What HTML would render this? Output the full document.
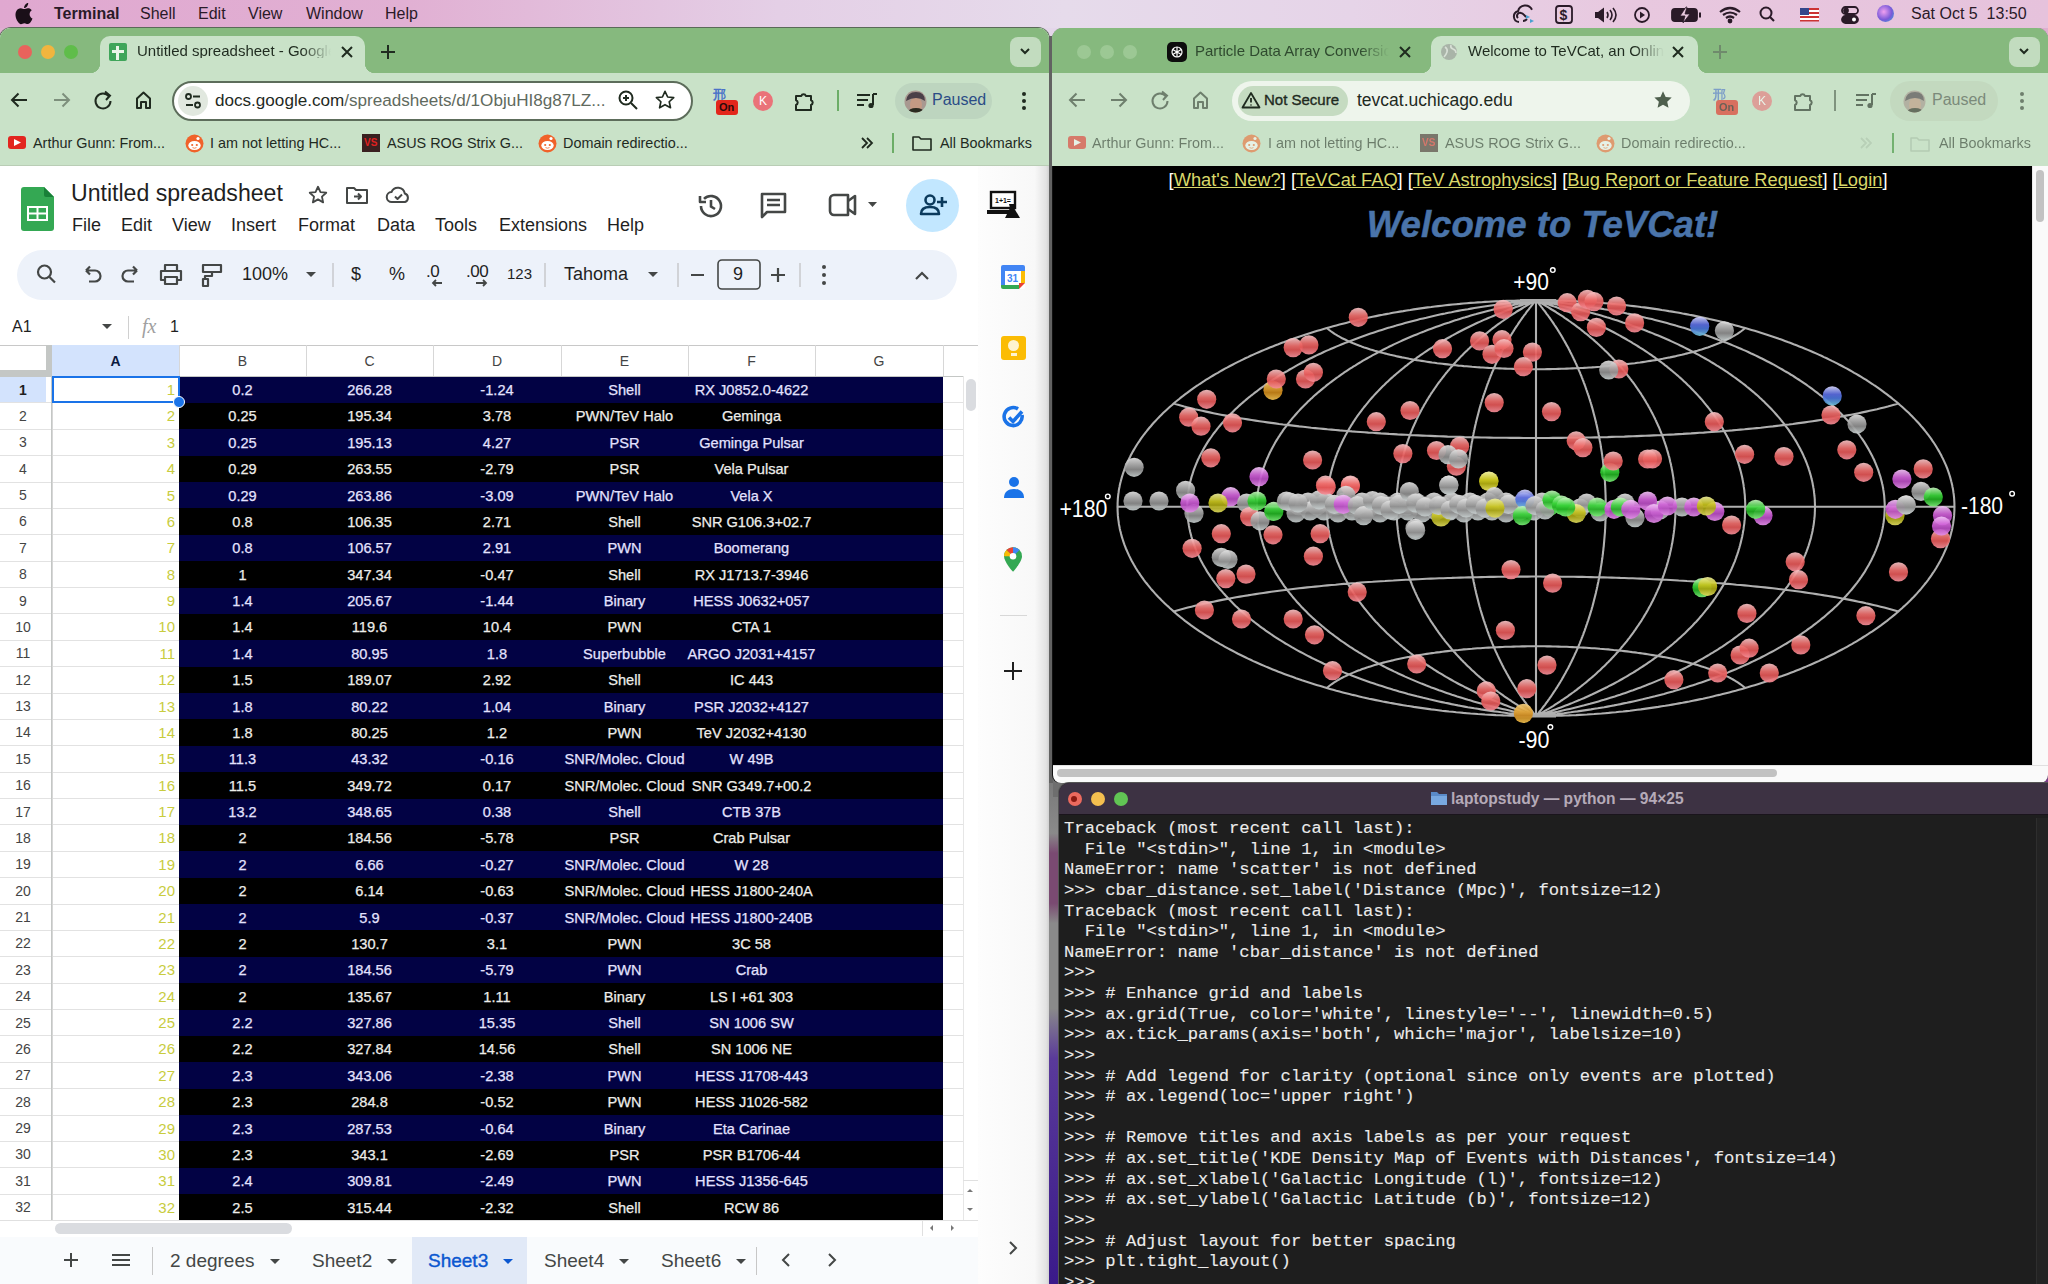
<!DOCTYPE html><html><head><meta charset="utf-8"><style>
*{margin:0;padding:0;box-sizing:border-box}
html,body{width:2048px;height:1284px;overflow:hidden;background:#dfaed0;font-family:"Liberation Sans",sans-serif;position:relative}
.abs{position:absolute}
.t{position:absolute;white-space:nowrap;line-height:1}
svg{position:absolute;overflow:visible}
</style></head><body>

<div class="abs" style="left:1030px;top:20px;width:40px;height:30px;background:#e4d6ea"></div>
<div class="abs" style="left:0;top:0;width:2048px;height:28px;background:linear-gradient(90deg,#e0a8d0 0%,#e1b0d3 20%,#e4cfe6 38%,#e6dbeb 52%,#e6d4e8 66%,#e8c8df 80%,#e6c2dc 100%)"></div>
<svg style="left:15px;top:3px" width="18" height="21" viewBox="0 0 18 21"><path d="M14.6 11.1c0-2.6 2.1-3.8 2.2-3.9-1.2-1.8-3.1-2-3.7-2-1.6-.2-3.1.9-3.9.9-.8 0-2-.9-3.4-.9C4 5.3 2.3 6.3 1.4 7.9c-1.9 3.2-.5 8 1.3 10.6.9 1.3 2 2.7 3.300 2.7 1.3-.1 1.8-.9 3.4-.9 1.6 0 2 .9 3.4.8 1.4 0 2.3-1.3 3.2-2.6 1-1.5 1.4-2.9 1.4-3-.1 0-2.8-1.100-2.8-4.4zM12.1 3.4c.7-.9 1.2-2.1 1.1-3.3-1 0-2.3.7-3 1.6-.7.8-1.2 2-1.1 3.2 1.1.1 2.3-.6 3-1.5z" fill="#1a0f18"/></svg>
<div class="t" style="left:54px;top:6px;font-size:16px;color:#2a1a28;font-weight:bold;">Terminal</div>
<div class="t" style="left:140px;top:6px;font-size:16px;color:#2a1a28;">Shell</div>
<div class="t" style="left:198px;top:6px;font-size:16px;color:#2a1a28;">Edit</div>
<div class="t" style="left:248px;top:6px;font-size:16px;color:#2a1a28;">View</div>
<div class="t" style="left:306px;top:6px;font-size:16px;color:#2a1a28;">Window</div>
<div class="t" style="left:385px;top:6px;font-size:16px;color:#2a1a28;">Help</div>
<div class="t" style="left:1911px;top:6px;font-size:16px;color:#2a1a28">Sat Oct 5&nbsp;&nbsp;13:50</div>
<svg style="left:1500px;top:2px" width="400" height="24" viewBox="0 0 400 24" fill="none" stroke="#2a1a28" stroke-width="1.8">
<g transform="translate(11,0)"><path d="M8 20a5.5 5.5 0 0 1-1-10.8 7.5 7.5 0 0 1 14-1.5" stroke-width="2"/><path d="M7 16a3 3 0 0 1 3-5c2 0 3 2 5 4" stroke-width="2"/><path d="M12 19c2 0 3-1 4-2" stroke-width="2"/><path d="M15 13l4 2-4 2zM19 17l4 2-4 2z" fill="#4aa0d0" stroke="none"/></g>
<rect x="56" y="4" width="16" height="17" rx="3"/><text x="59.5" y="18" font-size="14" style="font-family:Liberation Sans,sans-serif" fill="#2a1a28" stroke="none" font-weight="bold">$</text>
<path d="M95 10h3l6-4.5v15L98 16h-3z" fill="#2a1a28" stroke="none"/><path d="M107 10q2 3 0 6M110 8q4 5 0 10M113 6q6 7 0 14" stroke-width="1.6"/>
<circle cx="142" cy="13" r="7"/><path d="M140 9.5v7l5-3.5z" fill="#2a1a28" stroke="none"/>
<rect x="172" y="7" width="25" height="12" rx="3" fill="#2a1a28"/><rect x="199" y="10.5" width="2" height="5" fill="#2a1a28" stroke="none"/><path d="M186 5l-6 9h5l-2 7 7-9h-5l2-7z" fill="#e8c8de" stroke="#2a1a28" stroke-width="0.8"/>
<path d="M220 10q10-8 20 0M223 13q7-5 14 0M226 16q4-3 8 0" stroke-width="2.2"/><circle cx="230" cy="19" r="1.5" fill="#2a1a28"/>
<circle cx="266" cy="11" r="5.5" stroke-width="2"/><path d="M270 15l4 4" stroke-width="2.2"/>
<g stroke="none"><rect x="300" y="6" width="19" height="13" fill="#ffffff"/><rect x="300" y="6" width="19" height="2" fill="#c33"/><rect x="300" y="10" width="19" height="2" fill="#c33"/><rect x="300" y="14" width="19" height="2" fill="#c33"/><rect x="300" y="18" width="19" height="1.5" fill="#c33"/><rect x="300" y="6" width="9" height="7" fill="#34468a"/></g>
<rect x="342" y="5" width="16" height="7" rx="3.5"/><rect x="342" y="14" width="16" height="7" rx="3.5" fill="#2a1a28"/><circle cx="346" cy="8.5" r="2" fill="#2a1a28"/><circle cx="354" cy="17.5" r="2" fill="#fff" stroke="none"/>
</svg>
<div class="abs" style="left:1877px;top:5px;width:17px;height:17px;border-radius:50%;background:radial-gradient(circle at 40% 40%,#f0a0f0,#7a5ad8 55%,#2ab0d8)"></div>
<div class="abs" style="left:0;top:28px;width:1049px;height:1256px;background:#fff;border-radius:11px 11px 0 0;overflow:hidden;box-shadow:0 0 0 1px #5a6a58">
<div class="abs" style="left:0;top:0;width:1049px;height:138px;background:#c9e2c8"></div>
<div class="abs" style="left:0;top:0;width:1049px;height:45px;background:#86b97e"></div>
</div>
<div class="abs" style="left:18px;top:45px;width:14px;height:14px;border-radius:50%;background:#e8635c"></div>
<div class="abs" style="left:41px;top:45px;width:14px;height:14px;border-radius:50%;background:#f1b53f"></div>
<div class="abs" style="left:64px;top:45px;width:14px;height:14px;border-radius:50%;background:#5fbd4a"></div>
<div class="abs" style="left:100px;top:36px;width:265px;height:40px;background:#c9e2c8;border-radius:10px 10px 0 0"></div>
<div class="abs" style="left:90px;top:63px;width:10px;height:10px;background:radial-gradient(circle at 0 0,#86b97e 10px,#c9e2c8 10.5px)"></div>
<div class="abs" style="left:365px;top:63px;width:10px;height:10px;background:radial-gradient(circle at 100% 0,#86b97e 10px,#c9e2c8 10.5px)"></div>
<div class="abs" style="left:109px;top:43px;width:18px;height:18px;background:#3fa55a;border-radius:2px"></div>
<div class="abs" style="left:112px;top:50px;width:12px;height:3px;background:#eaf5e8"></div>
<div class="abs" style="left:116px;top:46px;width:3px;height:14px;background:#eaf5e8"></div>
<div class="t" style="left:137px;top:43px;font-size:15px;color:#1f2b1f;width:194px;overflow:hidden;-webkit-mask-image:linear-gradient(90deg,#000 85%,transparent)">Untitled spreadsheet - Google Sheets</div>
<svg style="left:340px;top:45px" width="14" height="14" viewBox="0 0 14 14" stroke="#1f2b1f" stroke-width="2"><path d="M2 2l10 10M12 2L2 12"/></svg>
<svg style="left:380px;top:44px" width="16" height="16" viewBox="0 0 16 16" stroke="#1f2b1f" stroke-width="2"><path d="M8 1v14M1 8h14"/></svg>
<div class="abs" style="left:1010px;top:37px;width:31px;height:30px;background:#c2dcbf;border-radius:8px"></div>
<svg style="left:1019px;top:47px" width="12" height="10" viewBox="0 0 12 10" fill="none" stroke="#1f2b1f" stroke-width="2"><path d="M2 2l4 4 4-4"/></svg>
<svg style="left:0px;top:73px" width="170" height="50" viewBox="0 0 170 50" fill="none" stroke="#1f2a1f" stroke-width="2">
<path d="M12 27h15M18.5 20.5L12 27l6.5 6.5"/>
<path d="M54 27h15M62.5 20.5L69 27l-6.5 6.5" stroke="#7d8f7c"/>
<path d="M109 23.5a7.5 7.5 0 1 0 1.5 4.5"/><path d="M105 18.5l5 4-4 4.5"/>
<path d="M137 35v-9.5l6.5-6 6.5 6V35h-4v-6h-5v6z" stroke-linejoin="round"/>
</svg>
<div class="abs" style="left:172px;top:81px;width:521px;height:40px;background:#fff;border:2px solid #5d6d5b;border-radius:20px"></div>
<div class="abs" style="left:178px;top:86px;width:30px;height:30px;background:#e1e8df;border-radius:50%"></div>
<svg style="left:184px;top:92px" width="18" height="18" viewBox="0 0 18 18" fill="none" stroke="#1f2a1f" stroke-width="1.8"><circle cx="4.5" cy="4.5" r="2.5"/><path d="M9 4.5h7M2 13h7"/><circle cx="13.5" cy="13" r="2.5"/></svg>
<div class="t" style="left:215px;top:92px;font-size:17.1px;color:#1f2a1f">docs.google.com<span style="color:#5f6a5e">/spreadsheets/d/1ObjuHI8g87LZ...</span></div>
<svg style="left:617px;top:89px" width="22" height="22" viewBox="0 0 22 22" fill="none" stroke="#1f2a1f" stroke-width="2"><circle cx="9" cy="9" r="6.5"/><path d="M14 14l6 6M9 6v6M6 9h6"/></svg>
<svg style="left:654px;top:89px" width="22" height="22" viewBox="0 0 24 24" fill="none" stroke="#1f2a1f" stroke-width="1.8" stroke-linejoin="round"><path d="M12 2.5l2.9 6.2 6.6.7-4.9 4.5 1.4 6.6L12 17.1l-5.9 3.4 1.4-6.6-4.9-4.5 6.6-.7z"/></svg>
<div class="t" style="left:713px;top:88px;font-size:13px;color:#4a72c8;font-weight:bold">邢</div>
<div class="abs" style="left:716px;top:100px;width:22px;height:15px;background:#e3261b;border-radius:3px"></div>
<div class="t" style="left:719px;top:102px;font-size:11px;color:#2a0a0a;font-weight:bold">On</div>
<div class="abs" style="left:753px;top:91px;width:20px;height:20px;border-radius:50%;background:#ea7379"></div>
<div class="t" style="left:759px;top:95px;font-size:12px;color:#fff">K</div>
<svg style="left:793px;top:89px" width="24" height="24" viewBox="0 0 24 24" fill="none" stroke="#1f2a1f" stroke-width="2" stroke-linejoin="round"><path d="M3 7h5.3a2.4 2.4 0 0 1 4.6 0H18v4.3a2.4 2.4 0 0 1 0 4.6V21H3v-5.1a2.4 2.4 0 0 0 0-4.6z"/></svg>
<div class="abs" style="left:837px;top:90px;width:2px;height:21px;background:#6cad67"></div>
<svg style="left:855px;top:90px" width="24" height="22" viewBox="0 0 24 22" fill="none" stroke="#1f2a1f" stroke-width="2"><path d="M2 5h13M2 10h11M2 15h7"/><path d="M18 4v11" /><circle cx="16" cy="15.5" r="2.6" fill="#1f2a1f" stroke="none"/><path d="M18 4h4"/></svg>
<div class="abs" style="left:895px;top:83px;width:97px;height:36px;background:#bdd5bf;border-radius:18px"></div>
<svg style="left:904px;top:89.5px" width="23" height="23" viewBox="0 0 23 23"><defs><clipPath id="avc"><circle cx="11.5" cy="11.5" r="11"/></clipPath></defs><g clip-path="url(#avc)"><rect width="23" height="23" fill="#a89890"/><ellipse cx="12" cy="15" rx="6" ry="8" fill="#c49a84"/><path d="M2 11q1-9 10-9t9 9q-4-3-9-3t-10 3z" fill="#4a4048"/><path d="M3 23q2-5 9-5t9 5z" fill="#2a2a20"/></g></svg>
<div class="t" style="left:932px;top:92px;font-size:16px;color:#2b4c86">Paused</div>
<svg style="left:1020px;top:91px" width="8" height="20" viewBox="0 0 8 20" fill="#1f2a1f"><circle cx="4" cy="3" r="2"/><circle cx="4" cy="10" r="2"/><circle cx="4" cy="17" r="2"/></svg>
<div class="abs" style="left:8px;top:136px;width:18px;height:13px;background:#e2261f;border-radius:3px;opacity:1"></div><svg style="left:14px;top:139px" width="7" height="7" viewBox="0 0 7 7"><path d="M0 0l7 3.5L0 7z" fill="#fff"/></svg>
<div class="t" style="left:33px;top:136px;font-size:14.4px;color:#1f2a1f">Arthur Gunn: From...</div>
<svg style="left:185px;top:134px;opacity:1" width="19" height="19" viewBox="0 0 19 19"><circle cx="9.5" cy="9.5" r="9" fill="#f0622a"/><ellipse cx="9.5" cy="11.5" rx="6.2" ry="4.6" fill="#fff"/><circle cx="7.2" cy="11" r="1.1" fill="#f0622a"/><circle cx="11.8" cy="11" r="1.1" fill="#f0622a"/><circle cx="13" cy="4.5" r="1.6" fill="#fff"/><path d="M7.5 13.6q2 1.2 4 0" stroke="#f0622a" stroke-width="0.8" fill="none"/></svg>
<div class="t" style="left:210px;top:136px;font-size:14.4px;color:#1f2a1f">I am not letting HC...</div>
<div class="abs" style="left:362px;top:134px;width:18px;height:18px;background:#3a2020;opacity:1"></div><div class="t" style="left:364px;top:138px;font-size:10px;font-weight:bold;color:#e02020;opacity:1">VS</div>
<div class="t" style="left:387px;top:136px;font-size:14.4px;color:#1f2a1f">ASUS ROG Strix G...</div>
<svg style="left:538px;top:134px;opacity:1" width="19" height="19" viewBox="0 0 19 19"><circle cx="9.5" cy="9.5" r="9" fill="#f0622a"/><ellipse cx="9.5" cy="11.5" rx="6.2" ry="4.6" fill="#fff"/><circle cx="7.2" cy="11" r="1.1" fill="#f0622a"/><circle cx="11.8" cy="11" r="1.1" fill="#f0622a"/><circle cx="13" cy="4.5" r="1.6" fill="#fff"/><path d="M7.5 13.6q2 1.2 4 0" stroke="#f0622a" stroke-width="0.8" fill="none"/></svg>
<div class="t" style="left:563px;top:136px;font-size:14.4px;color:#1f2a1f">Domain redirectio...</div>
<svg style="left:860px;top:137px" width="14" height="12" viewBox="0 0 14 12" fill="none" stroke="#1f2a1f" stroke-width="1.8"><path d="M2 1l5 5-5 5M7 1l5 5-5 5"/></svg>
<div class="abs" style="left:892px;top:133px;width:2px;height:20px;background:#6cad67"></div>
<svg style="left:912px;top:135px" width="20" height="16" viewBox="0 0 20 16" fill="none" stroke="#1f2a1f" stroke-width="1.6"><path d="M1 2h6l2 2h10v11H1z" stroke-linejoin="round"/></svg>
<div class="t" style="left:940px;top:136px;font-size:14.4px;color:#1f2a1f">All Bookmarks</div>
<div class="abs" style="left:0;top:165px;width:1049px;height:1px;background:#b9cdb5"></div>
<svg style="left:21px;top:187px" width="33" height="44" viewBox="0 0 33 44"><path d="M3 0h20l10 10v31a3 3 0 0 1-3 3H3a3 3 0 0 1-3-3V3a3 3 0 0 1 3-3z" fill="#34a853"/><path d="M23 0l10 10H25a2 2 0 0 1-2-2z" fill="#188038"/><rect x="6" y="19" width="21" height="15" fill="#fff"/><rect x="8" y="21" width="7.5" height="4.5" fill="#34a853"/><rect x="17.5" y="21" width="7.5" height="4.5" fill="#34a853"/><rect x="8" y="27.5" width="7.5" height="4.5" fill="#34a853"/><rect x="17.5" y="27.5" width="7.5" height="4.5" fill="#34a853"/></svg>
<div class="t" style="left:71px;top:182px;font-size:23.1px;color:#1f1f1f">Untitled spreadsheet</div>
<svg style="left:307px;top:184px" width="22" height="22" viewBox="0 0 24 24" fill="none" stroke="#444746" stroke-width="2" stroke-linejoin="round"><path d="M12 3l2.7 5.8 6.3.7-4.7 4.3 1.3 6.2L12 16.8 6.4 20l1.3-6.2L3 9.5l6.3-.7z"/></svg>
<svg style="left:346px;top:185px" width="22" height="20" viewBox="0 0 22 20" fill="none" stroke="#444746" stroke-width="2" stroke-linejoin="round"><path d="M1 3h7l2 2h11v13H1z"/><path d="M8 11.5h7M12 8.5l3 3-3 3"/></svg>
<svg style="left:386px;top:185px" width="25" height="19" viewBox="0 0 25 19" fill="none" stroke="#444746" stroke-width="2" stroke-linejoin="round"><path d="M6 17a5 5 0 0 1-.5-10 7 7 0 0 1 13.3 1.5A4.5 4.5 0 0 1 19 17z"/><path d="M9 11.5l2.5 2.5 4.5-4.5"/></svg>
<div class="t" style="left:72px;top:216px;font-size:18px;color:#1f1f1f">File</div>
<div class="t" style="left:121px;top:216px;font-size:18px;color:#1f1f1f">Edit</div>
<div class="t" style="left:172px;top:216px;font-size:18px;color:#1f1f1f">View</div>
<div class="t" style="left:231px;top:216px;font-size:18px;color:#1f1f1f">Insert</div>
<div class="t" style="left:298px;top:216px;font-size:18px;color:#1f1f1f">Format</div>
<div class="t" style="left:377px;top:216px;font-size:18px;color:#1f1f1f">Data</div>
<div class="t" style="left:435px;top:216px;font-size:18px;color:#1f1f1f">Tools</div>
<div class="t" style="left:499px;top:216px;font-size:18px;color:#1f1f1f">Extensions</div>
<div class="t" style="left:607px;top:216px;font-size:18px;color:#1f1f1f">Help</div>
<svg style="left:696px;top:191px" width="30" height="30" viewBox="0 0 30 30" fill="none" stroke="#444746" stroke-width="2.6"><path d="M5 15a10 10 0 1 0 3-7.1"/><path d="M4 5v6h6" stroke-linejoin="round"/><path d="M15 9v6.5l4 2.5"/></svg>
<svg style="left:759px;top:191px" width="29" height="29" viewBox="0 0 29 29" fill="none" stroke="#444746" stroke-width="2.6" stroke-linejoin="round"><path d="M3 3h23v18H8l-5 5z"/><path d="M8 9h13M8 14h13"/></svg>
<svg style="left:828px;top:192px" width="52" height="26" viewBox="0 0 52 26" fill="none" stroke="#444746" stroke-width="2.6" stroke-linejoin="round"><path d="M2 7a4 4 0 0 1 4-4h14v20H6a4 4 0 0 1-4-4z"/><path d="M20 9l7-5v18l-7-5"/><path d="M40 10l4.5 5 4.5-5z" fill="#444746" stroke="none"/></svg>
<div class="abs" style="left:906px;top:179px;width:53px;height:53px;border-radius:50%;background:#c2e7ff"></div>
<svg style="left:919px;top:192px" width="28" height="26" viewBox="0 0 28 26" fill="none" stroke="#0b3a5c" stroke-width="2.6"><circle cx="11" cy="8" r="4.5"/><path d="M2 22c0-5 4-7 9-7s9 2 9 7z" stroke-linejoin="round"/><path d="M23 5v10M18 10h10"/></svg>
<div class="abs" style="left:17px;top:250px;width:940px;height:50px;background:#edf2fa;border-radius:25px"></div>
<svg style="left:17px;top:250px" width="940" height="50" viewBox="0 0 940 50" fill="none" stroke="#444746" stroke-width="2.2">
<circle cx="27.5" cy="22" r="6.5"/><path d="M32.5 27l5.5 5.5"/>
<path d="M69 20.5h9a5.5 5.5 0 0 1 0 11h-6M69 20.5l4-4M69 20.5l4 4"/>
<path d="M120 20.5h-9a5.5 5.5 0 0 0 0 11h6M120 20.5l-4-4M120 20.5l-4 4"/>
<path d="M147 30h-3v-9h20v9h-3M148 21v-6h12v6M148 27h12v7h-12z" stroke-linejoin="round"/>
<path d="M186 15h18v7h-18zM195 22v4h-7v3M186 29h5v7h-5z" stroke-linejoin="round"/>
<path d="M289 22l5 5 5-5z" fill="#444746" stroke="none"/>
<path d="M316 13v24" stroke="#c7c9cc" stroke-width="1.5"/>
<path d="M528 13v24M661 13v24M783 13v24" stroke="#c7c9cc" stroke-width="1.5"/>
<path d="M631 22l5 5 5-5z" fill="#444746" stroke="none"/>
<path d="M674 25h13M754 25h14M761 18v14"/>
<rect x="701" y="10" width="42" height="29" rx="4" stroke-width="1.6"/>
<circle cx="807" cy="17" r="2" fill="#444746" stroke="none"/><circle cx="807" cy="25" r="2" fill="#444746" stroke="none"/><circle cx="807" cy="33" r="2" fill="#444746" stroke="none"/>
<path d="M899 29l6-6 6 6"/>
<path d="M416 33h9M419 30l-3 3 3 3" stroke-width="1.8"/>
<path d="M459 33h10M466 30l3 3-3 3" stroke-width="1.8"/>
</svg>
<div class="t" style="left:242px;top:265px;font-size:18px;color:#1f1f1f">100%</div>
<div class="t" style="left:351px;top:265px;font-size:18px;color:#1f1f1f">$</div>
<div class="t" style="left:389px;top:265px;font-size:18px;color:#1f1f1f">%</div>
<div class="t" style="left:426px;top:263px;font-size:17px;color:#1f1f1f;letter-spacing:-0.5px">.0</div>
<div class="t" style="left:466px;top:263px;font-size:17px;color:#1f1f1f;letter-spacing:-0.5px">.00</div>
<div class="t" style="left:507px;top:266px;font-size:15px;color:#1f1f1f">123</div>
<div class="t" style="left:564px;top:265px;font-size:18px;color:#1f1f1f">Tahoma</div>
<div class="t" style="left:733px;top:265px;font-size:18px;color:#1f1f1f">9</div>
<div class="t" style="left:12px;top:319px;font-size:16px;color:#1f1f1f">A1</div>
<svg style="left:101px;top:323px" width="12" height="8" viewBox="0 0 12 8"><path d="M1 1l5 5 5-5z" fill="#444746"/></svg>
<div class="abs" style="left:128px;top:316px;width:1px;height:23px;background:#d0d0d0"></div>
<div class="t" style="left:142px;top:316px;font-size:20px;color:#a0a0a0;font-family:'Liberation Serif',serif;font-style:italic">fx</div>
<div class="t" style="left:170px;top:319px;font-size:16px;color:#1f1f1f">1</div>
<div class="abs" style="left:0;top:345px;width:978px;height:1px;background:#c8c8c8"></div>
<div class="abs" style="left:0;top:345px;width:963px;height:31px;background:#fff"></div>
<div class="abs" style="left:0;top:345px;width:978px;height:1px;background:#c8c8c8"></div>
<div class="abs" style="left:52px;top:345px;width:127px;height:31px;background:#d3e3fd"></div>
<div class="abs" style="left:0;top:376px;width:46px;height:27px;background:#d3e3fd"></div>
<div class="t" style="left:95.5px;width:40px;text-align:center;top:354px;font-size:14px;font-weight:bold;color:#0b1a40;">A</div>
<div class="abs" style="left:179px;top:345px;width:1px;height:31px;background:#d7d7d7"></div>
<div class="t" style="left:222.5px;width:40px;text-align:center;top:354px;font-size:14px;color:#444;">B</div>
<div class="abs" style="left:306px;top:345px;width:1px;height:31px;background:#d7d7d7"></div>
<div class="t" style="left:349.5px;width:40px;text-align:center;top:354px;font-size:14px;color:#444;">C</div>
<div class="abs" style="left:433px;top:345px;width:1px;height:31px;background:#d7d7d7"></div>
<div class="t" style="left:477.0px;width:40px;text-align:center;top:354px;font-size:14px;color:#444;">D</div>
<div class="abs" style="left:561px;top:345px;width:1px;height:31px;background:#d7d7d7"></div>
<div class="t" style="left:604.5px;width:40px;text-align:center;top:354px;font-size:14px;color:#444;">E</div>
<div class="abs" style="left:688px;top:345px;width:1px;height:31px;background:#d7d7d7"></div>
<div class="t" style="left:731.5px;width:40px;text-align:center;top:354px;font-size:14px;color:#444;">F</div>
<div class="abs" style="left:815px;top:345px;width:1px;height:31px;background:#d7d7d7"></div>
<div class="t" style="left:859.0px;width:40px;text-align:center;top:354px;font-size:14px;color:#444;">G</div>
<div class="abs" style="left:943px;top:345px;width:1px;height:31px;background:#d7d7d7"></div>
<div class="abs" style="left:46px;top:345px;width:6px;height:31px;background:#c4c7c5"></div>
<div class="abs" style="left:0;top:370px;width:52px;height:6px;background:#c4c7c5"></div>
<div class="abs" style="left:0;top:376px;width:963px;height:1px;background:#c4c7c5"></div>
<div class="abs" style="left:179px;top:376.50px;width:764px;height:26.88px;background:#020244"></div>
<div class="abs" style="left:0;top:402.38px;width:179px;height:1px;background:#e2e2e2"></div>
<div class="abs" style="left:943px;top:402.38px;width:20px;height:1px;background:#e2e2e2"></div>
<div class="t" style="left:0;width:46px;text-align:center;top:382.5px;font-size:14px;color:#1f1f1f;font-weight:bold;">1</div>
<div class="t" style="left:52px;width:123px;text-align:right;top:382.0px;font-size:15px;color:#c8cc3e">1</div>
<div class="t" style="left:172.5px;width:140px;text-align:center;top:383.0px;font-size:14.6px;color:#e4e2ff;-webkit-text-stroke:0.25px #e4e2ff">0.2</div>
<div class="t" style="left:299.5px;width:140px;text-align:center;top:383.0px;font-size:14.6px;color:#e4e2ff;-webkit-text-stroke:0.25px #e4e2ff">266.28</div>
<div class="t" style="left:427.0px;width:140px;text-align:center;top:383.0px;font-size:14.6px;color:#e4e2ff;-webkit-text-stroke:0.25px #e4e2ff">-1.24</div>
<div class="t" style="left:554.5px;width:140px;text-align:center;top:383.0px;font-size:14.6px;color:#e4e2ff;-webkit-text-stroke:0.25px #e4e2ff">Shell</div>
<div class="t" style="left:681.5px;width:140px;text-align:center;top:383.0px;font-size:14.6px;color:#e4e2ff;-webkit-text-stroke:0.25px #e4e2ff">RX J0852.0-4622</div>
<div class="abs" style="left:179px;top:402.88px;width:764px;height:26.88px;background:#000"></div>
<div class="abs" style="left:0;top:428.75px;width:179px;height:1px;background:#e2e2e2"></div>
<div class="abs" style="left:943px;top:428.75px;width:20px;height:1px;background:#e2e2e2"></div>
<div class="t" style="left:0;width:46px;text-align:center;top:408.9px;font-size:14px;color:#444;">2</div>
<div class="t" style="left:52px;width:123px;text-align:right;top:408.4px;font-size:15px;color:#c8cc3e">2</div>
<div class="t" style="left:172.5px;width:140px;text-align:center;top:409.4px;font-size:14.6px;color:#ededea;-webkit-text-stroke:0.25px #ededea">0.25</div>
<div class="t" style="left:299.5px;width:140px;text-align:center;top:409.4px;font-size:14.6px;color:#ededea;-webkit-text-stroke:0.25px #ededea">195.34</div>
<div class="t" style="left:427.0px;width:140px;text-align:center;top:409.4px;font-size:14.6px;color:#ededea;-webkit-text-stroke:0.25px #ededea">3.78</div>
<div class="t" style="left:554.5px;width:140px;text-align:center;top:409.4px;font-size:14.6px;color:#ededea;-webkit-text-stroke:0.25px #ededea">PWN/TeV Halo</div>
<div class="t" style="left:681.5px;width:140px;text-align:center;top:409.4px;font-size:14.6px;color:#ededea;-webkit-text-stroke:0.25px #ededea">Geminga</div>
<div class="abs" style="left:179px;top:429.25px;width:764px;height:26.88px;background:#020244"></div>
<div class="abs" style="left:0;top:455.12px;width:179px;height:1px;background:#e2e2e2"></div>
<div class="abs" style="left:943px;top:455.12px;width:20px;height:1px;background:#e2e2e2"></div>
<div class="t" style="left:0;width:46px;text-align:center;top:435.2px;font-size:14px;color:#444;">3</div>
<div class="t" style="left:52px;width:123px;text-align:right;top:434.8px;font-size:15px;color:#c8cc3e">3</div>
<div class="t" style="left:172.5px;width:140px;text-align:center;top:435.8px;font-size:14.6px;color:#e4e2ff;-webkit-text-stroke:0.25px #e4e2ff">0.25</div>
<div class="t" style="left:299.5px;width:140px;text-align:center;top:435.8px;font-size:14.6px;color:#e4e2ff;-webkit-text-stroke:0.25px #e4e2ff">195.13</div>
<div class="t" style="left:427.0px;width:140px;text-align:center;top:435.8px;font-size:14.6px;color:#e4e2ff;-webkit-text-stroke:0.25px #e4e2ff">4.27</div>
<div class="t" style="left:554.5px;width:140px;text-align:center;top:435.8px;font-size:14.6px;color:#e4e2ff;-webkit-text-stroke:0.25px #e4e2ff">PSR</div>
<div class="t" style="left:681.5px;width:140px;text-align:center;top:435.8px;font-size:14.6px;color:#e4e2ff;-webkit-text-stroke:0.25px #e4e2ff">Geminga Pulsar</div>
<div class="abs" style="left:179px;top:455.62px;width:764px;height:26.88px;background:#000"></div>
<div class="abs" style="left:0;top:481.50px;width:179px;height:1px;background:#e2e2e2"></div>
<div class="abs" style="left:943px;top:481.50px;width:20px;height:1px;background:#e2e2e2"></div>
<div class="t" style="left:0;width:46px;text-align:center;top:461.6px;font-size:14px;color:#444;">4</div>
<div class="t" style="left:52px;width:123px;text-align:right;top:461.1px;font-size:15px;color:#c8cc3e">4</div>
<div class="t" style="left:172.5px;width:140px;text-align:center;top:462.1px;font-size:14.6px;color:#ededea;-webkit-text-stroke:0.25px #ededea">0.29</div>
<div class="t" style="left:299.5px;width:140px;text-align:center;top:462.1px;font-size:14.6px;color:#ededea;-webkit-text-stroke:0.25px #ededea">263.55</div>
<div class="t" style="left:427.0px;width:140px;text-align:center;top:462.1px;font-size:14.6px;color:#ededea;-webkit-text-stroke:0.25px #ededea">-2.79</div>
<div class="t" style="left:554.5px;width:140px;text-align:center;top:462.1px;font-size:14.6px;color:#ededea;-webkit-text-stroke:0.25px #ededea">PSR</div>
<div class="t" style="left:681.5px;width:140px;text-align:center;top:462.1px;font-size:14.6px;color:#ededea;-webkit-text-stroke:0.25px #ededea">Vela Pulsar</div>
<div class="abs" style="left:179px;top:482.00px;width:764px;height:26.88px;background:#020244"></div>
<div class="abs" style="left:0;top:507.88px;width:179px;height:1px;background:#e2e2e2"></div>
<div class="abs" style="left:943px;top:507.88px;width:20px;height:1px;background:#e2e2e2"></div>
<div class="t" style="left:0;width:46px;text-align:center;top:488.0px;font-size:14px;color:#444;">5</div>
<div class="t" style="left:52px;width:123px;text-align:right;top:487.5px;font-size:15px;color:#c8cc3e">5</div>
<div class="t" style="left:172.5px;width:140px;text-align:center;top:488.5px;font-size:14.6px;color:#e4e2ff;-webkit-text-stroke:0.25px #e4e2ff">0.29</div>
<div class="t" style="left:299.5px;width:140px;text-align:center;top:488.5px;font-size:14.6px;color:#e4e2ff;-webkit-text-stroke:0.25px #e4e2ff">263.86</div>
<div class="t" style="left:427.0px;width:140px;text-align:center;top:488.5px;font-size:14.6px;color:#e4e2ff;-webkit-text-stroke:0.25px #e4e2ff">-3.09</div>
<div class="t" style="left:554.5px;width:140px;text-align:center;top:488.5px;font-size:14.6px;color:#e4e2ff;-webkit-text-stroke:0.25px #e4e2ff">PWN/TeV Halo</div>
<div class="t" style="left:681.5px;width:140px;text-align:center;top:488.5px;font-size:14.6px;color:#e4e2ff;-webkit-text-stroke:0.25px #e4e2ff">Vela X</div>
<div class="abs" style="left:179px;top:508.38px;width:764px;height:26.88px;background:#000"></div>
<div class="abs" style="left:0;top:534.25px;width:179px;height:1px;background:#e2e2e2"></div>
<div class="abs" style="left:943px;top:534.25px;width:20px;height:1px;background:#e2e2e2"></div>
<div class="t" style="left:0;width:46px;text-align:center;top:514.4px;font-size:14px;color:#444;">6</div>
<div class="t" style="left:52px;width:123px;text-align:right;top:513.9px;font-size:15px;color:#c8cc3e">6</div>
<div class="t" style="left:172.5px;width:140px;text-align:center;top:514.9px;font-size:14.6px;color:#ededea;-webkit-text-stroke:0.25px #ededea">0.8</div>
<div class="t" style="left:299.5px;width:140px;text-align:center;top:514.9px;font-size:14.6px;color:#ededea;-webkit-text-stroke:0.25px #ededea">106.35</div>
<div class="t" style="left:427.0px;width:140px;text-align:center;top:514.9px;font-size:14.6px;color:#ededea;-webkit-text-stroke:0.25px #ededea">2.71</div>
<div class="t" style="left:554.5px;width:140px;text-align:center;top:514.9px;font-size:14.6px;color:#ededea;-webkit-text-stroke:0.25px #ededea">Shell</div>
<div class="t" style="left:681.5px;width:140px;text-align:center;top:514.9px;font-size:14.6px;color:#ededea;-webkit-text-stroke:0.25px #ededea">SNR G106.3+02.7</div>
<div class="abs" style="left:179px;top:534.75px;width:764px;height:26.88px;background:#020244"></div>
<div class="abs" style="left:0;top:560.62px;width:179px;height:1px;background:#e2e2e2"></div>
<div class="abs" style="left:943px;top:560.62px;width:20px;height:1px;background:#e2e2e2"></div>
<div class="t" style="left:0;width:46px;text-align:center;top:540.8px;font-size:14px;color:#444;">7</div>
<div class="t" style="left:52px;width:123px;text-align:right;top:540.2px;font-size:15px;color:#c8cc3e">7</div>
<div class="t" style="left:172.5px;width:140px;text-align:center;top:541.2px;font-size:14.6px;color:#e4e2ff;-webkit-text-stroke:0.25px #e4e2ff">0.8</div>
<div class="t" style="left:299.5px;width:140px;text-align:center;top:541.2px;font-size:14.6px;color:#e4e2ff;-webkit-text-stroke:0.25px #e4e2ff">106.57</div>
<div class="t" style="left:427.0px;width:140px;text-align:center;top:541.2px;font-size:14.6px;color:#e4e2ff;-webkit-text-stroke:0.25px #e4e2ff">2.91</div>
<div class="t" style="left:554.5px;width:140px;text-align:center;top:541.2px;font-size:14.6px;color:#e4e2ff;-webkit-text-stroke:0.25px #e4e2ff">PWN</div>
<div class="t" style="left:681.5px;width:140px;text-align:center;top:541.2px;font-size:14.6px;color:#e4e2ff;-webkit-text-stroke:0.25px #e4e2ff">Boomerang</div>
<div class="abs" style="left:179px;top:561.12px;width:764px;height:26.88px;background:#000"></div>
<div class="abs" style="left:0;top:587.00px;width:179px;height:1px;background:#e2e2e2"></div>
<div class="abs" style="left:943px;top:587.00px;width:20px;height:1px;background:#e2e2e2"></div>
<div class="t" style="left:0;width:46px;text-align:center;top:567.1px;font-size:14px;color:#444;">8</div>
<div class="t" style="left:52px;width:123px;text-align:right;top:566.6px;font-size:15px;color:#c8cc3e">8</div>
<div class="t" style="left:172.5px;width:140px;text-align:center;top:567.6px;font-size:14.6px;color:#ededea;-webkit-text-stroke:0.25px #ededea">1</div>
<div class="t" style="left:299.5px;width:140px;text-align:center;top:567.6px;font-size:14.6px;color:#ededea;-webkit-text-stroke:0.25px #ededea">347.34</div>
<div class="t" style="left:427.0px;width:140px;text-align:center;top:567.6px;font-size:14.6px;color:#ededea;-webkit-text-stroke:0.25px #ededea">-0.47</div>
<div class="t" style="left:554.5px;width:140px;text-align:center;top:567.6px;font-size:14.6px;color:#ededea;-webkit-text-stroke:0.25px #ededea">Shell</div>
<div class="t" style="left:681.5px;width:140px;text-align:center;top:567.6px;font-size:14.6px;color:#ededea;-webkit-text-stroke:0.25px #ededea">RX J1713.7-3946</div>
<div class="abs" style="left:179px;top:587.50px;width:764px;height:26.88px;background:#020244"></div>
<div class="abs" style="left:0;top:613.38px;width:179px;height:1px;background:#e2e2e2"></div>
<div class="abs" style="left:943px;top:613.38px;width:20px;height:1px;background:#e2e2e2"></div>
<div class="t" style="left:0;width:46px;text-align:center;top:593.5px;font-size:14px;color:#444;">9</div>
<div class="t" style="left:52px;width:123px;text-align:right;top:593.0px;font-size:15px;color:#c8cc3e">9</div>
<div class="t" style="left:172.5px;width:140px;text-align:center;top:594.0px;font-size:14.6px;color:#e4e2ff;-webkit-text-stroke:0.25px #e4e2ff">1.4</div>
<div class="t" style="left:299.5px;width:140px;text-align:center;top:594.0px;font-size:14.6px;color:#e4e2ff;-webkit-text-stroke:0.25px #e4e2ff">205.67</div>
<div class="t" style="left:427.0px;width:140px;text-align:center;top:594.0px;font-size:14.6px;color:#e4e2ff;-webkit-text-stroke:0.25px #e4e2ff">-1.44</div>
<div class="t" style="left:554.5px;width:140px;text-align:center;top:594.0px;font-size:14.6px;color:#e4e2ff;-webkit-text-stroke:0.25px #e4e2ff">Binary</div>
<div class="t" style="left:681.5px;width:140px;text-align:center;top:594.0px;font-size:14.6px;color:#e4e2ff;-webkit-text-stroke:0.25px #e4e2ff">HESS J0632+057</div>
<div class="abs" style="left:179px;top:613.88px;width:764px;height:26.88px;background:#000"></div>
<div class="abs" style="left:0;top:639.75px;width:179px;height:1px;background:#e2e2e2"></div>
<div class="abs" style="left:943px;top:639.75px;width:20px;height:1px;background:#e2e2e2"></div>
<div class="t" style="left:0;width:46px;text-align:center;top:619.9px;font-size:14px;color:#444;">10</div>
<div class="t" style="left:52px;width:123px;text-align:right;top:619.4px;font-size:15px;color:#c8cc3e">10</div>
<div class="t" style="left:172.5px;width:140px;text-align:center;top:620.4px;font-size:14.6px;color:#ededea;-webkit-text-stroke:0.25px #ededea">1.4</div>
<div class="t" style="left:299.5px;width:140px;text-align:center;top:620.4px;font-size:14.6px;color:#ededea;-webkit-text-stroke:0.25px #ededea">119.6</div>
<div class="t" style="left:427.0px;width:140px;text-align:center;top:620.4px;font-size:14.6px;color:#ededea;-webkit-text-stroke:0.25px #ededea">10.4</div>
<div class="t" style="left:554.5px;width:140px;text-align:center;top:620.4px;font-size:14.6px;color:#ededea;-webkit-text-stroke:0.25px #ededea">PWN</div>
<div class="t" style="left:681.5px;width:140px;text-align:center;top:620.4px;font-size:14.6px;color:#ededea;-webkit-text-stroke:0.25px #ededea">CTA 1</div>
<div class="abs" style="left:179px;top:640.25px;width:764px;height:26.88px;background:#020244"></div>
<div class="abs" style="left:0;top:666.12px;width:179px;height:1px;background:#e2e2e2"></div>
<div class="abs" style="left:943px;top:666.12px;width:20px;height:1px;background:#e2e2e2"></div>
<div class="t" style="left:0;width:46px;text-align:center;top:646.2px;font-size:14px;color:#444;">11</div>
<div class="t" style="left:52px;width:123px;text-align:right;top:645.8px;font-size:15px;color:#c8cc3e">11</div>
<div class="t" style="left:172.5px;width:140px;text-align:center;top:646.8px;font-size:14.6px;color:#e4e2ff;-webkit-text-stroke:0.25px #e4e2ff">1.4</div>
<div class="t" style="left:299.5px;width:140px;text-align:center;top:646.8px;font-size:14.6px;color:#e4e2ff;-webkit-text-stroke:0.25px #e4e2ff">80.95</div>
<div class="t" style="left:427.0px;width:140px;text-align:center;top:646.8px;font-size:14.6px;color:#e4e2ff;-webkit-text-stroke:0.25px #e4e2ff">1.8</div>
<div class="t" style="left:554.5px;width:140px;text-align:center;top:646.8px;font-size:14.6px;color:#e4e2ff;-webkit-text-stroke:0.25px #e4e2ff">Superbubble</div>
<div class="t" style="left:681.5px;width:140px;text-align:center;top:646.8px;font-size:14.6px;color:#e4e2ff;-webkit-text-stroke:0.25px #e4e2ff">ARGO J2031+4157</div>
<div class="abs" style="left:179px;top:666.62px;width:764px;height:26.88px;background:#000"></div>
<div class="abs" style="left:0;top:692.50px;width:179px;height:1px;background:#e2e2e2"></div>
<div class="abs" style="left:943px;top:692.50px;width:20px;height:1px;background:#e2e2e2"></div>
<div class="t" style="left:0;width:46px;text-align:center;top:672.6px;font-size:14px;color:#444;">12</div>
<div class="t" style="left:52px;width:123px;text-align:right;top:672.1px;font-size:15px;color:#c8cc3e">12</div>
<div class="t" style="left:172.5px;width:140px;text-align:center;top:673.1px;font-size:14.6px;color:#ededea;-webkit-text-stroke:0.25px #ededea">1.5</div>
<div class="t" style="left:299.5px;width:140px;text-align:center;top:673.1px;font-size:14.6px;color:#ededea;-webkit-text-stroke:0.25px #ededea">189.07</div>
<div class="t" style="left:427.0px;width:140px;text-align:center;top:673.1px;font-size:14.6px;color:#ededea;-webkit-text-stroke:0.25px #ededea">2.92</div>
<div class="t" style="left:554.5px;width:140px;text-align:center;top:673.1px;font-size:14.6px;color:#ededea;-webkit-text-stroke:0.25px #ededea">Shell</div>
<div class="t" style="left:681.5px;width:140px;text-align:center;top:673.1px;font-size:14.6px;color:#ededea;-webkit-text-stroke:0.25px #ededea">IC 443</div>
<div class="abs" style="left:179px;top:693.00px;width:764px;height:26.88px;background:#020244"></div>
<div class="abs" style="left:0;top:718.88px;width:179px;height:1px;background:#e2e2e2"></div>
<div class="abs" style="left:943px;top:718.88px;width:20px;height:1px;background:#e2e2e2"></div>
<div class="t" style="left:0;width:46px;text-align:center;top:699.0px;font-size:14px;color:#444;">13</div>
<div class="t" style="left:52px;width:123px;text-align:right;top:698.5px;font-size:15px;color:#c8cc3e">13</div>
<div class="t" style="left:172.5px;width:140px;text-align:center;top:699.5px;font-size:14.6px;color:#e4e2ff;-webkit-text-stroke:0.25px #e4e2ff">1.8</div>
<div class="t" style="left:299.5px;width:140px;text-align:center;top:699.5px;font-size:14.6px;color:#e4e2ff;-webkit-text-stroke:0.25px #e4e2ff">80.22</div>
<div class="t" style="left:427.0px;width:140px;text-align:center;top:699.5px;font-size:14.6px;color:#e4e2ff;-webkit-text-stroke:0.25px #e4e2ff">1.04</div>
<div class="t" style="left:554.5px;width:140px;text-align:center;top:699.5px;font-size:14.6px;color:#e4e2ff;-webkit-text-stroke:0.25px #e4e2ff">Binary</div>
<div class="t" style="left:681.5px;width:140px;text-align:center;top:699.5px;font-size:14.6px;color:#e4e2ff;-webkit-text-stroke:0.25px #e4e2ff">PSR J2032+4127</div>
<div class="abs" style="left:179px;top:719.38px;width:764px;height:26.88px;background:#000"></div>
<div class="abs" style="left:0;top:745.25px;width:179px;height:1px;background:#e2e2e2"></div>
<div class="abs" style="left:943px;top:745.25px;width:20px;height:1px;background:#e2e2e2"></div>
<div class="t" style="left:0;width:46px;text-align:center;top:725.4px;font-size:14px;color:#444;">14</div>
<div class="t" style="left:52px;width:123px;text-align:right;top:724.9px;font-size:15px;color:#c8cc3e">14</div>
<div class="t" style="left:172.5px;width:140px;text-align:center;top:725.9px;font-size:14.6px;color:#ededea;-webkit-text-stroke:0.25px #ededea">1.8</div>
<div class="t" style="left:299.5px;width:140px;text-align:center;top:725.9px;font-size:14.6px;color:#ededea;-webkit-text-stroke:0.25px #ededea">80.25</div>
<div class="t" style="left:427.0px;width:140px;text-align:center;top:725.9px;font-size:14.6px;color:#ededea;-webkit-text-stroke:0.25px #ededea">1.2</div>
<div class="t" style="left:554.5px;width:140px;text-align:center;top:725.9px;font-size:14.6px;color:#ededea;-webkit-text-stroke:0.25px #ededea">PWN</div>
<div class="t" style="left:681.5px;width:140px;text-align:center;top:725.9px;font-size:14.6px;color:#ededea;-webkit-text-stroke:0.25px #ededea">TeV J2032+4130</div>
<div class="abs" style="left:179px;top:745.75px;width:764px;height:26.88px;background:#020244"></div>
<div class="abs" style="left:0;top:771.62px;width:179px;height:1px;background:#e2e2e2"></div>
<div class="abs" style="left:943px;top:771.62px;width:20px;height:1px;background:#e2e2e2"></div>
<div class="t" style="left:0;width:46px;text-align:center;top:751.8px;font-size:14px;color:#444;">15</div>
<div class="t" style="left:52px;width:123px;text-align:right;top:751.2px;font-size:15px;color:#c8cc3e">15</div>
<div class="t" style="left:172.5px;width:140px;text-align:center;top:752.2px;font-size:14.6px;color:#e4e2ff;-webkit-text-stroke:0.25px #e4e2ff">11.3</div>
<div class="t" style="left:299.5px;width:140px;text-align:center;top:752.2px;font-size:14.6px;color:#e4e2ff;-webkit-text-stroke:0.25px #e4e2ff">43.32</div>
<div class="t" style="left:427.0px;width:140px;text-align:center;top:752.2px;font-size:14.6px;color:#e4e2ff;-webkit-text-stroke:0.25px #e4e2ff">-0.16</div>
<div class="t" style="left:554.5px;width:140px;text-align:center;top:752.2px;font-size:14.6px;color:#e4e2ff;-webkit-text-stroke:0.25px #e4e2ff">SNR/Molec. Cloud</div>
<div class="t" style="left:681.5px;width:140px;text-align:center;top:752.2px;font-size:14.6px;color:#e4e2ff;-webkit-text-stroke:0.25px #e4e2ff">W 49B</div>
<div class="abs" style="left:179px;top:772.12px;width:764px;height:26.88px;background:#000"></div>
<div class="abs" style="left:0;top:798.00px;width:179px;height:1px;background:#e2e2e2"></div>
<div class="abs" style="left:943px;top:798.00px;width:20px;height:1px;background:#e2e2e2"></div>
<div class="t" style="left:0;width:46px;text-align:center;top:778.1px;font-size:14px;color:#444;">16</div>
<div class="t" style="left:52px;width:123px;text-align:right;top:777.6px;font-size:15px;color:#c8cc3e">16</div>
<div class="t" style="left:172.5px;width:140px;text-align:center;top:778.6px;font-size:14.6px;color:#ededea;-webkit-text-stroke:0.25px #ededea">11.5</div>
<div class="t" style="left:299.5px;width:140px;text-align:center;top:778.6px;font-size:14.6px;color:#ededea;-webkit-text-stroke:0.25px #ededea">349.72</div>
<div class="t" style="left:427.0px;width:140px;text-align:center;top:778.6px;font-size:14.6px;color:#ededea;-webkit-text-stroke:0.25px #ededea">0.17</div>
<div class="t" style="left:554.5px;width:140px;text-align:center;top:778.6px;font-size:14.6px;color:#ededea;-webkit-text-stroke:0.25px #ededea">SNR/Molec. Cloud</div>
<div class="t" style="left:681.5px;width:140px;text-align:center;top:778.6px;font-size:14.6px;color:#ededea;-webkit-text-stroke:0.25px #ededea">SNR G349.7+00.2</div>
<div class="abs" style="left:179px;top:798.50px;width:764px;height:26.88px;background:#020244"></div>
<div class="abs" style="left:0;top:824.38px;width:179px;height:1px;background:#e2e2e2"></div>
<div class="abs" style="left:943px;top:824.38px;width:20px;height:1px;background:#e2e2e2"></div>
<div class="t" style="left:0;width:46px;text-align:center;top:804.5px;font-size:14px;color:#444;">17</div>
<div class="t" style="left:52px;width:123px;text-align:right;top:804.0px;font-size:15px;color:#c8cc3e">17</div>
<div class="t" style="left:172.5px;width:140px;text-align:center;top:805.0px;font-size:14.6px;color:#e4e2ff;-webkit-text-stroke:0.25px #e4e2ff">13.2</div>
<div class="t" style="left:299.5px;width:140px;text-align:center;top:805.0px;font-size:14.6px;color:#e4e2ff;-webkit-text-stroke:0.25px #e4e2ff">348.65</div>
<div class="t" style="left:427.0px;width:140px;text-align:center;top:805.0px;font-size:14.6px;color:#e4e2ff;-webkit-text-stroke:0.25px #e4e2ff">0.38</div>
<div class="t" style="left:554.5px;width:140px;text-align:center;top:805.0px;font-size:14.6px;color:#e4e2ff;-webkit-text-stroke:0.25px #e4e2ff">Shell</div>
<div class="t" style="left:681.5px;width:140px;text-align:center;top:805.0px;font-size:14.6px;color:#e4e2ff;-webkit-text-stroke:0.25px #e4e2ff">CTB 37B</div>
<div class="abs" style="left:179px;top:824.88px;width:764px;height:26.88px;background:#000"></div>
<div class="abs" style="left:0;top:850.75px;width:179px;height:1px;background:#e2e2e2"></div>
<div class="abs" style="left:943px;top:850.75px;width:20px;height:1px;background:#e2e2e2"></div>
<div class="t" style="left:0;width:46px;text-align:center;top:830.9px;font-size:14px;color:#444;">18</div>
<div class="t" style="left:52px;width:123px;text-align:right;top:830.4px;font-size:15px;color:#c8cc3e">18</div>
<div class="t" style="left:172.5px;width:140px;text-align:center;top:831.4px;font-size:14.6px;color:#ededea;-webkit-text-stroke:0.25px #ededea">2</div>
<div class="t" style="left:299.5px;width:140px;text-align:center;top:831.4px;font-size:14.6px;color:#ededea;-webkit-text-stroke:0.25px #ededea">184.56</div>
<div class="t" style="left:427.0px;width:140px;text-align:center;top:831.4px;font-size:14.6px;color:#ededea;-webkit-text-stroke:0.25px #ededea">-5.78</div>
<div class="t" style="left:554.5px;width:140px;text-align:center;top:831.4px;font-size:14.6px;color:#ededea;-webkit-text-stroke:0.25px #ededea">PSR</div>
<div class="t" style="left:681.5px;width:140px;text-align:center;top:831.4px;font-size:14.6px;color:#ededea;-webkit-text-stroke:0.25px #ededea">Crab Pulsar</div>
<div class="abs" style="left:179px;top:851.25px;width:764px;height:26.88px;background:#020244"></div>
<div class="abs" style="left:0;top:877.12px;width:179px;height:1px;background:#e2e2e2"></div>
<div class="abs" style="left:943px;top:877.12px;width:20px;height:1px;background:#e2e2e2"></div>
<div class="t" style="left:0;width:46px;text-align:center;top:857.2px;font-size:14px;color:#444;">19</div>
<div class="t" style="left:52px;width:123px;text-align:right;top:856.8px;font-size:15px;color:#c8cc3e">19</div>
<div class="t" style="left:172.5px;width:140px;text-align:center;top:857.8px;font-size:14.6px;color:#e4e2ff;-webkit-text-stroke:0.25px #e4e2ff">2</div>
<div class="t" style="left:299.5px;width:140px;text-align:center;top:857.8px;font-size:14.6px;color:#e4e2ff;-webkit-text-stroke:0.25px #e4e2ff">6.66</div>
<div class="t" style="left:427.0px;width:140px;text-align:center;top:857.8px;font-size:14.6px;color:#e4e2ff;-webkit-text-stroke:0.25px #e4e2ff">-0.27</div>
<div class="t" style="left:554.5px;width:140px;text-align:center;top:857.8px;font-size:14.6px;color:#e4e2ff;-webkit-text-stroke:0.25px #e4e2ff">SNR/Molec. Cloud</div>
<div class="t" style="left:681.5px;width:140px;text-align:center;top:857.8px;font-size:14.6px;color:#e4e2ff;-webkit-text-stroke:0.25px #e4e2ff">W 28</div>
<div class="abs" style="left:179px;top:877.62px;width:764px;height:26.88px;background:#000"></div>
<div class="abs" style="left:0;top:903.50px;width:179px;height:1px;background:#e2e2e2"></div>
<div class="abs" style="left:943px;top:903.50px;width:20px;height:1px;background:#e2e2e2"></div>
<div class="t" style="left:0;width:46px;text-align:center;top:883.6px;font-size:14px;color:#444;">20</div>
<div class="t" style="left:52px;width:123px;text-align:right;top:883.1px;font-size:15px;color:#c8cc3e">20</div>
<div class="t" style="left:172.5px;width:140px;text-align:center;top:884.1px;font-size:14.6px;color:#ededea;-webkit-text-stroke:0.25px #ededea">2</div>
<div class="t" style="left:299.5px;width:140px;text-align:center;top:884.1px;font-size:14.6px;color:#ededea;-webkit-text-stroke:0.25px #ededea">6.14</div>
<div class="t" style="left:427.0px;width:140px;text-align:center;top:884.1px;font-size:14.6px;color:#ededea;-webkit-text-stroke:0.25px #ededea">-0.63</div>
<div class="t" style="left:554.5px;width:140px;text-align:center;top:884.1px;font-size:14.6px;color:#ededea;-webkit-text-stroke:0.25px #ededea">SNR/Molec. Cloud</div>
<div class="t" style="left:681.5px;width:140px;text-align:center;top:884.1px;font-size:14.6px;color:#ededea;-webkit-text-stroke:0.25px #ededea">HESS J1800-240A</div>
<div class="abs" style="left:179px;top:904.00px;width:764px;height:26.88px;background:#020244"></div>
<div class="abs" style="left:0;top:929.88px;width:179px;height:1px;background:#e2e2e2"></div>
<div class="abs" style="left:943px;top:929.88px;width:20px;height:1px;background:#e2e2e2"></div>
<div class="t" style="left:0;width:46px;text-align:center;top:910.0px;font-size:14px;color:#444;">21</div>
<div class="t" style="left:52px;width:123px;text-align:right;top:909.5px;font-size:15px;color:#c8cc3e">21</div>
<div class="t" style="left:172.5px;width:140px;text-align:center;top:910.5px;font-size:14.6px;color:#e4e2ff;-webkit-text-stroke:0.25px #e4e2ff">2</div>
<div class="t" style="left:299.5px;width:140px;text-align:center;top:910.5px;font-size:14.6px;color:#e4e2ff;-webkit-text-stroke:0.25px #e4e2ff">5.9</div>
<div class="t" style="left:427.0px;width:140px;text-align:center;top:910.5px;font-size:14.6px;color:#e4e2ff;-webkit-text-stroke:0.25px #e4e2ff">-0.37</div>
<div class="t" style="left:554.5px;width:140px;text-align:center;top:910.5px;font-size:14.6px;color:#e4e2ff;-webkit-text-stroke:0.25px #e4e2ff">SNR/Molec. Cloud</div>
<div class="t" style="left:681.5px;width:140px;text-align:center;top:910.5px;font-size:14.6px;color:#e4e2ff;-webkit-text-stroke:0.25px #e4e2ff">HESS J1800-240B</div>
<div class="abs" style="left:179px;top:930.38px;width:764px;height:26.88px;background:#000"></div>
<div class="abs" style="left:0;top:956.25px;width:179px;height:1px;background:#e2e2e2"></div>
<div class="abs" style="left:943px;top:956.25px;width:20px;height:1px;background:#e2e2e2"></div>
<div class="t" style="left:0;width:46px;text-align:center;top:936.4px;font-size:14px;color:#444;">22</div>
<div class="t" style="left:52px;width:123px;text-align:right;top:935.9px;font-size:15px;color:#c8cc3e">22</div>
<div class="t" style="left:172.5px;width:140px;text-align:center;top:936.9px;font-size:14.6px;color:#ededea;-webkit-text-stroke:0.25px #ededea">2</div>
<div class="t" style="left:299.5px;width:140px;text-align:center;top:936.9px;font-size:14.6px;color:#ededea;-webkit-text-stroke:0.25px #ededea">130.7</div>
<div class="t" style="left:427.0px;width:140px;text-align:center;top:936.9px;font-size:14.6px;color:#ededea;-webkit-text-stroke:0.25px #ededea">3.1</div>
<div class="t" style="left:554.5px;width:140px;text-align:center;top:936.9px;font-size:14.6px;color:#ededea;-webkit-text-stroke:0.25px #ededea">PWN</div>
<div class="t" style="left:681.5px;width:140px;text-align:center;top:936.9px;font-size:14.6px;color:#ededea;-webkit-text-stroke:0.25px #ededea">3C 58</div>
<div class="abs" style="left:179px;top:956.75px;width:764px;height:26.88px;background:#020244"></div>
<div class="abs" style="left:0;top:982.62px;width:179px;height:1px;background:#e2e2e2"></div>
<div class="abs" style="left:943px;top:982.62px;width:20px;height:1px;background:#e2e2e2"></div>
<div class="t" style="left:0;width:46px;text-align:center;top:962.8px;font-size:14px;color:#444;">23</div>
<div class="t" style="left:52px;width:123px;text-align:right;top:962.2px;font-size:15px;color:#c8cc3e">23</div>
<div class="t" style="left:172.5px;width:140px;text-align:center;top:963.2px;font-size:14.6px;color:#e4e2ff;-webkit-text-stroke:0.25px #e4e2ff">2</div>
<div class="t" style="left:299.5px;width:140px;text-align:center;top:963.2px;font-size:14.6px;color:#e4e2ff;-webkit-text-stroke:0.25px #e4e2ff">184.56</div>
<div class="t" style="left:427.0px;width:140px;text-align:center;top:963.2px;font-size:14.6px;color:#e4e2ff;-webkit-text-stroke:0.25px #e4e2ff">-5.79</div>
<div class="t" style="left:554.5px;width:140px;text-align:center;top:963.2px;font-size:14.6px;color:#e4e2ff;-webkit-text-stroke:0.25px #e4e2ff">PWN</div>
<div class="t" style="left:681.5px;width:140px;text-align:center;top:963.2px;font-size:14.6px;color:#e4e2ff;-webkit-text-stroke:0.25px #e4e2ff">Crab</div>
<div class="abs" style="left:179px;top:983.12px;width:764px;height:26.88px;background:#000"></div>
<div class="abs" style="left:0;top:1009.00px;width:179px;height:1px;background:#e2e2e2"></div>
<div class="abs" style="left:943px;top:1009.00px;width:20px;height:1px;background:#e2e2e2"></div>
<div class="t" style="left:0;width:46px;text-align:center;top:989.1px;font-size:14px;color:#444;">24</div>
<div class="t" style="left:52px;width:123px;text-align:right;top:988.6px;font-size:15px;color:#c8cc3e">24</div>
<div class="t" style="left:172.5px;width:140px;text-align:center;top:989.6px;font-size:14.6px;color:#ededea;-webkit-text-stroke:0.25px #ededea">2</div>
<div class="t" style="left:299.5px;width:140px;text-align:center;top:989.6px;font-size:14.6px;color:#ededea;-webkit-text-stroke:0.25px #ededea">135.67</div>
<div class="t" style="left:427.0px;width:140px;text-align:center;top:989.6px;font-size:14.6px;color:#ededea;-webkit-text-stroke:0.25px #ededea">1.11</div>
<div class="t" style="left:554.5px;width:140px;text-align:center;top:989.6px;font-size:14.6px;color:#ededea;-webkit-text-stroke:0.25px #ededea">Binary</div>
<div class="t" style="left:681.5px;width:140px;text-align:center;top:989.6px;font-size:14.6px;color:#ededea;-webkit-text-stroke:0.25px #ededea">LS I +61 303</div>
<div class="abs" style="left:179px;top:1009.50px;width:764px;height:26.88px;background:#020244"></div>
<div class="abs" style="left:0;top:1035.38px;width:179px;height:1px;background:#e2e2e2"></div>
<div class="abs" style="left:943px;top:1035.38px;width:20px;height:1px;background:#e2e2e2"></div>
<div class="t" style="left:0;width:46px;text-align:center;top:1015.5px;font-size:14px;color:#444;">25</div>
<div class="t" style="left:52px;width:123px;text-align:right;top:1015.0px;font-size:15px;color:#c8cc3e">25</div>
<div class="t" style="left:172.5px;width:140px;text-align:center;top:1016.0px;font-size:14.6px;color:#e4e2ff;-webkit-text-stroke:0.25px #e4e2ff">2.2</div>
<div class="t" style="left:299.5px;width:140px;text-align:center;top:1016.0px;font-size:14.6px;color:#e4e2ff;-webkit-text-stroke:0.25px #e4e2ff">327.86</div>
<div class="t" style="left:427.0px;width:140px;text-align:center;top:1016.0px;font-size:14.6px;color:#e4e2ff;-webkit-text-stroke:0.25px #e4e2ff">15.35</div>
<div class="t" style="left:554.5px;width:140px;text-align:center;top:1016.0px;font-size:14.6px;color:#e4e2ff;-webkit-text-stroke:0.25px #e4e2ff">Shell</div>
<div class="t" style="left:681.5px;width:140px;text-align:center;top:1016.0px;font-size:14.6px;color:#e4e2ff;-webkit-text-stroke:0.25px #e4e2ff">SN 1006 SW</div>
<div class="abs" style="left:179px;top:1035.88px;width:764px;height:26.88px;background:#000"></div>
<div class="abs" style="left:0;top:1061.75px;width:179px;height:1px;background:#e2e2e2"></div>
<div class="abs" style="left:943px;top:1061.75px;width:20px;height:1px;background:#e2e2e2"></div>
<div class="t" style="left:0;width:46px;text-align:center;top:1041.9px;font-size:14px;color:#444;">26</div>
<div class="t" style="left:52px;width:123px;text-align:right;top:1041.4px;font-size:15px;color:#c8cc3e">26</div>
<div class="t" style="left:172.5px;width:140px;text-align:center;top:1042.4px;font-size:14.6px;color:#ededea;-webkit-text-stroke:0.25px #ededea">2.2</div>
<div class="t" style="left:299.5px;width:140px;text-align:center;top:1042.4px;font-size:14.6px;color:#ededea;-webkit-text-stroke:0.25px #ededea">327.84</div>
<div class="t" style="left:427.0px;width:140px;text-align:center;top:1042.4px;font-size:14.6px;color:#ededea;-webkit-text-stroke:0.25px #ededea">14.56</div>
<div class="t" style="left:554.5px;width:140px;text-align:center;top:1042.4px;font-size:14.6px;color:#ededea;-webkit-text-stroke:0.25px #ededea">Shell</div>
<div class="t" style="left:681.5px;width:140px;text-align:center;top:1042.4px;font-size:14.6px;color:#ededea;-webkit-text-stroke:0.25px #ededea">SN 1006 NE</div>
<div class="abs" style="left:179px;top:1062.25px;width:764px;height:26.88px;background:#020244"></div>
<div class="abs" style="left:0;top:1088.12px;width:179px;height:1px;background:#e2e2e2"></div>
<div class="abs" style="left:943px;top:1088.12px;width:20px;height:1px;background:#e2e2e2"></div>
<div class="t" style="left:0;width:46px;text-align:center;top:1068.2px;font-size:14px;color:#444;">27</div>
<div class="t" style="left:52px;width:123px;text-align:right;top:1067.8px;font-size:15px;color:#c8cc3e">27</div>
<div class="t" style="left:172.5px;width:140px;text-align:center;top:1068.8px;font-size:14.6px;color:#e4e2ff;-webkit-text-stroke:0.25px #e4e2ff">2.3</div>
<div class="t" style="left:299.5px;width:140px;text-align:center;top:1068.8px;font-size:14.6px;color:#e4e2ff;-webkit-text-stroke:0.25px #e4e2ff">343.06</div>
<div class="t" style="left:427.0px;width:140px;text-align:center;top:1068.8px;font-size:14.6px;color:#e4e2ff;-webkit-text-stroke:0.25px #e4e2ff">-2.38</div>
<div class="t" style="left:554.5px;width:140px;text-align:center;top:1068.8px;font-size:14.6px;color:#e4e2ff;-webkit-text-stroke:0.25px #e4e2ff">PWN</div>
<div class="t" style="left:681.5px;width:140px;text-align:center;top:1068.8px;font-size:14.6px;color:#e4e2ff;-webkit-text-stroke:0.25px #e4e2ff">HESS J1708-443</div>
<div class="abs" style="left:179px;top:1088.62px;width:764px;height:26.88px;background:#000"></div>
<div class="abs" style="left:0;top:1114.50px;width:179px;height:1px;background:#e2e2e2"></div>
<div class="abs" style="left:943px;top:1114.50px;width:20px;height:1px;background:#e2e2e2"></div>
<div class="t" style="left:0;width:46px;text-align:center;top:1094.6px;font-size:14px;color:#444;">28</div>
<div class="t" style="left:52px;width:123px;text-align:right;top:1094.1px;font-size:15px;color:#c8cc3e">28</div>
<div class="t" style="left:172.5px;width:140px;text-align:center;top:1095.1px;font-size:14.6px;color:#ededea;-webkit-text-stroke:0.25px #ededea">2.3</div>
<div class="t" style="left:299.5px;width:140px;text-align:center;top:1095.1px;font-size:14.6px;color:#ededea;-webkit-text-stroke:0.25px #ededea">284.8</div>
<div class="t" style="left:427.0px;width:140px;text-align:center;top:1095.1px;font-size:14.6px;color:#ededea;-webkit-text-stroke:0.25px #ededea">-0.52</div>
<div class="t" style="left:554.5px;width:140px;text-align:center;top:1095.1px;font-size:14.6px;color:#ededea;-webkit-text-stroke:0.25px #ededea">PWN</div>
<div class="t" style="left:681.5px;width:140px;text-align:center;top:1095.1px;font-size:14.6px;color:#ededea;-webkit-text-stroke:0.25px #ededea">HESS J1026-582</div>
<div class="abs" style="left:179px;top:1115.00px;width:764px;height:26.88px;background:#020244"></div>
<div class="abs" style="left:0;top:1140.88px;width:179px;height:1px;background:#e2e2e2"></div>
<div class="abs" style="left:943px;top:1140.88px;width:20px;height:1px;background:#e2e2e2"></div>
<div class="t" style="left:0;width:46px;text-align:center;top:1121.0px;font-size:14px;color:#444;">29</div>
<div class="t" style="left:52px;width:123px;text-align:right;top:1120.5px;font-size:15px;color:#c8cc3e">29</div>
<div class="t" style="left:172.5px;width:140px;text-align:center;top:1121.5px;font-size:14.6px;color:#e4e2ff;-webkit-text-stroke:0.25px #e4e2ff">2.3</div>
<div class="t" style="left:299.5px;width:140px;text-align:center;top:1121.5px;font-size:14.6px;color:#e4e2ff;-webkit-text-stroke:0.25px #e4e2ff">287.53</div>
<div class="t" style="left:427.0px;width:140px;text-align:center;top:1121.5px;font-size:14.6px;color:#e4e2ff;-webkit-text-stroke:0.25px #e4e2ff">-0.64</div>
<div class="t" style="left:554.5px;width:140px;text-align:center;top:1121.5px;font-size:14.6px;color:#e4e2ff;-webkit-text-stroke:0.25px #e4e2ff">Binary</div>
<div class="t" style="left:681.5px;width:140px;text-align:center;top:1121.5px;font-size:14.6px;color:#e4e2ff;-webkit-text-stroke:0.25px #e4e2ff">Eta Carinae</div>
<div class="abs" style="left:179px;top:1141.38px;width:764px;height:26.88px;background:#000"></div>
<div class="abs" style="left:0;top:1167.25px;width:179px;height:1px;background:#e2e2e2"></div>
<div class="abs" style="left:943px;top:1167.25px;width:20px;height:1px;background:#e2e2e2"></div>
<div class="t" style="left:0;width:46px;text-align:center;top:1147.4px;font-size:14px;color:#444;">30</div>
<div class="t" style="left:52px;width:123px;text-align:right;top:1146.9px;font-size:15px;color:#c8cc3e">30</div>
<div class="t" style="left:172.5px;width:140px;text-align:center;top:1147.9px;font-size:14.6px;color:#ededea;-webkit-text-stroke:0.25px #ededea">2.3</div>
<div class="t" style="left:299.5px;width:140px;text-align:center;top:1147.9px;font-size:14.6px;color:#ededea;-webkit-text-stroke:0.25px #ededea">343.1</div>
<div class="t" style="left:427.0px;width:140px;text-align:center;top:1147.9px;font-size:14.6px;color:#ededea;-webkit-text-stroke:0.25px #ededea">-2.69</div>
<div class="t" style="left:554.5px;width:140px;text-align:center;top:1147.9px;font-size:14.6px;color:#ededea;-webkit-text-stroke:0.25px #ededea">PSR</div>
<div class="t" style="left:681.5px;width:140px;text-align:center;top:1147.9px;font-size:14.6px;color:#ededea;-webkit-text-stroke:0.25px #ededea">PSR B1706-44</div>
<div class="abs" style="left:179px;top:1167.75px;width:764px;height:26.88px;background:#020244"></div>
<div class="abs" style="left:0;top:1193.62px;width:179px;height:1px;background:#e2e2e2"></div>
<div class="abs" style="left:943px;top:1193.62px;width:20px;height:1px;background:#e2e2e2"></div>
<div class="t" style="left:0;width:46px;text-align:center;top:1173.8px;font-size:14px;color:#444;">31</div>
<div class="t" style="left:52px;width:123px;text-align:right;top:1173.2px;font-size:15px;color:#c8cc3e">31</div>
<div class="t" style="left:172.5px;width:140px;text-align:center;top:1174.2px;font-size:14.6px;color:#e4e2ff;-webkit-text-stroke:0.25px #e4e2ff">2.4</div>
<div class="t" style="left:299.5px;width:140px;text-align:center;top:1174.2px;font-size:14.6px;color:#e4e2ff;-webkit-text-stroke:0.25px #e4e2ff">309.81</div>
<div class="t" style="left:427.0px;width:140px;text-align:center;top:1174.2px;font-size:14.6px;color:#e4e2ff;-webkit-text-stroke:0.25px #e4e2ff">-2.49</div>
<div class="t" style="left:554.5px;width:140px;text-align:center;top:1174.2px;font-size:14.6px;color:#e4e2ff;-webkit-text-stroke:0.25px #e4e2ff">PWN</div>
<div class="t" style="left:681.5px;width:140px;text-align:center;top:1174.2px;font-size:14.6px;color:#e4e2ff;-webkit-text-stroke:0.25px #e4e2ff">HESS J1356-645</div>
<div class="abs" style="left:179px;top:1194.12px;width:764px;height:26.88px;background:#000"></div>
<div class="abs" style="left:0;top:1220.00px;width:179px;height:1px;background:#e2e2e2"></div>
<div class="abs" style="left:943px;top:1220.00px;width:20px;height:1px;background:#e2e2e2"></div>
<div class="t" style="left:0;width:46px;text-align:center;top:1200.1px;font-size:14px;color:#444;">32</div>
<div class="t" style="left:52px;width:123px;text-align:right;top:1199.6px;font-size:15px;color:#c8cc3e">32</div>
<div class="t" style="left:172.5px;width:140px;text-align:center;top:1200.6px;font-size:14.6px;color:#ededea;-webkit-text-stroke:0.25px #ededea">2.5</div>
<div class="t" style="left:299.5px;width:140px;text-align:center;top:1200.6px;font-size:14.6px;color:#ededea;-webkit-text-stroke:0.25px #ededea">315.44</div>
<div class="t" style="left:427.0px;width:140px;text-align:center;top:1200.6px;font-size:14.6px;color:#ededea;-webkit-text-stroke:0.25px #ededea">-2.32</div>
<div class="t" style="left:554.5px;width:140px;text-align:center;top:1200.6px;font-size:14.6px;color:#ededea;-webkit-text-stroke:0.25px #ededea">Shell</div>
<div class="t" style="left:681.5px;width:140px;text-align:center;top:1200.6px;font-size:14.6px;color:#ededea;-webkit-text-stroke:0.25px #ededea">RCW 86</div>
<div class="abs" style="left:46px;top:376px;width:6px;height:844px;background:transparent;border-right:1px solid #c4c7c5"></div>
<div class="abs" style="left:52px;top:376px;width:1px;height:844px;background:#d7d7d7"></div>
<div class="abs" style="left:52px;top:376px;width:128px;height:27px;border:2px solid #1a73e8"></div>
<div class="abs" style="left:173px;top:396px;width:12px;height:12px;border-radius:50%;background:#1a73e8;border:1.5px solid #fff"></div>
<div class="abs" style="left:963px;top:376px;width:15px;height:844px;background:#fff;border-left:1px solid #e6e6e6"></div>
<div class="abs" style="left:966px;top:379px;width:10px;height:32px;background:#dadce0;border-radius:5px"></div>
<div class="abs" style="left:963px;top:1180px;width:15px;height:40px;border-top:1px solid #e0e0e0"></div>
<svg style="left:965px;top:1184px" width="10" height="32" viewBox="0 0 10 32" fill="#777"><path d="M2 8l3-3 3 3z"/><path d="M2 24l3 3 3-3z"/></svg>
<div class="abs" style="left:0;top:1220px;width:978px;height:17px;background:#fff;border-top:1px solid #e0e0e0"></div>
<div class="abs" style="left:55px;top:1223px;width:237px;height:11px;background:#dadce0;border-radius:6px"></div>
<div class="abs" style="left:922px;top:1221px;width:1px;height:15px;background:#e0e0e0"></div>
<svg style="left:925px;top:1222px" width="34" height="12" viewBox="0 0 34 12" fill="#777"><path d="M8 3l-3 3 3 3z"/><path d="M26 3l3 3-3 3z"/></svg>
<div class="abs" style="left:0;top:1237px;width:978px;height:47px;background:#f9fbfd"></div>
<svg style="left:62px;top:1251px" width="18" height="18" viewBox="0 0 18 18" stroke="#444746" stroke-width="2"><path d="M9 2v14M2 9h14"/></svg>
<svg style="left:111px;top:1252px" width="20" height="16" viewBox="0 0 20 16" stroke="#444746" stroke-width="2"><path d="M1 3h18M1 8h18M1 13h18"/></svg>
<div class="abs" style="left:152px;top:1247px;width:1px;height:28px;background:#c7c7c7"></div>
<div class="abs" style="left:756px;top:1247px;width:1px;height:28px;background:#c7c7c7"></div>
<div class="abs" style="left:412px;top:1237px;width:115px;height:47px;background:#e1e9f7"></div>
<div class="t" style="left:170px;top:1251px;font-size:19px;color:#444746;">2 degrees</div>
<svg style="left:269px;top:1258px" width="12" height="7" viewBox="0 0 12 7"><path d="M1 1l5 5 5-5z" fill="#444746"/></svg>
<div class="t" style="left:312px;top:1251px;font-size:19px;color:#444746;">Sheet2</div>
<svg style="left:386px;top:1258px" width="12" height="7" viewBox="0 0 12 7"><path d="M1 1l5 5 5-5z" fill="#444746"/></svg>
<div class="t" style="left:428px;top:1251px;font-size:19px;color:#0b57d0;-webkit-text-stroke:0.4px #0b57d0;">Sheet3</div>
<svg style="left:502px;top:1258px" width="12" height="7" viewBox="0 0 12 7"><path d="M1 1l5 5 5-5z" fill="#0b57d0"/></svg>
<div class="t" style="left:544px;top:1251px;font-size:19px;color:#444746;">Sheet4</div>
<svg style="left:618px;top:1258px" width="12" height="7" viewBox="0 0 12 7"><path d="M1 1l5 5 5-5z" fill="#444746"/></svg>
<div class="t" style="left:661px;top:1251px;font-size:19px;color:#444746;">Sheet6</div>
<svg style="left:735px;top:1258px" width="12" height="7" viewBox="0 0 12 7"><path d="M1 1l5 5 5-5z" fill="#444746"/></svg>
<svg style="left:777px;top:1251px" width="66" height="18" viewBox="0 0 66 18" fill="none" stroke="#444746" stroke-width="2"><path d="M12 3l-6 6 6 6M52 3l6 6-6 6"/></svg>
<div class="abs" style="left:978px;top:166px;width:71px;height:1118px;background:linear-gradient(90deg,#fdfdfd 0%,#f8f8f8 80%,#e2e2e2 96%,#d0d0d0 100%)"></div>
<svg style="left:1001px;top:265px" width="24" height="24" viewBox="0 0 24 24"><rect x="0" y="0" width="24" height="24" rx="2" fill="#fff"/><path d="M0 2a2 2 0 0 1 2-2h20a2 2 0 0 1 2 2v4H0z" fill="#4285f4"/><path d="M0 6h4v14H0z" fill="#4285f4"/><path d="M20 6h4v12h-4z" fill="#fbbc04"/><path d="M0 20h18v4H2a2 2 0 0 1-2-2z" fill="#34a853"/><path d="M18 18h6l-6 6z" fill="#ea4335"/><text x="6" y="17" font-size="10" style="font-family:Liberation Sans,sans-serif" fill="#4285f4" font-weight="bold">31</text></svg>
<div class="abs" style="left:1001px;top:336px;width:25px;height:24px;background:#fbbc04;border-radius:3px"></div>
<div class="abs" style="left:1008px;top:340px;width:11px;height:11px;border-radius:50%;background:#fef3d0"></div>
<div class="abs" style="left:1010.5px;top:352.5px;width:6px;height:3px;background:#fef3d0"></div>
<svg style="left:1001px;top:405px" width="26" height="26" viewBox="0 0 26 26" fill="none" stroke="#1a73e8" stroke-width="3.6"><path d="M21 10a9 9 0 1 1-4-6"/><path d="M8 12.5l4 4 9-10"/></svg>
<svg style="left:1003px;top:476px" width="22" height="24" viewBox="0 0 22 24" fill="#1a73e8"><circle cx="11" cy="6" r="5"/><path d="M1 22c0-6 4-9 10-9s10 3 10 9z"/></svg>
<svg style="left:1004px;top:547px" width="18" height="25" viewBox="0 0 22 30"><path d="M11 0a11 11 0 0 1 11 11c0 7-11 19-11 19S0 18 0 11A11 11 0 0 1 11 0z" fill="#34a853"/><path d="M11 0a11 11 0 0 1 8 3.5L11 11z" fill="#4285f4"/><path d="M3 3.5A11 11 0 0 1 11 0v11z" fill="#ea4335"/><path d="M0 11a11 11 0 0 1 3-7.5L11 11z" fill="#fbbc04"/><circle cx="11" cy="11" r="4" fill="#fff"/></svg>
<div class="abs" style="left:1000px;top:615px;width:27px;height:1px;background:#d8d8d8"></div>
<svg style="left:1003px;top:661px" width="20" height="20" viewBox="0 0 20 20" stroke="#1f1f1f" stroke-width="2"><path d="M10 1v18M1 10h18"/></svg>
<svg style="left:1008px;top:1240px" width="10" height="16" viewBox="0 0 10 16" fill="none" stroke="#444746" stroke-width="2"><path d="M2 2l6 6-6 6"/></svg>
<svg style="left:987px;top:190px" width="34" height="30" viewBox="0 0 34 30"><rect x="4" y="2" width="24" height="16" fill="#fff" stroke="#111" stroke-width="2.4"/><text x="8" y="13" font-size="7" style="font-family:Liberation Sans,sans-serif" fill="#111" font-weight="bold">1+1=</text><path d="M0 20h28v4H0z" fill="#111"/><path d="M22 14h6l-1 4 6 10H18l5-10z" fill="#111"/></svg>
<div class="abs" style="left:1049px;top:760px;width:24px;height:25px;background:#6e6e6e"></div>
<div class="abs" style="left:2028px;top:760px;width:20px;height:25px;background:#7a3a8a"></div>
<div class="abs" style="left:1049px;top:783px;width:10px;height:501px;background:linear-gradient(180deg,#7a7a7a 0%,#8a8a8a 10%,#7a4a72 14%,#7a4a72 24%,#8a8a8a 28%,#8a8a8a 45%,#5a3a9a 55%,#3a1a8a 100%)"></div>
<div class="abs" style="left:1049px;top:36px;width:4px;height:747px;background:#626262"></div>
<div class="abs" style="left:1052px;top:28px;width:996px;height:755px;background:#111;border-radius:11px 11px 8px 8px;overflow:hidden">
<div class="abs" style="left:0;top:0;width:997px;height:138px;background:#c9e2c8"></div>
<div class="abs" style="left:0;top:0;width:997px;height:45px;background:#86b97e"></div>
</div>
<div class="abs" style="left:1077px;top:45px;width:14px;height:14px;border-radius:50%;background:#9cc894"></div>
<div class="abs" style="left:1100px;top:45px;width:14px;height:14px;border-radius:50%;background:#9cc894"></div>
<div class="abs" style="left:1123px;top:45px;width:14px;height:14px;border-radius:50%;background:#9cc894"></div>
<div class="abs" style="left:1167px;top:42px;width:20px;height:20px;background:#0d0d0d;border-radius:5px"></div>
<svg style="left:1170px;top:45px" width="14" height="14" viewBox="0 0 14 14" fill="none" stroke="#fff" stroke-width="1.2"><circle cx="7" cy="7" r="5"/><path d="M7 2v10M2.7 4.5l8.6 5M2.7 9.5l8.6-5"/></svg>
<div class="t" style="left:1195px;top:43px;font-size:15px;color:#2f4a2f;width:194px;overflow:hidden;-webkit-mask-image:linear-gradient(90deg,#000 85%,transparent)">Particle Data Array Conversion</div>
<svg style="left:1398px;top:45px" width="14" height="14" viewBox="0 0 14 14" stroke="#1f2b1f" stroke-width="2"><path d="M2 2l10 10M12 2L2 12"/></svg>
<div class="abs" style="left:1431px;top:36px;width:267px;height:40px;background:#c9e2c8;border-radius:10px 10px 0 0"></div>
<div class="abs" style="left:1421px;top:63px;width:10px;height:10px;background:radial-gradient(circle at 0 0,#86b97e 10px,#c9e2c8 10.5px)"></div>
<div class="abs" style="left:1698px;top:63px;width:10px;height:10px;background:radial-gradient(circle at 100% 0,#86b97e 10px,#c9e2c8 10.5px)"></div>
<svg style="left:1440px;top:43px" width="18" height="18" viewBox="0 0 18 18"><circle cx="9" cy="9" r="8" fill="#a9b4a8"/><path d="M5 4q3 2 2 5t-3 5M11 2q-1 3 2 4t3 4" stroke="#d8e0d6" stroke-width="1.6" fill="none"/></svg>
<div class="t" style="left:1468px;top:43px;font-size:15px;color:#1f2b1f;width:196px;overflow:hidden;-webkit-mask-image:linear-gradient(90deg,#000 85%,transparent)">Welcome to TeVCat, an Online Catalog</div>
<svg style="left:1671px;top:45px" width="14" height="14" viewBox="0 0 14 14" stroke="#1f2b1f" stroke-width="2"><path d="M2 2l10 10M12 2L2 12"/></svg>
<svg style="left:1712px;top:44px" width="16" height="16" viewBox="0 0 16 16" stroke="#6f8a6c" stroke-width="2"><path d="M8 1v14M1 8h14"/></svg>
<div class="abs" style="left:2009px;top:37px;width:31px;height:30px;background:#c2dcbf;border-radius:8px"></div>
<svg style="left:2018px;top:47px" width="12" height="10" viewBox="0 0 12 10" fill="none" stroke="#1f2b1f" stroke-width="2"><path d="M2 2l4 4 4-4"/></svg>
<svg style="left:1058px;top:73px" width="170" height="50" viewBox="0 0 170 50" fill="none" stroke="#6e7f6d" stroke-width="2">
<path d="M12 27h15M18.5 20.5L12 27l6.5 6.5"/>
<path d="M53 27h15M61.5 20.5L68 27l-6.5 6.5"/>
<path d="M108 23.5a7.5 7.5 0 1 0 1.5 4.5"/><path d="M104 18.5l5 4-4 4.5"/>
<path d="M136 35v-9.5l6.5-6 6.5 6V35h-4v-6h-5v6z" stroke-linejoin="round"/>
</svg>
<div class="abs" style="left:1232px;top:81px;width:458px;height:40px;background:#eef5ec;border-radius:20px"></div>
<div class="abs" style="left:1238px;top:86px;width:110px;height:30px;background:#c5dbc1;border-radius:15px"></div>
<svg style="left:1241px;top:91px" width="20" height="18" viewBox="0 0 20 18" fill="none" stroke="#1f2a1f" stroke-width="1.8" stroke-linejoin="round"><path d="M10 2L18.5 16.5h-17z"/><path d="M10 7v4.5M10 13.5v1"/></svg>
<div class="t" style="left:1264px;top:92px;font-size:15px;color:#1f2a1f;-webkit-text-stroke:0.35px #1f2a1f">Not Secure</div>
<div class="t" style="left:1357px;top:92px;font-size:17.5px;color:#1f2a1f">tevcat.uchicago.edu</div>
<svg style="left:1652px;top:89px" width="22" height="22" viewBox="0 0 24 24" fill="#4e5f4d"><path d="M12 2.5l2.9 6.2 6.6.7-4.9 4.5 1.4 6.6L12 17.1l-5.9 3.4 1.4-6.6-4.9-4.5 6.6-.7z"/></svg>
<div class="abs" style="left:1711px;top:81px;width:340px;height:40px;opacity:0.6">
<div class="t" style="left:2px;top:7px;font-size:13px;color:#4a72c8;font-weight:bold">邢</div>
<div class="abs" style="left:5px;top:19px;width:22px;height:15px;background:#e3261b;border-radius:3px"></div>
<div class="t" style="left:8px;top:21px;font-size:11px;color:#2a0a0a;font-weight:bold">On</div>
<div class="abs" style="left:41px;top:10px;width:20px;height:20px;border-radius:50%;background:#ea7379"></div>
<div class="t" style="left:47px;top:14px;font-size:12px;color:#fff">K</div>
<svg style="left:81px;top:8px" width="24" height="24" viewBox="0 0 24 24" fill="none" stroke="#1f2a1f" stroke-width="2" stroke-linejoin="round"><path d="M3 7h5.3a2.4 2.4 0 0 1 4.6 0H18v4.3a2.4 2.4 0 0 1 0 4.6V21H3v-5.1a2.4 2.4 0 0 0 0-4.6z"/></svg>
<div class="abs" style="left:123px;top:9px;width:2px;height:21px;background:#4e5f4d"></div>
<svg style="left:143px;top:9px" width="24" height="22" viewBox="0 0 24 22" fill="none" stroke="#1f2a1f" stroke-width="2"><path d="M2 5h13M2 10h11M2 15h7"/><path d="M18 4v11" /><circle cx="16" cy="15.5" r="2.6" fill="#1f2a1f" stroke="none"/><path d="M18 4h4"/></svg>
</div>
<div class="abs" style="left:1890px;top:81px;width:108px;height:40px;background:#c3d9bf;border-radius:20px"></div>
<svg style="left:1903px;top:89.5px;opacity:0.6" width="23" height="23" viewBox="0 0 23 23"><defs><clipPath id="avc2"><circle cx="11.5" cy="11.5" r="11"/></clipPath></defs><g clip-path="url(#avc2)"><rect width="23" height="23" fill="#a89890"/><ellipse cx="12" cy="15" rx="6" ry="8" fill="#c49a84"/><path d="M2 11q1-9 10-9t9 9q-4-3-9-3t-10 3z" fill="#4a4048"/><path d="M3 23q2-5 9-5t9 5z" fill="#2a2a20"/></g></svg>
<div class="t" style="left:1932px;top:92px;font-size:16px;color:#7b8a7a">Paused</div>
<svg style="left:2018px;top:91px" width="8" height="20" viewBox="0 0 8 20" fill="#6e7f6d"><circle cx="4" cy="3" r="2"/><circle cx="4" cy="10" r="2"/><circle cx="4" cy="17" r="2"/></svg>
<div class="abs" style="left:1053px;top:123px;width:995px;height:43px;opacity:0.55">
<div class="abs" style="left:15px;top:13px;width:18px;height:13px;background:#e2261f;border-radius:3px;opacity:1"></div><svg style="left:21px;top:16px" width="7" height="7" viewBox="0 0 7 7"><path d="M0 0l7 3.5L0 7z" fill="#fff"/></svg>
<div class="t" style="left:39px;top:13px;font-size:14.4px;color:#1f2a1f">Arthur Gunn: From...</div>
<svg style="left:189px;top:11px;opacity:1" width="19" height="19" viewBox="0 0 19 19"><circle cx="9.5" cy="9.5" r="9" fill="#f0622a"/><ellipse cx="9.5" cy="11.5" rx="6.2" ry="4.6" fill="#fff"/><circle cx="7.2" cy="11" r="1.1" fill="#f0622a"/><circle cx="11.8" cy="11" r="1.1" fill="#f0622a"/><circle cx="13" cy="4.5" r="1.6" fill="#fff"/><path d="M7.5 13.6q2 1.2 4 0" stroke="#f0622a" stroke-width="0.8" fill="none"/></svg>
<div class="t" style="left:215px;top:13px;font-size:14.4px;color:#1f2a1f">I am not letting HC...</div>
<div class="abs" style="left:367px;top:11px;width:18px;height:18px;background:#3a2020;opacity:1"></div><div class="t" style="left:369px;top:15px;font-size:10px;font-weight:bold;color:#e02020;opacity:1">VS</div>
<div class="t" style="left:392px;top:13px;font-size:14.4px;color:#1f2a1f">ASUS ROG Strix G...</div>
<svg style="left:543px;top:11px;opacity:1" width="19" height="19" viewBox="0 0 19 19"><circle cx="9.5" cy="9.5" r="9" fill="#f0622a"/><ellipse cx="9.5" cy="11.5" rx="6.2" ry="4.6" fill="#fff"/><circle cx="7.2" cy="11" r="1.1" fill="#f0622a"/><circle cx="11.8" cy="11" r="1.1" fill="#f0622a"/><circle cx="13" cy="4.5" r="1.6" fill="#fff"/><path d="M7.5 13.6q2 1.2 4 0" stroke="#f0622a" stroke-width="0.8" fill="none"/></svg>
<div class="t" style="left:568px;top:13px;font-size:14.4px;color:#1f2a1f">Domain redirectio...</div>
<div class="abs" style="left:839px;top:10px;width:2px;height:20px;background:#2e8a2a"></div>
<svg style="left:806px;top:14px;opacity:0.18" width="14" height="12" viewBox="0 0 14 12" fill="none" stroke="#1f2a1f" stroke-width="1.8"><path d="M2 1l5 5-5 5M7 1l5 5-5 5"/></svg>
<svg style="left:857px;top:13px;opacity:0.22" width="20" height="16" viewBox="0 0 20 16" fill="none" stroke="#1f2a1f" stroke-width="1.6"><path d="M1 2h6l2 2h10v11H1z" stroke-linejoin="round"/></svg>
<div class="t" style="left:886px;top:13px;font-size:14.4px;color:#1f2a1f">All Bookmarks</div>
</div>
<div class="abs" style="left:1053px;top:166px;width:979px;height:599px;background:#000"></div>
<div class="abs" style="left:2032px;top:166px;width:16px;height:600px;background:#fafafa;border-left:1px solid #e8e8e8"></div>
<div class="abs" style="left:2036px;top:170px;width:8px;height:52px;background:#c2c2c2;border-radius:4px"></div>
<div class="abs" style="left:1053px;top:765px;width:995px;height:18px;background:#fafafa;border-top:1px solid #e0e0e0;border-radius:0 0 8px 8px"></div>
<div class="abs" style="left:1057px;top:769px;width:720px;height:8px;background:#c2c2c2;border-radius:4px"></div>
<div class="t" style="left:1038.5px;width:979px;text-align:center;top:171px;font-size:18.3px;color:#d9d86a"><span style="color:#fff">[</span><u>What's New?</u><span style="color:#fff">] [</span><u>TeVCat FAQ</u><span style="color:#fff">] [</span><u>TeV Astrophysics</u><span style="color:#fff">] [</span><u>Bug Report or Feature Request</u><span style="color:#fff">] [</span><u>Login</u><span style="color:#fff">]</span></div>
<div class="t" style="left:1053px;width:979px;text-align:center;top:207px;font-size:36.6px;color:#4a74aa;font-weight:bold;font-style:italic;-webkit-text-stroke:0.5px #4a74aa">Welcome to TeVCat!</div>
<svg style="left:0;top:0" width="2048" height="1284" viewBox="0 0 2048 1284"><defs><linearGradient id="Lr" x1="0" y1="0" x2="0" y2="1"><stop offset="0" stop-color="#f6c6c8"/><stop offset="0.42" stop-color="#ee6e6c"/><stop offset="0.62" stop-color="#e25656"/><stop offset="1" stop-color="#f4909a"/></linearGradient><linearGradient id="Lg" x1="0" y1="0" x2="0" y2="1"><stop offset="0" stop-color="#e4e4e4"/><stop offset="0.42" stop-color="#a8a8a8"/><stop offset="0.62" stop-color="#8e8e8e"/><stop offset="1" stop-color="#c8d0d0"/></linearGradient><linearGradient id="Lm" x1="0" y1="0" x2="0" y2="1"><stop offset="0" stop-color="#f4c8f8"/><stop offset="0.42" stop-color="#d062d8"/><stop offset="0.62" stop-color="#b84cc2"/><stop offset="1" stop-color="#e490ea"/></linearGradient><linearGradient id="LG" x1="0" y1="0" x2="0" y2="1"><stop offset="0" stop-color="#c8f5c0"/><stop offset="0.42" stop-color="#3ad43a"/><stop offset="0.62" stop-color="#22b022"/><stop offset="1" stop-color="#7ef07a"/></linearGradient><linearGradient id="Ly" x1="0" y1="0" x2="0" y2="1"><stop offset="0" stop-color="#f0f0a0"/><stop offset="0.42" stop-color="#c8c41e"/><stop offset="0.62" stop-color="#a8a410"/><stop offset="1" stop-color="#e0dc60"/></linearGradient><linearGradient id="Lb" x1="0" y1="0" x2="0" y2="1"><stop offset="0" stop-color="#d8d8ff"/><stop offset="0.42" stop-color="#5a6ce0"/><stop offset="0.62" stop-color="#4a74d8"/><stop offset="1" stop-color="#6ec0d8"/></linearGradient><linearGradient id="Lo" x1="0" y1="0" x2="0" y2="1"><stop offset="0" stop-color="#f4d080"/><stop offset="0.42" stop-color="#e0a030"/><stop offset="0.62" stop-color="#c88418"/><stop offset="1" stop-color="#f0c050"/></linearGradient><radialGradient id="RS"><stop offset="0.6" stop-color="#000" stop-opacity="0"/><stop offset="1" stop-color="#000" stop-opacity="0.35"/></radialGradient></defs><path d="M1536.0 716.0 L1539.7 716.0 L1543.3 716.0 L1547.0 716.0 L1550.6 715.9 L1554.3 715.8 L1557.9 715.7 L1561.5 715.6 L1565.2 715.5 L1568.8 715.4 L1572.5 715.2 L1576.1 715.1 L1579.7 714.9 L1583.4 714.7 L1587.0 714.5 L1590.6 714.2 L1594.2 714.0 L1597.9 713.7 L1601.5 713.5 L1605.1 713.2 L1608.7 712.9 L1612.3 712.5 L1615.8 712.2 L1619.4 711.8 L1623.0 711.5 L1626.6 711.1 L1630.1 710.7 L1633.7 710.2 L1637.2 709.8 L1640.8 709.4 L1644.3 708.9 L1647.8 708.4 L1651.3 707.9 L1654.8 707.4 L1658.3 706.9 L1661.8 706.3 L1665.3 705.8 L1668.8 705.2 L1672.2 704.6 L1675.7 704.0 L1679.1 703.4 L1682.5 702.8 L1686.0 702.1 L1689.4 701.5 L1692.8 700.8 L1696.1 700.1 L1699.5 699.4 L1702.9 698.7 L1706.2 697.9 L1709.5 697.2 L1712.8 696.4 L1716.2 695.6 L1719.4 694.9 L1722.7 694.0 L1726.0 693.2 L1729.2 692.4 L1732.5 691.5 L1735.7 690.7 L1738.9 689.8 L1742.1 688.9 L1745.2 688.0 L1748.4 687.1 L1751.5 686.1 L1754.6 685.2 L1757.8 684.2 L1760.8 683.3 L1763.9 682.3 L1767.0 681.3 L1770.0 680.3 L1773.0 679.2 L1776.0 678.2 L1779.0 677.1 L1782.0 676.1 L1784.9 675.0 L1787.8 673.9 L1790.7 672.8 L1793.6 671.7 L1796.5 670.5 L1799.3 669.4 L1802.2 668.2 L1805.0 667.1 L1807.8 665.9 L1810.5 664.7 L1813.3 663.5 L1816.0 662.3 L1818.7 661.1 L1821.4 659.8 L1824.0 658.6 L1826.7 657.3 L1829.3 656.0 L1831.9 654.7 L1834.5 653.5 L1837.0 652.1 L1839.5 650.8 L1842.0 649.5 L1844.5 648.2 L1847.0 646.8 L1849.4 645.4 L1851.8 644.1 L1854.2 642.7 L1856.6 641.3 L1858.9 639.9 L1861.2 638.5 L1863.5 637.0 L1865.8 635.6 L1868.0 634.2 L1870.2 632.7 L1872.4 631.3 L1874.5 629.8 L1876.7 628.3 L1878.8 626.8 L1880.9 625.3 L1882.9 623.8 L1884.9 622.3 L1887.0 620.8 L1888.9 619.2 L1890.9 617.7 L1892.8 616.1 L1894.7 614.6 L1896.6 613.0 L1898.4 611.4 L1900.2 609.8 L1902.0 608.2 L1903.7 606.6 L1905.5 605.0 L1907.2 603.4 L1908.9 601.8 L1910.5 600.2 L1912.1 598.5 L1913.7 596.9 L1915.3 595.2 L1916.8 593.6 L1918.3 591.9 L1919.8 590.2 L1921.2 588.6 L1922.6 586.9 L1924.0 585.2 L1925.3 583.5 L1926.7 581.8 L1928.0 580.1 L1929.2 578.4 L1930.5 576.6 L1931.7 574.9 L1932.8 573.2 L1934.0 571.5 L1935.1 569.7 L1936.2 568.0 L1937.2 566.2 L1938.2 564.5 L1939.2 562.7 L1940.2 561.0 L1941.1 559.2 L1942.0 557.4 L1942.9 555.6 L1943.7 553.9 L1944.5 552.1 L1945.3 550.3 L1946.1 548.5 L1946.8 546.7 L1947.5 544.9 L1948.1 543.1 L1948.7 541.3 L1949.3 539.5 L1949.9 537.7 L1950.4 535.9 L1950.9 534.1 L1951.3 532.3 L1951.8 530.5 L1952.2 528.7 L1952.5 526.9 L1952.9 525.0 L1953.2 523.2 L1953.4 521.4 L1953.7 519.6 L1953.9 517.8 L1954.1 515.9 L1954.2 514.1 L1954.3 512.3 L1954.4 510.5 L1954.4 508.6 L1954.5 506.8 L1954.4 505.0 L1954.4 503.2 L1954.3 501.4 L1954.2 499.6 L1954.1 497.8 L1953.9 496.0 L1953.7 494.2 L1953.4 492.4 L1953.2 490.6 L1952.9 488.8 L1952.5 487.0 L1952.2 485.2 L1951.8 483.4 L1951.3 481.6 L1950.9 479.9 L1950.4 478.1 L1949.9 476.3 L1949.3 474.5 L1948.7 472.7 L1948.1 471.0 L1947.5 469.2 L1946.8 467.4 L1946.1 465.6 L1945.3 463.9 L1944.5 462.1 L1943.7 460.4 L1942.9 458.6 L1942.0 456.9 L1941.1 455.1 L1940.2 453.4 L1939.2 451.6 L1938.2 449.9 L1937.2 448.2 L1936.2 446.5 L1935.1 444.7 L1934.0 443.0 L1932.8 441.3 L1931.7 439.6 L1930.5 437.9 L1929.2 436.2 L1928.0 434.5 L1926.7 432.8 L1925.3 431.2 L1924.0 429.5 L1922.6 427.8 L1921.2 426.2 L1919.8 424.5 L1918.3 422.8 L1916.8 421.2 L1915.3 419.6 L1913.7 417.9 L1912.1 416.3 L1910.5 414.7 L1908.9 413.1 L1907.2 411.5 L1905.5 409.9 L1903.7 408.3 L1902.0 406.7 L1900.2 405.2 L1898.4 403.6 L1896.6 402.0 L1894.7 400.5 L1892.8 399.0 L1890.9 397.4 L1888.9 395.9 L1887.0 394.4 L1884.9 392.9 L1882.9 391.4 L1880.9 389.9 L1878.8 388.4 L1876.7 386.9 L1874.5 385.5 L1872.4 384.0 L1870.2 382.6 L1868.0 381.2 L1865.8 379.7 L1863.5 378.3 L1861.2 376.9 L1858.9 375.5 L1856.6 374.1 L1854.2 372.8 L1851.8 371.4 L1849.4 370.0 L1847.0 368.7 L1844.5 367.4 L1842.0 366.0 L1839.5 364.7 L1837.0 363.4 L1834.5 362.1 L1831.9 360.9 L1829.3 359.6 L1826.7 358.3 L1824.0 357.1 L1821.4 355.8 L1818.7 354.6 L1816.0 353.4 L1813.3 352.2 L1810.5 351.0 L1807.8 349.9 L1805.0 348.7 L1802.2 347.5 L1799.3 346.4 L1796.5 345.3 L1793.6 344.2 L1790.7 343.0 L1787.8 342.0 L1784.9 340.9 L1782.0 339.8 L1779.0 338.8 L1776.0 337.7 L1773.0 336.7 L1770.0 335.7 L1767.0 334.7 L1763.9 333.7 L1760.8 332.7 L1757.8 331.8 L1754.6 330.8 L1751.5 329.9 L1748.4 329.0 L1745.2 328.1 L1742.1 327.2 L1738.9 326.3 L1735.7 325.4 L1732.5 324.6 L1729.2 323.7 L1726.0 322.9 L1722.7 322.1 L1719.4 321.3 L1716.2 320.5 L1712.8 319.7 L1709.5 319.0 L1706.2 318.2 L1702.9 317.5 L1699.5 316.8 L1696.1 316.1 L1692.8 315.4 L1689.4 314.8 L1686.0 314.1 L1682.5 313.5 L1679.1 312.8 L1675.7 312.2 L1672.2 311.6 L1668.8 311.1 L1665.3 310.5 L1661.8 310.0 L1658.3 309.4 L1654.8 308.9 L1651.3 308.4 L1647.8 307.9 L1644.3 307.4 L1640.8 307.0 L1637.2 306.5 L1633.7 306.1 L1630.1 305.7 L1626.6 305.3 L1623.0 304.9 L1619.4 304.5 L1615.8 304.2 L1612.3 303.9 L1608.7 303.5 L1605.1 303.2 L1601.5 302.9 L1597.9 302.7 L1594.2 302.4 L1590.6 302.2 L1587.0 301.9 L1583.4 301.7 L1579.7 301.5 L1576.1 301.3 L1572.5 301.2 L1568.8 301.0 L1565.2 300.9 L1561.5 300.8 L1557.9 300.7 L1554.3 300.6 L1550.6 300.5 L1547.0 300.5 L1543.3 300.4 L1539.7 300.4 L1536.0 300.4 M1536.0 716.0 L1539.5 715.7 L1543.0 715.4 L1546.5 715.1 L1550.0 714.7 L1553.5 714.3 L1557.0 714.0 L1560.4 713.6 L1563.9 713.2 L1567.3 712.7 L1570.7 712.3 L1574.1 711.8 L1577.5 711.4 L1580.9 710.9 L1584.3 710.4 L1587.7 709.9 L1591.0 709.4 L1594.3 708.8 L1597.7 708.3 L1601.0 707.7 L1604.2 707.2 L1607.5 706.6 L1610.8 706.0 L1614.0 705.4 L1617.3 704.7 L1620.5 704.1 L1623.7 703.4 L1626.9 702.8 L1630.1 702.1 L1633.2 701.4 L1636.4 700.7 L1639.5 700.0 L1642.6 699.3 L1645.7 698.5 L1648.8 697.8 L1651.9 697.0 L1654.9 696.3 L1658.0 695.5 L1661.0 694.7 L1664.0 693.9 L1667.0 693.0 L1669.9 692.2 L1672.9 691.4 L1675.8 690.5 L1678.7 689.7 L1681.6 688.8 L1684.5 687.9 L1687.4 687.0 L1690.2 686.1 L1693.1 685.2 L1695.9 684.3 L1698.7 683.3 L1701.4 682.4 L1704.2 681.4 L1706.9 680.5 L1709.7 679.5 L1712.4 678.5 L1715.0 677.5 L1717.7 676.5 L1720.3 675.5 L1723.0 674.4 L1725.6 673.4 L1728.2 672.4 L1730.7 671.3 L1733.3 670.2 L1735.8 669.2 L1738.3 668.1 L1740.8 667.0 L1743.3 665.9 L1745.8 664.8 L1748.2 663.7 L1750.6 662.5 L1753.0 661.4 L1755.4 660.3 L1757.7 659.1 L1760.1 658.0 L1762.4 656.8 L1764.7 655.6 L1767.0 654.4 L1769.2 653.2 L1771.5 652.0 L1773.7 650.8 L1775.9 649.6 L1778.0 648.4 L1780.2 647.2 L1782.3 645.9 L1784.4 644.7 L1786.5 643.5 L1788.6 642.2 L1790.6 640.9 L1792.7 639.7 L1794.7 638.4 L1796.7 637.1 L1798.6 635.8 L1800.6 634.5 L1802.5 633.2 L1804.4 631.9 L1806.3 630.6 L1808.1 629.2 L1810.0 627.9 L1811.8 626.6 L1813.6 625.2 L1815.3 623.9 L1817.1 622.5 L1818.8 621.2 L1820.5 619.8 L1822.2 618.4 L1823.9 617.1 L1825.5 615.7 L1827.1 614.3 L1828.7 612.9 L1830.3 611.5 L1831.9 610.1 L1833.4 608.7 L1834.9 607.3 L1836.4 605.9 L1837.9 604.4 L1839.3 603.0 L1840.7 601.6 L1842.1 600.1 L1843.5 598.7 L1844.8 597.3 L1846.2 595.8 L1847.5 594.3 L1848.8 592.9 L1850.0 591.4 L1851.3 590.0 L1852.5 588.5 L1853.7 587.0 L1854.9 585.5 L1856.0 584.1 L1857.2 582.6 L1858.3 581.1 L1859.4 579.6 L1860.4 578.1 L1861.5 576.6 L1862.5 575.1 L1863.5 573.6 L1864.5 572.1 L1865.4 570.6 L1866.3 569.0 L1867.2 567.5 L1868.1 566.0 L1869.0 564.5 L1869.8 562.9 L1870.6 561.4 L1871.4 559.9 L1872.2 558.3 L1872.9 556.8 L1873.7 555.3 L1874.4 553.7 L1875.0 552.2 L1875.7 550.6 L1876.3 549.1 L1876.9 547.5 L1877.5 546.0 L1878.1 544.4 L1878.6 542.9 L1879.1 541.3 L1879.6 539.8 L1880.1 538.2 L1880.6 536.6 L1881.0 535.1 L1881.4 533.5 L1881.8 532.0 L1882.1 530.4 L1882.5 528.8 L1882.8 527.3 L1883.1 525.7 L1883.3 524.1 L1883.6 522.5 L1883.8 521.0 L1884.0 519.4 L1884.2 517.8 L1884.3 516.2 L1884.4 514.7 L1884.5 513.1 L1884.6 511.5 L1884.7 510.0 L1884.7 508.4 L1884.7 506.8 L1884.7 505.2 L1884.7 503.7 L1884.6 502.1 L1884.5 500.6 L1884.4 499.0 L1884.3 497.5 L1884.2 495.9 L1884.0 494.4 L1883.8 492.8 L1883.6 491.3 L1883.3 489.7 L1883.1 488.2 L1882.8 486.6 L1882.5 485.1 L1882.1 483.5 L1881.8 482.0 L1881.4 480.4 L1881.0 478.9 L1880.6 477.4 L1880.1 475.8 L1879.6 474.3 L1879.1 472.7 L1878.6 471.2 L1878.1 469.7 L1877.5 468.1 L1876.9 466.6 L1876.3 465.1 L1875.7 463.6 L1875.0 462.0 L1874.4 460.5 L1873.7 459.0 L1872.9 457.5 L1872.2 455.9 L1871.4 454.4 L1870.6 452.9 L1869.8 451.4 L1869.0 449.9 L1868.1 448.4 L1867.2 446.9 L1866.3 445.4 L1865.4 443.9 L1864.5 442.4 L1863.5 440.9 L1862.5 439.4 L1861.5 438.0 L1860.4 436.5 L1859.4 435.0 L1858.3 433.5 L1857.2 432.1 L1856.0 430.6 L1854.9 429.1 L1853.7 427.7 L1852.5 426.2 L1851.3 424.8 L1850.0 423.3 L1848.8 421.9 L1847.5 420.4 L1846.2 419.0 L1844.8 417.6 L1843.5 416.1 L1842.1 414.7 L1840.7 413.3 L1839.3 411.9 L1837.9 410.5 L1836.4 409.1 L1834.9 407.7 L1833.4 406.3 L1831.9 404.9 L1830.3 403.5 L1828.7 402.1 L1827.1 400.8 L1825.5 399.4 L1823.9 398.0 L1822.2 396.7 L1820.5 395.3 L1818.8 394.0 L1817.1 392.6 L1815.3 391.3 L1813.6 390.0 L1811.8 388.6 L1810.0 387.3 L1808.1 386.0 L1806.3 384.7 L1804.4 383.4 L1802.5 382.1 L1800.6 380.8 L1798.6 379.5 L1796.7 378.3 L1794.7 377.0 L1792.7 375.7 L1790.6 374.5 L1788.6 373.2 L1786.5 372.0 L1784.4 370.8 L1782.3 369.5 L1780.2 368.3 L1778.0 367.1 L1775.9 365.9 L1773.7 364.7 L1771.5 363.5 L1769.2 362.3 L1767.0 361.2 L1764.7 360.0 L1762.4 358.8 L1760.1 357.7 L1757.7 356.5 L1755.4 355.4 L1753.0 354.3 L1750.6 353.2 L1748.2 352.0 L1745.8 350.9 L1743.3 349.9 L1740.8 348.8 L1738.3 347.7 L1735.8 346.6 L1733.3 345.6 L1730.7 344.5 L1728.2 343.5 L1725.6 342.4 L1723.0 341.4 L1720.3 340.4 L1717.7 339.4 L1715.0 338.4 L1712.4 337.4 L1709.7 336.5 L1706.9 335.5 L1704.2 334.5 L1701.4 333.6 L1698.7 332.7 L1695.9 331.7 L1693.1 330.8 L1690.2 329.9 L1687.4 329.0 L1684.5 328.1 L1681.6 327.3 L1678.7 326.4 L1675.8 325.6 L1672.9 324.7 L1669.9 323.9 L1667.0 323.1 L1664.0 322.3 L1661.0 321.5 L1658.0 320.7 L1654.9 319.9 L1651.9 319.1 L1648.8 318.4 L1645.7 317.7 L1642.6 316.9 L1639.5 316.2 L1636.4 315.5 L1633.2 314.8 L1630.1 314.1 L1626.9 313.5 L1623.7 312.8 L1620.5 312.2 L1617.3 311.5 L1614.0 310.9 L1610.8 310.3 L1607.5 309.7 L1604.2 309.2 L1601.0 308.6 L1597.7 308.0 L1594.3 307.5 L1591.0 307.0 L1587.7 306.5 L1584.3 306.0 L1580.9 305.5 L1577.5 305.0 L1574.1 304.5 L1570.7 304.1 L1567.3 303.7 L1563.9 303.2 L1560.4 302.8 L1557.0 302.4 L1553.5 302.1 L1550.0 301.7 L1546.5 301.4 L1543.0 301.0 L1539.5 300.7 L1536.0 300.4 M1536.0 716.0 L1539.2 715.4 L1542.3 714.8 L1545.4 714.2 L1548.5 713.6 L1551.6 713.0 L1554.7 712.3 L1557.7 711.7 L1560.7 711.0 L1563.7 710.3 L1566.7 709.6 L1569.7 708.9 L1572.7 708.2 L1575.6 707.5 L1578.5 706.8 L1581.4 706.0 L1584.3 705.3 L1587.2 704.5 L1590.0 703.8 L1592.9 703.0 L1595.7 702.2 L1598.5 701.4 L1601.2 700.6 L1604.0 699.8 L1606.7 698.9 L1609.5 698.1 L1612.2 697.2 L1614.8 696.4 L1617.5 695.5 L1620.1 694.7 L1622.8 693.8 L1625.4 692.9 L1628.0 692.0 L1630.5 691.1 L1633.1 690.2 L1635.6 689.2 L1638.2 688.3 L1640.7 687.4 L1643.1 686.4 L1645.6 685.5 L1648.0 684.5 L1650.5 683.6 L1652.9 682.6 L1655.3 681.6 L1657.6 680.6 L1660.0 679.6 L1662.3 678.6 L1664.6 677.6 L1666.9 676.6 L1669.2 675.5 L1671.5 674.5 L1673.7 673.5 L1675.9 672.4 L1678.1 671.4 L1680.3 670.3 L1682.5 669.3 L1684.6 668.2 L1686.8 667.1 L1688.9 666.0 L1691.0 664.9 L1693.0 663.8 L1695.1 662.7 L1697.1 661.6 L1699.2 660.5 L1701.2 659.4 L1703.1 658.3 L1705.1 657.1 L1707.1 656.0 L1709.0 654.9 L1710.9 653.7 L1712.8 652.6 L1714.7 651.4 L1716.5 650.3 L1718.4 649.1 L1720.2 647.9 L1722.0 646.8 L1723.8 645.6 L1725.6 644.4 L1727.3 643.2 L1729.0 642.0 L1730.8 640.8 L1732.5 639.6 L1734.1 638.4 L1735.8 637.2 L1737.4 636.0 L1739.1 634.7 L1740.7 633.5 L1742.3 632.3 L1743.8 631.1 L1745.4 629.8 L1746.9 628.6 L1748.4 627.3 L1749.9 626.1 L1751.4 624.8 L1752.9 623.6 L1754.3 622.3 L1755.8 621.1 L1757.2 619.8 L1758.6 618.5 L1760.0 617.2 L1761.3 616.0 L1762.7 614.7 L1764.0 613.4 L1765.3 612.1 L1766.6 610.8 L1767.9 609.5 L1769.1 608.2 L1770.4 606.9 L1771.6 605.6 L1772.8 604.3 L1774.0 603.0 L1775.2 601.7 L1776.3 600.4 L1777.4 599.1 L1778.6 597.7 L1779.7 596.4 L1780.7 595.1 L1781.8 593.8 L1782.9 592.4 L1783.9 591.1 L1784.9 589.8 L1785.9 588.4 L1786.9 587.1 L1787.9 585.8 L1788.8 584.4 L1789.7 583.1 L1790.6 581.7 L1791.5 580.4 L1792.4 579.0 L1793.3 577.7 L1794.1 576.3 L1795.0 574.9 L1795.8 573.6 L1796.6 572.2 L1797.3 570.8 L1798.1 569.5 L1798.8 568.1 L1799.6 566.7 L1800.3 565.4 L1801.0 564.0 L1801.7 562.6 L1802.3 561.2 L1803.0 559.9 L1803.6 558.5 L1804.2 557.1 L1804.8 555.7 L1805.4 554.3 L1805.9 553.0 L1806.5 551.6 L1807.0 550.2 L1807.5 548.8 L1808.0 547.4 L1808.5 546.0 L1808.9 544.6 L1809.4 543.2 L1809.8 541.8 L1810.2 540.4 L1810.6 539.1 L1811.0 537.7 L1811.3 536.3 L1811.6 534.9 L1812.0 533.5 L1812.3 532.1 L1812.6 530.7 L1812.8 529.3 L1813.1 527.9 L1813.3 526.5 L1813.6 525.1 L1813.8 523.7 L1814.0 522.3 L1814.1 520.8 L1814.3 519.4 L1814.4 518.0 L1814.6 516.6 L1814.7 515.2 L1814.8 513.8 L1814.8 512.4 L1814.9 511.0 L1814.9 509.6 L1815.0 508.2 L1815.0 506.8 L1815.0 505.4 L1814.9 504.0 L1814.9 502.6 L1814.8 501.3 L1814.8 499.9 L1814.7 498.5 L1814.6 497.1 L1814.4 495.7 L1814.3 494.3 L1814.1 492.9 L1814.0 491.6 L1813.8 490.2 L1813.6 488.8 L1813.3 487.4 L1813.1 486.0 L1812.8 484.6 L1812.6 483.3 L1812.3 481.9 L1812.0 480.5 L1811.6 479.1 L1811.3 477.7 L1811.0 476.4 L1810.6 475.0 L1810.2 473.6 L1809.8 472.2 L1809.4 470.9 L1808.9 469.5 L1808.5 468.1 L1808.0 466.7 L1807.5 465.4 L1807.0 464.0 L1806.5 462.6 L1805.9 461.3 L1805.4 459.9 L1804.8 458.5 L1804.2 457.2 L1803.6 455.8 L1803.0 454.4 L1802.3 453.1 L1801.7 451.7 L1801.0 450.4 L1800.3 449.0 L1799.6 447.7 L1798.8 446.3 L1798.1 445.0 L1797.3 443.6 L1796.6 442.3 L1795.8 440.9 L1795.0 439.6 L1794.1 438.2 L1793.3 436.9 L1792.4 435.6 L1791.5 434.2 L1790.6 432.9 L1789.7 431.6 L1788.8 430.2 L1787.9 428.9 L1786.9 427.6 L1785.9 426.3 L1784.9 424.9 L1783.9 423.6 L1782.9 422.3 L1781.8 421.0 L1780.7 419.7 L1779.7 418.4 L1778.6 417.1 L1777.4 415.8 L1776.3 414.5 L1775.2 413.2 L1774.0 411.9 L1772.8 410.6 L1771.6 409.3 L1770.4 408.0 L1769.1 406.7 L1767.9 405.5 L1766.6 404.2 L1765.3 402.9 L1764.0 401.6 L1762.7 400.4 L1761.3 399.1 L1760.0 397.9 L1758.6 396.6 L1757.2 395.3 L1755.8 394.1 L1754.3 392.8 L1752.9 391.6 L1751.4 390.4 L1749.9 389.1 L1748.4 387.9 L1746.9 386.7 L1745.4 385.4 L1743.8 384.2 L1742.3 383.0 L1740.7 381.8 L1739.1 380.6 L1737.4 379.4 L1735.8 378.2 L1734.1 377.0 L1732.5 375.8 L1730.8 374.6 L1729.0 373.4 L1727.3 372.2 L1725.6 371.1 L1723.8 369.9 L1722.0 368.7 L1720.2 367.6 L1718.4 366.4 L1716.5 365.3 L1714.7 364.1 L1712.8 363.0 L1710.9 361.9 L1709.0 360.7 L1707.1 359.6 L1705.1 358.5 L1703.1 357.4 L1701.2 356.3 L1699.2 355.2 L1697.1 354.1 L1695.1 353.0 L1693.0 351.9 L1691.0 350.8 L1688.9 349.7 L1686.8 348.7 L1684.6 347.6 L1682.5 346.5 L1680.3 345.5 L1678.1 344.4 L1675.9 343.4 L1673.7 342.4 L1671.5 341.4 L1669.2 340.3 L1666.9 339.3 L1664.6 338.3 L1662.3 337.3 L1660.0 336.3 L1657.6 335.3 L1655.3 334.4 L1652.9 333.4 L1650.5 332.4 L1648.0 331.5 L1645.6 330.5 L1643.1 329.6 L1640.7 328.7 L1638.2 327.7 L1635.6 326.8 L1633.1 325.9 L1630.5 325.0 L1628.0 324.1 L1625.4 323.2 L1622.8 322.4 L1620.1 321.5 L1617.5 320.6 L1614.8 319.8 L1612.2 318.9 L1609.5 318.1 L1606.7 317.3 L1604.0 316.4 L1601.2 315.6 L1598.5 314.8 L1595.7 314.1 L1592.9 313.3 L1590.0 312.5 L1587.2 311.7 L1584.3 311.0 L1581.4 310.3 L1578.5 309.5 L1575.6 308.8 L1572.7 308.1 L1569.7 307.4 L1566.7 306.7 L1563.7 306.0 L1560.7 305.4 L1557.7 304.7 L1554.7 304.0 L1551.6 303.4 L1548.5 302.8 L1545.4 302.2 L1542.3 301.6 L1539.2 301.0 L1536.0 300.4 M1536.0 716.0 L1538.6 715.2 L1541.1 714.4 L1543.7 713.5 L1546.2 712.7 L1548.7 711.8 L1551.1 711.0 L1553.6 710.1 L1556.0 709.2 L1558.4 708.3 L1560.8 707.4 L1563.2 706.5 L1565.6 705.6 L1567.9 704.7 L1570.2 703.8 L1572.5 702.9 L1574.8 701.9 L1577.0 701.0 L1579.3 700.1 L1581.5 699.1 L1583.7 698.2 L1585.9 697.2 L1588.1 696.2 L1590.2 695.2 L1592.4 694.3 L1594.5 693.3 L1596.6 692.3 L1598.6 691.3 L1600.7 690.3 L1602.7 689.3 L1604.8 688.3 L1606.8 687.3 L1608.8 686.2 L1610.7 685.2 L1612.7 684.2 L1614.6 683.2 L1616.6 682.1 L1618.5 681.1 L1620.4 680.0 L1622.2 679.0 L1624.1 677.9 L1625.9 676.9 L1627.7 675.8 L1629.5 674.7 L1631.3 673.6 L1633.1 672.6 L1634.9 671.5 L1636.6 670.4 L1638.3 669.3 L1640.0 668.2 L1641.7 667.1 L1643.4 666.0 L1645.1 664.9 L1646.7 663.8 L1648.3 662.7 L1649.9 661.6 L1651.5 660.5 L1653.1 659.3 L1654.7 658.2 L1656.2 657.1 L1657.8 655.9 L1659.3 654.8 L1660.8 653.7 L1662.3 652.5 L1663.8 651.4 L1665.2 650.2 L1666.7 649.1 L1668.1 647.9 L1669.5 646.8 L1670.9 645.6 L1672.3 644.5 L1673.7 643.3 L1675.0 642.1 L1676.4 641.0 L1677.7 639.8 L1679.0 638.6 L1680.3 637.4 L1681.6 636.2 L1682.9 635.1 L1684.1 633.9 L1685.4 632.7 L1686.6 631.5 L1687.8 630.3 L1689.0 629.1 L1690.2 627.9 L1691.4 626.7 L1692.6 625.5 L1693.7 624.3 L1694.8 623.1 L1696.0 621.9 L1697.1 620.7 L1698.2 619.5 L1699.2 618.3 L1700.3 617.0 L1701.4 615.8 L1702.4 614.6 L1703.4 613.4 L1704.4 612.2 L1705.4 610.9 L1706.4 609.7 L1707.4 608.5 L1708.3 607.3 L1709.3 606.0 L1710.2 604.8 L1711.1 603.6 L1712.1 602.3 L1713.0 601.1 L1713.8 599.8 L1714.7 598.6 L1715.6 597.4 L1716.4 596.1 L1717.2 594.9 L1718.0 593.6 L1718.9 592.4 L1719.6 591.1 L1720.4 589.9 L1721.2 588.6 L1721.9 587.4 L1722.7 586.1 L1723.4 584.9 L1724.1 583.6 L1724.8 582.3 L1725.5 581.1 L1726.2 579.8 L1726.9 578.6 L1727.5 577.3 L1728.2 576.0 L1728.8 574.8 L1729.4 573.5 L1730.0 572.2 L1730.6 571.0 L1731.2 569.7 L1731.8 568.4 L1732.3 567.2 L1732.9 565.9 L1733.4 564.6 L1733.9 563.4 L1734.5 562.1 L1735.0 560.8 L1735.4 559.5 L1735.9 558.3 L1736.4 557.0 L1736.8 555.7 L1737.3 554.4 L1737.7 553.1 L1738.1 551.9 L1738.5 550.6 L1738.9 549.3 L1739.3 548.0 L1739.6 546.7 L1740.0 545.5 L1740.3 544.2 L1740.7 542.9 L1741.0 541.6 L1741.3 540.3 L1741.6 539.0 L1741.9 537.7 L1742.2 536.5 L1742.4 535.2 L1742.7 533.9 L1742.9 532.6 L1743.1 531.3 L1743.4 530.0 L1743.6 528.7 L1743.7 527.4 L1743.9 526.2 L1744.1 524.9 L1744.3 523.6 L1744.4 522.3 L1744.5 521.0 L1744.7 519.7 L1744.8 518.4 L1744.9 517.1 L1744.9 515.8 L1745.0 514.5 L1745.1 513.3 L1745.1 512.0 L1745.2 510.7 L1745.2 509.4 L1745.2 508.1 L1745.2 506.8 L1745.2 505.5 L1745.2 504.3 L1745.2 503.0 L1745.1 501.7 L1745.1 500.4 L1745.0 499.2 L1744.9 497.9 L1744.9 496.6 L1744.8 495.3 L1744.7 494.1 L1744.5 492.8 L1744.4 491.5 L1744.3 490.2 L1744.1 489.0 L1743.9 487.7 L1743.7 486.4 L1743.6 485.2 L1743.4 483.9 L1743.1 482.6 L1742.9 481.4 L1742.7 480.1 L1742.4 478.8 L1742.2 477.5 L1741.9 476.3 L1741.6 475.0 L1741.3 473.7 L1741.0 472.5 L1740.7 471.2 L1740.3 469.9 L1740.0 468.7 L1739.6 467.4 L1739.3 466.1 L1738.9 464.9 L1738.5 463.6 L1738.1 462.3 L1737.7 461.1 L1737.3 459.8 L1736.8 458.6 L1736.4 457.3 L1735.9 456.0 L1735.4 454.8 L1735.0 453.5 L1734.5 452.3 L1733.9 451.0 L1733.4 449.8 L1732.9 448.5 L1732.3 447.2 L1731.8 446.0 L1731.2 444.7 L1730.6 443.5 L1730.0 442.2 L1729.4 441.0 L1728.8 439.7 L1728.2 438.5 L1727.5 437.2 L1726.9 436.0 L1726.2 434.8 L1725.5 433.5 L1724.8 432.3 L1724.1 431.0 L1723.4 429.8 L1722.7 428.6 L1721.9 427.3 L1721.2 426.1 L1720.4 424.8 L1719.6 423.6 L1718.9 422.4 L1718.0 421.1 L1717.2 419.9 L1716.4 418.7 L1715.6 417.5 L1714.7 416.2 L1713.8 415.0 L1713.0 413.8 L1712.1 412.6 L1711.1 411.3 L1710.2 410.1 L1709.3 408.9 L1708.3 407.7 L1707.4 406.5 L1706.4 405.3 L1705.4 404.1 L1704.4 402.9 L1703.4 401.6 L1702.4 400.4 L1701.4 399.2 L1700.3 398.0 L1699.2 396.8 L1698.2 395.6 L1697.1 394.4 L1696.0 393.3 L1694.8 392.1 L1693.7 390.9 L1692.6 389.7 L1691.4 388.5 L1690.2 387.3 L1689.0 386.1 L1687.8 385.0 L1686.6 383.8 L1685.4 382.6 L1684.1 381.4 L1682.9 380.3 L1681.6 379.1 L1680.3 377.9 L1679.0 376.8 L1677.7 375.6 L1676.4 374.5 L1675.0 373.3 L1673.7 372.2 L1672.3 371.0 L1670.9 369.9 L1669.5 368.7 L1668.1 367.6 L1666.7 366.4 L1665.2 365.3 L1663.8 364.2 L1662.3 363.0 L1660.8 361.9 L1659.3 360.8 L1657.8 359.7 L1656.2 358.6 L1654.7 357.4 L1653.1 356.3 L1651.5 355.2 L1649.9 354.1 L1648.3 353.0 L1646.7 351.9 L1645.1 350.8 L1643.4 349.7 L1641.7 348.6 L1640.0 347.6 L1638.3 346.5 L1636.6 345.4 L1634.9 344.3 L1633.1 343.3 L1631.3 342.2 L1629.5 341.1 L1627.7 340.1 L1625.9 339.0 L1624.1 338.0 L1622.2 337.0 L1620.4 335.9 L1618.5 334.9 L1616.6 333.8 L1614.6 332.8 L1612.7 331.8 L1610.7 330.8 L1608.8 329.8 L1606.8 328.8 L1604.8 327.8 L1602.7 326.8 L1600.7 325.8 L1598.6 324.8 L1596.6 323.8 L1594.5 322.8 L1592.4 321.9 L1590.2 320.9 L1588.1 319.9 L1585.9 319.0 L1583.7 318.0 L1581.5 317.1 L1579.3 316.2 L1577.0 315.2 L1574.8 314.3 L1572.5 313.4 L1570.2 312.5 L1567.9 311.6 L1565.6 310.7 L1563.2 309.8 L1560.8 308.9 L1558.4 308.0 L1556.0 307.1 L1553.6 306.3 L1551.1 305.4 L1548.7 304.5 L1546.2 303.7 L1543.7 302.9 L1541.1 302.0 L1538.6 301.2 L1536.0 300.4 M1536.0 716.0 L1537.8 715.0 L1539.6 714.0 L1541.4 713.0 L1543.2 712.0 L1544.9 710.9 L1546.6 709.9 L1548.4 708.9 L1550.1 707.9 L1551.7 706.8 L1553.4 705.8 L1555.1 704.7 L1556.7 703.7 L1558.3 702.6 L1559.9 701.6 L1561.5 700.5 L1563.1 699.5 L1564.6 698.4 L1566.2 697.3 L1567.7 696.3 L1569.2 695.2 L1570.7 694.1 L1572.2 693.0 L1573.7 692.0 L1575.1 690.9 L1576.6 689.8 L1578.0 688.7 L1579.4 687.6 L1580.8 686.5 L1582.2 685.4 L1583.6 684.3 L1584.9 683.2 L1586.3 682.1 L1587.6 681.0 L1588.9 679.9 L1590.2 678.8 L1591.5 677.7 L1592.8 676.6 L1594.1 675.5 L1595.3 674.4 L1596.6 673.2 L1597.8 672.1 L1599.0 671.0 L1600.2 669.9 L1601.4 668.7 L1602.6 667.6 L1603.8 666.5 L1604.9 665.4 L1606.1 664.2 L1607.2 663.1 L1608.4 662.0 L1609.5 660.8 L1610.6 659.7 L1611.7 658.5 L1612.7 657.4 L1613.8 656.3 L1614.9 655.1 L1615.9 654.0 L1616.9 652.8 L1618.0 651.7 L1619.0 650.5 L1620.0 649.4 L1621.0 648.2 L1621.9 647.0 L1622.9 645.9 L1623.9 644.7 L1624.8 643.6 L1625.8 642.4 L1626.7 641.3 L1627.6 640.1 L1628.5 638.9 L1629.4 637.8 L1630.3 636.6 L1631.2 635.4 L1632.0 634.3 L1632.9 633.1 L1633.8 631.9 L1634.6 630.7 L1635.4 629.6 L1636.2 628.4 L1637.0 627.2 L1637.8 626.0 L1638.6 624.9 L1639.4 623.7 L1640.2 622.5 L1641.0 621.3 L1641.7 620.2 L1642.4 619.0 L1643.2 617.8 L1643.9 616.6 L1644.6 615.4 L1645.3 614.2 L1646.0 613.1 L1646.7 611.9 L1647.4 610.7 L1648.1 609.5 L1648.7 608.3 L1649.4 607.1 L1650.0 605.9 L1650.7 604.7 L1651.3 603.5 L1651.9 602.3 L1652.5 601.2 L1653.1 600.0 L1653.7 598.8 L1654.3 597.6 L1654.9 596.4 L1655.4 595.2 L1656.0 594.0 L1656.5 592.8 L1657.1 591.6 L1657.6 590.4 L1658.1 589.2 L1658.7 588.0 L1659.2 586.8 L1659.7 585.6 L1660.2 584.4 L1660.6 583.2 L1661.1 582.0 L1661.6 580.8 L1662.0 579.6 L1662.5 578.4 L1662.9 577.2 L1663.4 576.0 L1663.8 574.8 L1664.2 573.5 L1664.6 572.3 L1665.0 571.1 L1665.4 569.9 L1665.8 568.7 L1666.2 567.5 L1666.6 566.3 L1666.9 565.1 L1667.3 563.9 L1667.6 562.7 L1668.0 561.5 L1668.3 560.3 L1668.6 559.0 L1669.0 557.8 L1669.3 556.6 L1669.6 555.4 L1669.9 554.2 L1670.1 553.0 L1670.4 551.8 L1670.7 550.6 L1671.0 549.4 L1671.2 548.1 L1671.5 546.9 L1671.7 545.7 L1671.9 544.5 L1672.2 543.3 L1672.4 542.1 L1672.6 540.9 L1672.8 539.6 L1673.0 538.4 L1673.2 537.2 L1673.4 536.0 L1673.5 534.8 L1673.7 533.6 L1673.9 532.4 L1674.0 531.1 L1674.2 529.9 L1674.3 528.7 L1674.4 527.5 L1674.5 526.3 L1674.7 525.1 L1674.8 523.8 L1674.9 522.6 L1675.0 521.4 L1675.0 520.2 L1675.1 519.0 L1675.2 517.8 L1675.3 516.5 L1675.3 515.3 L1675.4 514.1 L1675.4 512.9 L1675.4 511.7 L1675.5 510.5 L1675.5 509.2 L1675.5 508.0 L1675.5 506.8 L1675.5 505.6 L1675.5 504.4 L1675.5 503.2 L1675.4 502.0 L1675.4 500.8 L1675.4 499.6 L1675.3 498.4 L1675.3 497.2 L1675.2 496.0 L1675.1 494.8 L1675.0 493.6 L1675.0 492.4 L1674.9 491.2 L1674.8 490.0 L1674.7 488.8 L1674.5 487.6 L1674.4 486.4 L1674.3 485.2 L1674.2 484.0 L1674.0 482.8 L1673.9 481.6 L1673.7 480.4 L1673.5 479.2 L1673.4 478.0 L1673.2 476.8 L1673.0 475.6 L1672.8 474.4 L1672.6 473.2 L1672.4 472.0 L1672.2 470.8 L1671.9 469.6 L1671.7 468.4 L1671.5 467.2 L1671.2 466.0 L1671.0 464.8 L1670.7 463.6 L1670.4 462.4 L1670.1 461.2 L1669.9 460.0 L1669.6 458.8 L1669.3 457.6 L1669.0 456.5 L1668.6 455.3 L1668.3 454.1 L1668.0 452.9 L1667.6 451.7 L1667.3 450.5 L1666.9 449.3 L1666.6 448.1 L1666.2 446.9 L1665.8 445.7 L1665.4 444.5 L1665.0 443.3 L1664.6 442.1 L1664.2 441.0 L1663.8 439.8 L1663.4 438.6 L1662.9 437.4 L1662.5 436.2 L1662.0 435.0 L1661.6 433.8 L1661.1 432.6 L1660.6 431.5 L1660.2 430.3 L1659.7 429.1 L1659.2 427.9 L1658.7 426.7 L1658.1 425.5 L1657.6 424.3 L1657.1 423.2 L1656.5 422.0 L1656.0 420.8 L1655.4 419.6 L1654.9 418.4 L1654.3 417.3 L1653.7 416.1 L1653.1 414.9 L1652.5 413.7 L1651.9 412.5 L1651.3 411.4 L1650.7 410.2 L1650.0 409.0 L1649.4 407.8 L1648.7 406.7 L1648.1 405.5 L1647.4 404.3 L1646.7 403.2 L1646.0 402.0 L1645.3 400.8 L1644.6 399.6 L1643.9 398.5 L1643.2 397.3 L1642.4 396.1 L1641.7 395.0 L1641.0 393.8 L1640.2 392.6 L1639.4 391.5 L1638.6 390.3 L1637.8 389.2 L1637.0 388.0 L1636.2 386.8 L1635.4 385.7 L1634.6 384.5 L1633.8 383.4 L1632.9 382.2 L1632.0 381.1 L1631.2 379.9 L1630.3 378.8 L1629.4 377.6 L1628.5 376.5 L1627.6 375.3 L1626.7 374.2 L1625.8 373.0 L1624.8 371.9 L1623.9 370.7 L1622.9 369.6 L1621.9 368.4 L1621.0 367.3 L1620.0 366.2 L1619.0 365.0 L1618.0 363.9 L1616.9 362.8 L1615.9 361.6 L1614.9 360.5 L1613.8 359.4 L1612.7 358.2 L1611.7 357.1 L1610.6 356.0 L1609.5 354.9 L1608.4 353.7 L1607.2 352.6 L1606.1 351.5 L1604.9 350.4 L1603.8 349.3 L1602.6 348.2 L1601.4 347.0 L1600.2 345.9 L1599.0 344.8 L1597.8 343.7 L1596.6 342.6 L1595.3 341.5 L1594.1 340.4 L1592.8 339.3 L1591.5 338.2 L1590.2 337.1 L1588.9 336.0 L1587.6 334.9 L1586.3 333.8 L1584.9 332.8 L1583.6 331.7 L1582.2 330.6 L1580.8 329.5 L1579.4 328.4 L1578.0 327.4 L1576.6 326.3 L1575.1 325.2 L1573.7 324.1 L1572.2 323.1 L1570.7 322.0 L1569.2 321.0 L1567.7 319.9 L1566.2 318.8 L1564.6 317.8 L1563.1 316.7 L1561.5 315.7 L1559.9 314.7 L1558.3 313.6 L1556.7 312.6 L1555.1 311.5 L1553.4 310.5 L1551.7 309.5 L1550.1 308.5 L1548.4 307.4 L1546.6 306.4 L1544.9 305.4 L1543.2 304.4 L1541.4 303.4 L1539.6 302.4 L1537.8 301.4 L1536.0 300.4 M1536.0 716.0 L1536.9 714.9 L1537.9 713.8 L1538.8 712.7 L1539.7 711.5 L1540.6 710.4 L1541.5 709.3 L1542.4 708.1 L1543.2 707.0 L1544.1 705.9 L1545.0 704.8 L1545.8 703.6 L1546.6 702.5 L1547.5 701.4 L1548.3 700.2 L1549.1 699.1 L1549.9 697.9 L1550.7 696.8 L1551.5 695.7 L1552.3 694.5 L1553.0 693.4 L1553.8 692.2 L1554.5 691.1 L1555.3 690.0 L1556.0 688.8 L1556.8 687.7 L1557.5 686.5 L1558.2 685.4 L1558.9 684.2 L1559.6 683.1 L1560.3 682.0 L1561.0 680.8 L1561.7 679.7 L1562.3 678.5 L1563.0 677.4 L1563.6 676.2 L1564.3 675.1 L1564.9 673.9 L1565.6 672.8 L1566.2 671.6 L1566.8 670.5 L1567.5 669.3 L1568.1 668.2 L1568.7 667.0 L1569.3 665.8 L1569.9 664.7 L1570.4 663.5 L1571.0 662.4 L1571.6 661.2 L1572.2 660.1 L1572.7 658.9 L1573.3 657.8 L1573.8 656.6 L1574.4 655.4 L1574.9 654.3 L1575.4 653.1 L1576.0 652.0 L1576.5 650.8 L1577.0 649.7 L1577.5 648.5 L1578.0 647.3 L1578.5 646.2 L1579.0 645.0 L1579.5 643.9 L1580.0 642.7 L1580.4 641.5 L1580.9 640.4 L1581.4 639.2 L1581.8 638.0 L1582.3 636.9 L1582.7 635.7 L1583.2 634.6 L1583.6 633.4 L1584.0 632.2 L1584.5 631.1 L1584.9 629.9 L1585.3 628.7 L1585.7 627.6 L1586.1 626.4 L1586.5 625.2 L1586.9 624.1 L1587.3 622.9 L1587.7 621.7 L1588.1 620.6 L1588.5 619.4 L1588.9 618.2 L1589.2 617.1 L1589.6 615.9 L1590.0 614.7 L1590.3 613.6 L1590.7 612.4 L1591.0 611.2 L1591.4 610.1 L1591.7 608.9 L1592.0 607.7 L1592.4 606.6 L1592.7 605.4 L1593.0 604.2 L1593.3 603.1 L1593.6 601.9 L1593.9 600.7 L1594.2 599.5 L1594.5 598.4 L1594.8 597.2 L1595.1 596.0 L1595.4 594.9 L1595.7 593.7 L1596.0 592.5 L1596.2 591.3 L1596.5 590.2 L1596.8 589.0 L1597.0 587.8 L1597.3 586.7 L1597.5 585.5 L1597.8 584.3 L1598.0 583.1 L1598.3 582.0 L1598.5 580.8 L1598.7 579.6 L1599.0 578.5 L1599.2 577.3 L1599.4 576.1 L1599.6 574.9 L1599.8 573.8 L1600.1 572.6 L1600.3 571.4 L1600.5 570.2 L1600.7 569.1 L1600.8 567.9 L1601.0 566.7 L1601.2 565.6 L1601.4 564.4 L1601.6 563.2 L1601.8 562.0 L1601.9 560.9 L1602.1 559.7 L1602.3 558.5 L1602.4 557.3 L1602.6 556.2 L1602.7 555.0 L1602.9 553.8 L1603.0 552.6 L1603.1 551.5 L1603.3 550.3 L1603.4 549.1 L1603.5 547.9 L1603.7 546.8 L1603.8 545.6 L1603.9 544.4 L1604.0 543.2 L1604.1 542.1 L1604.2 540.9 L1604.3 539.7 L1604.4 538.5 L1604.5 537.4 L1604.6 536.2 L1604.7 535.0 L1604.8 533.8 L1604.9 532.7 L1605.0 531.5 L1605.0 530.3 L1605.1 529.1 L1605.2 528.0 L1605.2 526.8 L1605.3 525.6 L1605.3 524.4 L1605.4 523.3 L1605.4 522.1 L1605.5 520.9 L1605.5 519.7 L1605.6 518.6 L1605.6 517.4 L1605.6 516.2 L1605.7 515.0 L1605.7 513.9 L1605.7 512.7 L1605.7 511.5 L1605.7 510.3 L1605.7 509.2 L1605.7 508.0 L1605.7 506.8 L1605.7 505.6 L1605.7 504.5 L1605.7 503.3 L1605.7 502.2 L1605.7 501.0 L1605.7 499.8 L1605.7 498.7 L1605.6 497.5 L1605.6 496.4 L1605.6 495.2 L1605.5 494.0 L1605.5 492.9 L1605.4 491.7 L1605.4 490.6 L1605.3 489.4 L1605.3 488.2 L1605.2 487.1 L1605.2 485.9 L1605.1 484.8 L1605.0 483.6 L1605.0 482.4 L1604.9 481.3 L1604.8 480.1 L1604.7 479.0 L1604.6 477.8 L1604.5 476.6 L1604.4 475.5 L1604.3 474.3 L1604.2 473.2 L1604.1 472.0 L1604.0 470.9 L1603.9 469.7 L1603.8 468.5 L1603.7 467.4 L1603.5 466.2 L1603.4 465.1 L1603.3 463.9 L1603.1 462.7 L1603.0 461.6 L1602.9 460.4 L1602.7 459.3 L1602.6 458.1 L1602.4 456.9 L1602.3 455.8 L1602.1 454.6 L1601.9 453.5 L1601.8 452.3 L1601.6 451.2 L1601.4 450.0 L1601.2 448.8 L1601.0 447.7 L1600.8 446.5 L1600.7 445.4 L1600.5 444.2 L1600.3 443.1 L1600.1 441.9 L1599.8 440.7 L1599.6 439.6 L1599.4 438.4 L1599.2 437.3 L1599.0 436.1 L1598.7 435.0 L1598.5 433.8 L1598.3 432.6 L1598.0 431.5 L1597.8 430.3 L1597.5 429.2 L1597.3 428.0 L1597.0 426.9 L1596.8 425.7 L1596.5 424.6 L1596.2 423.4 L1596.0 422.2 L1595.7 421.1 L1595.4 419.9 L1595.1 418.8 L1594.8 417.6 L1594.5 416.5 L1594.2 415.3 L1593.9 414.2 L1593.6 413.0 L1593.3 411.9 L1593.0 410.7 L1592.7 409.5 L1592.4 408.4 L1592.0 407.2 L1591.7 406.1 L1591.4 404.9 L1591.0 403.8 L1590.7 402.6 L1590.3 401.5 L1590.0 400.3 L1589.6 399.2 L1589.2 398.0 L1588.9 396.9 L1588.5 395.7 L1588.1 394.6 L1587.7 393.4 L1587.3 392.3 L1586.9 391.1 L1586.5 390.0 L1586.1 388.8 L1585.7 387.7 L1585.3 386.5 L1584.9 385.4 L1584.5 384.2 L1584.0 383.1 L1583.6 381.9 L1583.2 380.8 L1582.7 379.6 L1582.3 378.5 L1581.8 377.3 L1581.4 376.2 L1580.9 375.0 L1580.4 373.9 L1580.0 372.7 L1579.5 371.6 L1579.0 370.5 L1578.5 369.3 L1578.0 368.2 L1577.5 367.0 L1577.0 365.9 L1576.5 364.7 L1576.0 363.6 L1575.4 362.4 L1574.9 361.3 L1574.4 360.2 L1573.8 359.0 L1573.3 357.9 L1572.7 356.7 L1572.2 355.6 L1571.6 354.5 L1571.0 353.3 L1570.4 352.2 L1569.9 351.0 L1569.3 349.9 L1568.7 348.8 L1568.1 347.6 L1567.5 346.5 L1566.8 345.4 L1566.2 344.2 L1565.6 343.1 L1564.9 341.9 L1564.3 340.8 L1563.6 339.7 L1563.0 338.5 L1562.3 337.4 L1561.7 336.3 L1561.0 335.1 L1560.3 334.0 L1559.6 332.9 L1558.9 331.8 L1558.2 330.6 L1557.5 329.5 L1556.8 328.4 L1556.0 327.2 L1555.3 326.1 L1554.5 325.0 L1553.8 323.9 L1553.0 322.7 L1552.3 321.6 L1551.5 320.5 L1550.7 319.4 L1549.9 318.2 L1549.1 317.1 L1548.3 316.0 L1547.5 314.9 L1546.6 313.8 L1545.8 312.6 L1545.0 311.5 L1544.1 310.4 L1543.2 309.3 L1542.4 308.2 L1541.5 307.1 L1540.6 305.9 L1539.7 304.8 L1538.8 303.7 L1537.9 302.6 L1536.9 301.5 L1536.0 300.4 M1536.0 716.0 L1536.0 714.9 L1536.0 713.7 L1536.0 712.5 L1536.0 711.4 L1536.0 710.2 L1536.0 709.1 L1536.0 707.9 L1536.0 706.7 L1536.0 705.6 L1536.0 704.4 L1536.0 703.2 L1536.0 702.1 L1536.0 700.9 L1536.0 699.8 L1536.0 698.6 L1536.0 697.4 L1536.0 696.3 L1536.0 695.1 L1536.0 693.9 L1536.0 692.8 L1536.0 691.6 L1536.0 690.5 L1536.0 689.3 L1536.0 688.1 L1536.0 687.0 L1536.0 685.8 L1536.0 684.6 L1536.0 683.5 L1536.0 682.3 L1536.0 681.2 L1536.0 680.0 L1536.0 678.8 L1536.0 677.7 L1536.0 676.5 L1536.0 675.3 L1536.0 674.2 L1536.0 673.0 L1536.0 671.9 L1536.0 670.7 L1536.0 669.5 L1536.0 668.4 L1536.0 667.2 L1536.0 666.0 L1536.0 664.9 L1536.0 663.7 L1536.0 662.6 L1536.0 661.4 L1536.0 660.2 L1536.0 659.1 L1536.0 657.9 L1536.0 656.7 L1536.0 655.6 L1536.0 654.4 L1536.0 653.3 L1536.0 652.1 L1536.0 650.9 L1536.0 649.8 L1536.0 648.6 L1536.0 647.4 L1536.0 646.3 L1536.0 645.1 L1536.0 644.0 L1536.0 642.8 L1536.0 641.6 L1536.0 640.5 L1536.0 639.3 L1536.0 638.1 L1536.0 637.0 L1536.0 635.8 L1536.0 634.7 L1536.0 633.5 L1536.0 632.3 L1536.0 631.2 L1536.0 630.0 L1536.0 628.9 L1536.0 627.7 L1536.0 626.5 L1536.0 625.4 L1536.0 624.2 L1536.0 623.0 L1536.0 621.9 L1536.0 620.7 L1536.0 619.6 L1536.0 618.4 L1536.0 617.2 L1536.0 616.1 L1536.0 614.9 L1536.0 613.7 L1536.0 612.6 L1536.0 611.4 L1536.0 610.3 L1536.0 609.1 L1536.0 607.9 L1536.0 606.8 L1536.0 605.6 L1536.0 604.4 L1536.0 603.3 L1536.0 602.1 L1536.0 601.0 L1536.0 599.8 L1536.0 598.6 L1536.0 597.5 L1536.0 596.3 L1536.0 595.1 L1536.0 594.0 L1536.0 592.8 L1536.0 591.7 L1536.0 590.5 L1536.0 589.3 L1536.0 588.2 L1536.0 587.0 L1536.0 585.8 L1536.0 584.7 L1536.0 583.5 L1536.0 582.4 L1536.0 581.2 L1536.0 580.0 L1536.0 578.9 L1536.0 577.7 L1536.0 576.5 L1536.0 575.4 L1536.0 574.2 L1536.0 573.1 L1536.0 571.9 L1536.0 570.7 L1536.0 569.6 L1536.0 568.4 L1536.0 567.2 L1536.0 566.1 L1536.0 564.9 L1536.0 563.8 L1536.0 562.6 L1536.0 561.4 L1536.0 560.3 L1536.0 559.1 L1536.0 557.9 L1536.0 556.8 L1536.0 555.6 L1536.0 554.5 L1536.0 553.3 L1536.0 552.1 L1536.0 551.0 L1536.0 549.8 L1536.0 548.6 L1536.0 547.5 L1536.0 546.3 L1536.0 545.2 L1536.0 544.0 L1536.0 542.8 L1536.0 541.7 L1536.0 540.5 L1536.0 539.3 L1536.0 538.2 L1536.0 537.0 L1536.0 535.9 L1536.0 534.7 L1536.0 533.5 L1536.0 532.4 L1536.0 531.2 L1536.0 530.0 L1536.0 528.9 L1536.0 527.7 L1536.0 526.6 L1536.0 525.4 L1536.0 524.2 L1536.0 523.1 L1536.0 521.9 L1536.0 520.7 L1536.0 519.6 L1536.0 518.4 L1536.0 517.3 L1536.0 516.1 L1536.0 514.9 L1536.0 513.8 L1536.0 512.6 L1536.0 511.4 L1536.0 510.3 L1536.0 509.1 L1536.0 508.0 L1536.0 506.8 L1536.0 505.7 L1536.0 504.5 L1536.0 503.4 L1536.0 502.2 L1536.0 501.1 L1536.0 499.9 L1536.0 498.8 L1536.0 497.6 L1536.0 496.5 L1536.0 495.3 L1536.0 494.2 L1536.0 493.0 L1536.0 491.9 L1536.0 490.7 L1536.0 489.6 L1536.0 488.5 L1536.0 487.3 L1536.0 486.2 L1536.0 485.0 L1536.0 483.9 L1536.0 482.7 L1536.0 481.6 L1536.0 480.4 L1536.0 479.3 L1536.0 478.1 L1536.0 477.0 L1536.0 475.8 L1536.0 474.7 L1536.0 473.5 L1536.0 472.4 L1536.0 471.3 L1536.0 470.1 L1536.0 469.0 L1536.0 467.8 L1536.0 466.7 L1536.0 465.5 L1536.0 464.4 L1536.0 463.2 L1536.0 462.1 L1536.0 460.9 L1536.0 459.8 L1536.0 458.6 L1536.0 457.5 L1536.0 456.3 L1536.0 455.2 L1536.0 454.1 L1536.0 452.9 L1536.0 451.8 L1536.0 450.6 L1536.0 449.5 L1536.0 448.3 L1536.0 447.2 L1536.0 446.0 L1536.0 444.9 L1536.0 443.7 L1536.0 442.6 L1536.0 441.4 L1536.0 440.3 L1536.0 439.1 L1536.0 438.0 L1536.0 436.9 L1536.0 435.7 L1536.0 434.6 L1536.0 433.4 L1536.0 432.3 L1536.0 431.1 L1536.0 430.0 L1536.0 428.8 L1536.0 427.7 L1536.0 426.5 L1536.0 425.4 L1536.0 424.2 L1536.0 423.1 L1536.0 421.9 L1536.0 420.8 L1536.0 419.7 L1536.0 418.5 L1536.0 417.4 L1536.0 416.2 L1536.0 415.1 L1536.0 413.9 L1536.0 412.8 L1536.0 411.6 L1536.0 410.5 L1536.0 409.3 L1536.0 408.2 L1536.0 407.0 L1536.0 405.9 L1536.0 404.7 L1536.0 403.6 L1536.0 402.5 L1536.0 401.3 L1536.0 400.2 L1536.0 399.0 L1536.0 397.9 L1536.0 396.7 L1536.0 395.6 L1536.0 394.4 L1536.0 393.3 L1536.0 392.1 L1536.0 391.0 L1536.0 389.8 L1536.0 388.7 L1536.0 387.5 L1536.0 386.4 L1536.0 385.3 L1536.0 384.1 L1536.0 383.0 L1536.0 381.8 L1536.0 380.7 L1536.0 379.5 L1536.0 378.4 L1536.0 377.2 L1536.0 376.1 L1536.0 374.9 L1536.0 373.8 L1536.0 372.6 L1536.0 371.5 L1536.0 370.3 L1536.0 369.2 L1536.0 368.1 L1536.0 366.9 L1536.0 365.8 L1536.0 364.6 L1536.0 363.5 L1536.0 362.3 L1536.0 361.2 L1536.0 360.0 L1536.0 358.9 L1536.0 357.7 L1536.0 356.6 L1536.0 355.4 L1536.0 354.3 L1536.0 353.1 L1536.0 352.0 L1536.0 350.9 L1536.0 349.7 L1536.0 348.6 L1536.0 347.4 L1536.0 346.3 L1536.0 345.1 L1536.0 344.0 L1536.0 342.8 L1536.0 341.7 L1536.0 340.5 L1536.0 339.4 L1536.0 338.2 L1536.0 337.1 L1536.0 335.9 L1536.0 334.8 L1536.0 333.7 L1536.0 332.5 L1536.0 331.4 L1536.0 330.2 L1536.0 329.1 L1536.0 327.9 L1536.0 326.8 L1536.0 325.6 L1536.0 324.5 L1536.0 323.3 L1536.0 322.2 L1536.0 321.0 L1536.0 319.9 L1536.0 318.7 L1536.0 317.6 L1536.0 316.5 L1536.0 315.3 L1536.0 314.2 L1536.0 313.0 L1536.0 311.9 L1536.0 310.7 L1536.0 309.6 L1536.0 308.4 L1536.0 307.3 L1536.0 306.1 L1536.0 305.0 L1536.0 303.8 L1536.0 302.7 L1536.0 301.5 L1536.0 300.4 M1536.0 716.0 L1535.1 714.9 L1534.1 713.8 L1533.2 712.7 L1532.3 711.5 L1531.4 710.4 L1530.5 709.3 L1529.6 708.1 L1528.8 707.0 L1527.9 705.9 L1527.0 704.8 L1526.2 703.6 L1525.4 702.5 L1524.5 701.4 L1523.7 700.2 L1522.9 699.1 L1522.1 697.9 L1521.3 696.8 L1520.5 695.7 L1519.7 694.5 L1519.0 693.4 L1518.2 692.2 L1517.5 691.1 L1516.7 690.0 L1516.0 688.8 L1515.2 687.7 L1514.5 686.5 L1513.8 685.4 L1513.1 684.2 L1512.4 683.1 L1511.7 682.0 L1511.0 680.8 L1510.3 679.7 L1509.7 678.5 L1509.0 677.4 L1508.4 676.2 L1507.7 675.1 L1507.1 673.9 L1506.4 672.8 L1505.8 671.6 L1505.2 670.5 L1504.5 669.3 L1503.9 668.2 L1503.3 667.0 L1502.7 665.8 L1502.1 664.7 L1501.6 663.5 L1501.0 662.4 L1500.4 661.2 L1499.8 660.1 L1499.3 658.9 L1498.7 657.8 L1498.2 656.6 L1497.6 655.4 L1497.1 654.3 L1496.6 653.1 L1496.0 652.0 L1495.5 650.8 L1495.0 649.7 L1494.5 648.5 L1494.0 647.3 L1493.5 646.2 L1493.0 645.0 L1492.5 643.9 L1492.0 642.7 L1491.6 641.5 L1491.1 640.4 L1490.6 639.2 L1490.2 638.0 L1489.7 636.9 L1489.3 635.7 L1488.8 634.6 L1488.4 633.4 L1488.0 632.2 L1487.5 631.1 L1487.1 629.9 L1486.7 628.7 L1486.3 627.6 L1485.9 626.4 L1485.5 625.2 L1485.1 624.1 L1484.7 622.9 L1484.3 621.7 L1483.9 620.6 L1483.5 619.4 L1483.1 618.2 L1482.8 617.1 L1482.4 615.9 L1482.0 614.7 L1481.7 613.6 L1481.3 612.4 L1481.0 611.2 L1480.6 610.1 L1480.3 608.9 L1480.0 607.7 L1479.6 606.6 L1479.3 605.4 L1479.0 604.2 L1478.7 603.1 L1478.4 601.9 L1478.1 600.7 L1477.8 599.5 L1477.5 598.4 L1477.2 597.2 L1476.9 596.0 L1476.6 594.9 L1476.3 593.7 L1476.0 592.5 L1475.8 591.3 L1475.5 590.2 L1475.2 589.0 L1475.0 587.8 L1474.7 586.7 L1474.5 585.5 L1474.2 584.3 L1474.0 583.1 L1473.7 582.0 L1473.5 580.8 L1473.3 579.6 L1473.0 578.5 L1472.8 577.3 L1472.6 576.1 L1472.4 574.9 L1472.2 573.8 L1471.9 572.6 L1471.7 571.4 L1471.5 570.2 L1471.3 569.1 L1471.2 567.9 L1471.0 566.7 L1470.8 565.6 L1470.6 564.4 L1470.4 563.2 L1470.2 562.0 L1470.1 560.9 L1469.9 559.7 L1469.7 558.5 L1469.6 557.3 L1469.4 556.2 L1469.3 555.0 L1469.1 553.8 L1469.0 552.6 L1468.9 551.5 L1468.7 550.3 L1468.6 549.1 L1468.5 547.9 L1468.3 546.8 L1468.2 545.6 L1468.1 544.4 L1468.0 543.2 L1467.9 542.1 L1467.8 540.9 L1467.7 539.7 L1467.6 538.5 L1467.5 537.4 L1467.4 536.2 L1467.3 535.0 L1467.2 533.8 L1467.1 532.7 L1467.0 531.5 L1467.0 530.3 L1466.9 529.1 L1466.8 528.0 L1466.8 526.8 L1466.7 525.6 L1466.7 524.4 L1466.6 523.3 L1466.6 522.1 L1466.5 520.9 L1466.5 519.7 L1466.4 518.6 L1466.4 517.4 L1466.4 516.2 L1466.3 515.0 L1466.3 513.9 L1466.3 512.7 L1466.3 511.5 L1466.3 510.3 L1466.3 509.2 L1466.3 508.0 L1466.3 506.8 L1466.3 505.6 L1466.3 504.5 L1466.3 503.3 L1466.3 502.2 L1466.3 501.0 L1466.3 499.8 L1466.3 498.7 L1466.4 497.5 L1466.4 496.4 L1466.4 495.2 L1466.5 494.0 L1466.5 492.9 L1466.6 491.7 L1466.6 490.6 L1466.7 489.4 L1466.7 488.2 L1466.8 487.1 L1466.8 485.9 L1466.9 484.8 L1467.0 483.6 L1467.0 482.4 L1467.1 481.3 L1467.2 480.1 L1467.3 479.0 L1467.4 477.8 L1467.5 476.6 L1467.6 475.5 L1467.7 474.3 L1467.8 473.2 L1467.9 472.0 L1468.0 470.9 L1468.1 469.7 L1468.2 468.5 L1468.3 467.4 L1468.5 466.2 L1468.6 465.1 L1468.7 463.9 L1468.9 462.7 L1469.0 461.6 L1469.1 460.4 L1469.3 459.3 L1469.4 458.1 L1469.6 456.9 L1469.7 455.8 L1469.9 454.6 L1470.1 453.5 L1470.2 452.3 L1470.4 451.2 L1470.6 450.0 L1470.8 448.8 L1471.0 447.7 L1471.2 446.5 L1471.3 445.4 L1471.5 444.2 L1471.7 443.1 L1471.9 441.9 L1472.2 440.7 L1472.4 439.6 L1472.6 438.4 L1472.8 437.3 L1473.0 436.1 L1473.3 435.0 L1473.5 433.8 L1473.7 432.6 L1474.0 431.5 L1474.2 430.3 L1474.5 429.2 L1474.7 428.0 L1475.0 426.9 L1475.2 425.7 L1475.5 424.6 L1475.8 423.4 L1476.0 422.2 L1476.3 421.1 L1476.6 419.9 L1476.9 418.8 L1477.2 417.6 L1477.5 416.5 L1477.8 415.3 L1478.1 414.2 L1478.4 413.0 L1478.7 411.9 L1479.0 410.7 L1479.3 409.5 L1479.6 408.4 L1480.0 407.2 L1480.3 406.1 L1480.6 404.9 L1481.0 403.8 L1481.3 402.6 L1481.7 401.5 L1482.0 400.3 L1482.4 399.2 L1482.8 398.0 L1483.1 396.9 L1483.5 395.7 L1483.9 394.6 L1484.3 393.4 L1484.7 392.3 L1485.1 391.1 L1485.5 390.0 L1485.9 388.8 L1486.3 387.7 L1486.7 386.5 L1487.1 385.4 L1487.5 384.2 L1488.0 383.1 L1488.4 381.9 L1488.8 380.8 L1489.3 379.6 L1489.7 378.5 L1490.2 377.3 L1490.6 376.2 L1491.1 375.0 L1491.6 373.9 L1492.0 372.7 L1492.5 371.6 L1493.0 370.5 L1493.5 369.3 L1494.0 368.2 L1494.5 367.0 L1495.0 365.9 L1495.5 364.7 L1496.0 363.6 L1496.6 362.4 L1497.1 361.3 L1497.6 360.2 L1498.2 359.0 L1498.7 357.9 L1499.3 356.7 L1499.8 355.6 L1500.4 354.5 L1501.0 353.3 L1501.6 352.2 L1502.1 351.0 L1502.7 349.9 L1503.3 348.8 L1503.9 347.6 L1504.5 346.5 L1505.2 345.4 L1505.8 344.2 L1506.4 343.1 L1507.1 341.9 L1507.7 340.8 L1508.4 339.7 L1509.0 338.5 L1509.7 337.4 L1510.3 336.3 L1511.0 335.1 L1511.7 334.0 L1512.4 332.9 L1513.1 331.8 L1513.8 330.6 L1514.5 329.5 L1515.2 328.4 L1516.0 327.2 L1516.7 326.1 L1517.5 325.0 L1518.2 323.9 L1519.0 322.7 L1519.7 321.6 L1520.5 320.5 L1521.3 319.4 L1522.1 318.2 L1522.9 317.1 L1523.7 316.0 L1524.5 314.9 L1525.4 313.8 L1526.2 312.6 L1527.0 311.5 L1527.9 310.4 L1528.8 309.3 L1529.6 308.2 L1530.5 307.1 L1531.4 305.9 L1532.3 304.8 L1533.2 303.7 L1534.1 302.6 L1535.1 301.5 L1536.0 300.4 M1536.0 716.0 L1534.2 715.0 L1532.4 714.0 L1530.6 713.0 L1528.8 712.0 L1527.1 710.9 L1525.4 709.9 L1523.6 708.9 L1521.9 707.9 L1520.3 706.8 L1518.6 705.8 L1516.9 704.7 L1515.3 703.7 L1513.7 702.6 L1512.1 701.6 L1510.5 700.5 L1508.9 699.5 L1507.4 698.4 L1505.8 697.3 L1504.3 696.3 L1502.8 695.2 L1501.3 694.1 L1499.8 693.0 L1498.3 692.0 L1496.9 690.9 L1495.4 689.8 L1494.0 688.7 L1492.6 687.6 L1491.2 686.5 L1489.8 685.4 L1488.4 684.3 L1487.1 683.2 L1485.7 682.1 L1484.4 681.0 L1483.1 679.9 L1481.8 678.8 L1480.5 677.7 L1479.2 676.6 L1477.9 675.5 L1476.7 674.4 L1475.4 673.2 L1474.2 672.1 L1473.0 671.0 L1471.8 669.9 L1470.6 668.7 L1469.4 667.6 L1468.2 666.5 L1467.1 665.4 L1465.9 664.2 L1464.8 663.1 L1463.6 662.0 L1462.5 660.8 L1461.4 659.7 L1460.3 658.5 L1459.3 657.4 L1458.2 656.3 L1457.1 655.1 L1456.1 654.0 L1455.1 652.8 L1454.0 651.7 L1453.0 650.5 L1452.0 649.4 L1451.0 648.2 L1450.1 647.0 L1449.1 645.9 L1448.1 644.7 L1447.2 643.6 L1446.2 642.4 L1445.3 641.3 L1444.4 640.1 L1443.5 638.9 L1442.6 637.8 L1441.7 636.6 L1440.8 635.4 L1440.0 634.3 L1439.1 633.1 L1438.2 631.9 L1437.4 630.7 L1436.6 629.6 L1435.8 628.4 L1435.0 627.2 L1434.2 626.0 L1433.4 624.9 L1432.6 623.7 L1431.8 622.5 L1431.0 621.3 L1430.3 620.2 L1429.6 619.0 L1428.8 617.8 L1428.1 616.6 L1427.4 615.4 L1426.7 614.2 L1426.0 613.1 L1425.3 611.9 L1424.6 610.7 L1423.9 609.5 L1423.3 608.3 L1422.6 607.1 L1422.0 605.9 L1421.3 604.7 L1420.7 603.5 L1420.1 602.3 L1419.5 601.2 L1418.9 600.0 L1418.3 598.8 L1417.7 597.6 L1417.1 596.4 L1416.6 595.2 L1416.0 594.0 L1415.5 592.8 L1414.9 591.6 L1414.4 590.4 L1413.9 589.2 L1413.3 588.0 L1412.8 586.8 L1412.3 585.6 L1411.8 584.4 L1411.4 583.2 L1410.9 582.0 L1410.4 580.8 L1410.0 579.6 L1409.5 578.4 L1409.1 577.2 L1408.6 576.0 L1408.2 574.8 L1407.8 573.5 L1407.4 572.3 L1407.0 571.1 L1406.6 569.9 L1406.2 568.7 L1405.8 567.5 L1405.4 566.3 L1405.1 565.1 L1404.7 563.9 L1404.4 562.7 L1404.0 561.5 L1403.7 560.3 L1403.4 559.0 L1403.0 557.8 L1402.7 556.6 L1402.4 555.4 L1402.1 554.2 L1401.9 553.0 L1401.6 551.8 L1401.3 550.6 L1401.0 549.4 L1400.8 548.1 L1400.5 546.9 L1400.3 545.7 L1400.1 544.5 L1399.8 543.3 L1399.6 542.1 L1399.4 540.9 L1399.2 539.6 L1399.0 538.4 L1398.8 537.2 L1398.6 536.0 L1398.5 534.8 L1398.3 533.6 L1398.1 532.4 L1398.0 531.1 L1397.8 529.9 L1397.7 528.7 L1397.6 527.5 L1397.5 526.3 L1397.3 525.1 L1397.2 523.8 L1397.1 522.6 L1397.0 521.4 L1397.0 520.2 L1396.9 519.0 L1396.8 517.8 L1396.7 516.5 L1396.7 515.3 L1396.6 514.1 L1396.6 512.9 L1396.6 511.7 L1396.5 510.5 L1396.5 509.2 L1396.5 508.0 L1396.5 506.8 L1396.5 505.6 L1396.5 504.4 L1396.5 503.2 L1396.6 502.0 L1396.6 500.8 L1396.6 499.6 L1396.7 498.4 L1396.7 497.2 L1396.8 496.0 L1396.9 494.8 L1397.0 493.6 L1397.0 492.4 L1397.1 491.2 L1397.2 490.0 L1397.3 488.8 L1397.5 487.6 L1397.6 486.4 L1397.7 485.2 L1397.8 484.0 L1398.0 482.8 L1398.1 481.6 L1398.3 480.4 L1398.5 479.2 L1398.6 478.0 L1398.8 476.8 L1399.0 475.6 L1399.2 474.4 L1399.4 473.2 L1399.6 472.0 L1399.8 470.8 L1400.1 469.6 L1400.3 468.4 L1400.5 467.2 L1400.8 466.0 L1401.0 464.8 L1401.3 463.6 L1401.6 462.4 L1401.9 461.2 L1402.1 460.0 L1402.4 458.8 L1402.7 457.6 L1403.0 456.5 L1403.4 455.3 L1403.7 454.1 L1404.0 452.9 L1404.4 451.7 L1404.7 450.5 L1405.1 449.3 L1405.4 448.1 L1405.8 446.9 L1406.2 445.7 L1406.6 444.5 L1407.0 443.3 L1407.4 442.1 L1407.8 441.0 L1408.2 439.8 L1408.6 438.6 L1409.1 437.4 L1409.5 436.2 L1410.0 435.0 L1410.4 433.8 L1410.9 432.6 L1411.4 431.5 L1411.8 430.3 L1412.3 429.1 L1412.8 427.9 L1413.3 426.7 L1413.9 425.5 L1414.4 424.3 L1414.9 423.2 L1415.5 422.0 L1416.0 420.8 L1416.6 419.6 L1417.1 418.4 L1417.7 417.3 L1418.3 416.1 L1418.9 414.9 L1419.5 413.7 L1420.1 412.5 L1420.7 411.4 L1421.3 410.2 L1422.0 409.0 L1422.6 407.8 L1423.3 406.7 L1423.9 405.5 L1424.6 404.3 L1425.3 403.2 L1426.0 402.0 L1426.7 400.8 L1427.4 399.6 L1428.1 398.5 L1428.8 397.3 L1429.6 396.1 L1430.3 395.0 L1431.0 393.8 L1431.8 392.6 L1432.6 391.5 L1433.4 390.3 L1434.2 389.2 L1435.0 388.0 L1435.8 386.8 L1436.6 385.7 L1437.4 384.5 L1438.2 383.4 L1439.1 382.2 L1440.0 381.1 L1440.8 379.9 L1441.7 378.8 L1442.6 377.6 L1443.5 376.5 L1444.4 375.3 L1445.3 374.2 L1446.2 373.0 L1447.2 371.9 L1448.1 370.7 L1449.1 369.6 L1450.1 368.4 L1451.0 367.3 L1452.0 366.2 L1453.0 365.0 L1454.0 363.9 L1455.1 362.8 L1456.1 361.6 L1457.1 360.5 L1458.2 359.4 L1459.3 358.2 L1460.3 357.1 L1461.4 356.0 L1462.5 354.9 L1463.6 353.7 L1464.8 352.6 L1465.9 351.5 L1467.1 350.4 L1468.2 349.3 L1469.4 348.2 L1470.6 347.0 L1471.8 345.9 L1473.0 344.8 L1474.2 343.7 L1475.4 342.6 L1476.7 341.5 L1477.9 340.4 L1479.2 339.3 L1480.5 338.2 L1481.8 337.1 L1483.1 336.0 L1484.4 334.9 L1485.7 333.8 L1487.1 332.8 L1488.4 331.7 L1489.8 330.6 L1491.2 329.5 L1492.6 328.4 L1494.0 327.4 L1495.4 326.3 L1496.9 325.2 L1498.3 324.1 L1499.8 323.1 L1501.3 322.0 L1502.8 321.0 L1504.3 319.9 L1505.8 318.8 L1507.4 317.8 L1508.9 316.7 L1510.5 315.7 L1512.1 314.7 L1513.7 313.6 L1515.3 312.6 L1516.9 311.5 L1518.6 310.5 L1520.3 309.5 L1521.9 308.5 L1523.6 307.4 L1525.4 306.4 L1527.1 305.4 L1528.8 304.4 L1530.6 303.4 L1532.4 302.4 L1534.2 301.4 L1536.0 300.4 M1536.0 716.0 L1533.4 715.2 L1530.9 714.4 L1528.3 713.5 L1525.8 712.7 L1523.3 711.8 L1520.9 711.0 L1518.4 710.1 L1516.0 709.2 L1513.6 708.3 L1511.2 707.4 L1508.8 706.5 L1506.4 705.6 L1504.1 704.7 L1501.8 703.8 L1499.5 702.9 L1497.2 701.9 L1495.0 701.0 L1492.7 700.1 L1490.5 699.1 L1488.3 698.2 L1486.1 697.2 L1483.9 696.2 L1481.8 695.2 L1479.6 694.3 L1477.5 693.3 L1475.4 692.3 L1473.4 691.3 L1471.3 690.3 L1469.3 689.3 L1467.2 688.3 L1465.2 687.3 L1463.2 686.2 L1461.3 685.2 L1459.3 684.2 L1457.4 683.2 L1455.4 682.1 L1453.5 681.1 L1451.6 680.0 L1449.8 679.0 L1447.9 677.9 L1446.1 676.9 L1444.3 675.8 L1442.5 674.7 L1440.7 673.6 L1438.9 672.6 L1437.1 671.5 L1435.4 670.4 L1433.7 669.3 L1432.0 668.2 L1430.3 667.1 L1428.6 666.0 L1426.9 664.9 L1425.3 663.8 L1423.7 662.7 L1422.1 661.6 L1420.5 660.5 L1418.9 659.3 L1417.3 658.2 L1415.8 657.1 L1414.2 655.9 L1412.7 654.8 L1411.2 653.7 L1409.7 652.5 L1408.2 651.4 L1406.8 650.2 L1405.3 649.1 L1403.9 647.9 L1402.5 646.8 L1401.1 645.6 L1399.7 644.5 L1398.3 643.3 L1397.0 642.1 L1395.6 641.0 L1394.3 639.8 L1393.0 638.6 L1391.7 637.4 L1390.4 636.2 L1389.1 635.1 L1387.9 633.9 L1386.6 632.7 L1385.4 631.5 L1384.2 630.3 L1383.0 629.1 L1381.8 627.9 L1380.6 626.7 L1379.4 625.5 L1378.3 624.3 L1377.2 623.1 L1376.0 621.9 L1374.9 620.7 L1373.8 619.5 L1372.8 618.3 L1371.7 617.0 L1370.6 615.8 L1369.6 614.6 L1368.6 613.4 L1367.6 612.2 L1366.6 610.9 L1365.6 609.7 L1364.6 608.5 L1363.7 607.3 L1362.7 606.0 L1361.8 604.8 L1360.9 603.6 L1359.9 602.3 L1359.0 601.1 L1358.2 599.8 L1357.3 598.6 L1356.4 597.4 L1355.6 596.1 L1354.8 594.9 L1354.0 593.6 L1353.1 592.4 L1352.4 591.1 L1351.6 589.9 L1350.8 588.6 L1350.1 587.4 L1349.3 586.1 L1348.6 584.9 L1347.9 583.6 L1347.2 582.3 L1346.5 581.1 L1345.8 579.8 L1345.1 578.6 L1344.5 577.3 L1343.8 576.0 L1343.2 574.8 L1342.6 573.5 L1342.0 572.2 L1341.4 571.0 L1340.8 569.7 L1340.2 568.4 L1339.7 567.2 L1339.1 565.9 L1338.6 564.6 L1338.1 563.4 L1337.5 562.1 L1337.0 560.8 L1336.6 559.5 L1336.1 558.3 L1335.6 557.0 L1335.2 555.7 L1334.7 554.4 L1334.3 553.1 L1333.9 551.9 L1333.5 550.6 L1333.1 549.3 L1332.7 548.0 L1332.4 546.7 L1332.0 545.5 L1331.7 544.2 L1331.3 542.9 L1331.0 541.6 L1330.7 540.3 L1330.4 539.0 L1330.1 537.7 L1329.8 536.5 L1329.6 535.2 L1329.3 533.9 L1329.1 532.6 L1328.9 531.3 L1328.6 530.0 L1328.4 528.7 L1328.3 527.4 L1328.1 526.2 L1327.9 524.9 L1327.7 523.6 L1327.6 522.3 L1327.5 521.0 L1327.3 519.7 L1327.2 518.4 L1327.1 517.1 L1327.1 515.8 L1327.0 514.5 L1326.9 513.3 L1326.9 512.0 L1326.8 510.7 L1326.8 509.4 L1326.8 508.1 L1326.8 506.8 L1326.8 505.5 L1326.8 504.3 L1326.8 503.0 L1326.9 501.7 L1326.9 500.4 L1327.0 499.2 L1327.1 497.9 L1327.1 496.6 L1327.2 495.3 L1327.3 494.1 L1327.5 492.8 L1327.6 491.5 L1327.7 490.2 L1327.9 489.0 L1328.1 487.7 L1328.3 486.4 L1328.4 485.2 L1328.6 483.9 L1328.9 482.6 L1329.1 481.4 L1329.3 480.1 L1329.6 478.8 L1329.8 477.5 L1330.1 476.3 L1330.4 475.0 L1330.7 473.7 L1331.0 472.5 L1331.3 471.2 L1331.7 469.9 L1332.0 468.7 L1332.4 467.4 L1332.7 466.1 L1333.1 464.9 L1333.5 463.6 L1333.9 462.3 L1334.3 461.1 L1334.7 459.8 L1335.2 458.6 L1335.6 457.3 L1336.1 456.0 L1336.6 454.8 L1337.0 453.5 L1337.5 452.3 L1338.1 451.0 L1338.6 449.8 L1339.1 448.5 L1339.7 447.2 L1340.2 446.0 L1340.8 444.7 L1341.4 443.5 L1342.0 442.2 L1342.6 441.0 L1343.2 439.7 L1343.8 438.5 L1344.5 437.2 L1345.1 436.0 L1345.8 434.8 L1346.5 433.5 L1347.2 432.3 L1347.9 431.0 L1348.6 429.8 L1349.3 428.6 L1350.1 427.3 L1350.8 426.1 L1351.6 424.8 L1352.4 423.6 L1353.1 422.4 L1354.0 421.1 L1354.8 419.9 L1355.6 418.7 L1356.4 417.5 L1357.3 416.2 L1358.2 415.0 L1359.0 413.8 L1359.9 412.6 L1360.9 411.3 L1361.8 410.1 L1362.7 408.9 L1363.7 407.7 L1364.6 406.5 L1365.6 405.3 L1366.6 404.1 L1367.6 402.9 L1368.6 401.6 L1369.6 400.4 L1370.6 399.2 L1371.7 398.0 L1372.8 396.8 L1373.8 395.6 L1374.9 394.4 L1376.0 393.3 L1377.2 392.1 L1378.3 390.9 L1379.4 389.7 L1380.6 388.5 L1381.8 387.3 L1383.0 386.1 L1384.2 385.0 L1385.4 383.8 L1386.6 382.6 L1387.9 381.4 L1389.1 380.3 L1390.4 379.1 L1391.7 377.9 L1393.0 376.8 L1394.3 375.6 L1395.6 374.5 L1397.0 373.3 L1398.3 372.2 L1399.7 371.0 L1401.1 369.9 L1402.5 368.7 L1403.9 367.6 L1405.3 366.4 L1406.8 365.3 L1408.2 364.2 L1409.7 363.0 L1411.2 361.9 L1412.7 360.8 L1414.2 359.7 L1415.8 358.6 L1417.3 357.4 L1418.9 356.3 L1420.5 355.2 L1422.1 354.1 L1423.7 353.0 L1425.3 351.9 L1426.9 350.8 L1428.6 349.7 L1430.3 348.6 L1432.0 347.6 L1433.7 346.5 L1435.4 345.4 L1437.1 344.3 L1438.9 343.3 L1440.7 342.2 L1442.5 341.1 L1444.3 340.1 L1446.1 339.0 L1447.9 338.0 L1449.8 337.0 L1451.6 335.9 L1453.5 334.9 L1455.4 333.8 L1457.4 332.8 L1459.3 331.8 L1461.3 330.8 L1463.2 329.8 L1465.2 328.8 L1467.2 327.8 L1469.3 326.8 L1471.3 325.8 L1473.4 324.8 L1475.4 323.8 L1477.5 322.8 L1479.6 321.9 L1481.8 320.9 L1483.9 319.9 L1486.1 319.0 L1488.3 318.0 L1490.5 317.1 L1492.7 316.2 L1495.0 315.2 L1497.2 314.3 L1499.5 313.4 L1501.8 312.5 L1504.1 311.6 L1506.4 310.7 L1508.8 309.8 L1511.2 308.9 L1513.6 308.0 L1516.0 307.1 L1518.4 306.3 L1520.9 305.4 L1523.3 304.5 L1525.8 303.7 L1528.3 302.9 L1530.9 302.0 L1533.4 301.2 L1536.0 300.4 M1536.0 716.0 L1532.8 715.4 L1529.7 714.8 L1526.6 714.2 L1523.5 713.6 L1520.4 713.0 L1517.3 712.3 L1514.3 711.7 L1511.3 711.0 L1508.3 710.3 L1505.3 709.6 L1502.3 708.9 L1499.3 708.2 L1496.4 707.5 L1493.5 706.8 L1490.6 706.0 L1487.7 705.3 L1484.8 704.5 L1482.0 703.8 L1479.1 703.0 L1476.3 702.2 L1473.5 701.4 L1470.8 700.6 L1468.0 699.8 L1465.3 698.9 L1462.5 698.1 L1459.8 697.2 L1457.2 696.4 L1454.5 695.5 L1451.9 694.7 L1449.2 693.8 L1446.6 692.9 L1444.0 692.0 L1441.5 691.1 L1438.9 690.2 L1436.4 689.2 L1433.8 688.3 L1431.3 687.4 L1428.9 686.4 L1426.4 685.5 L1424.0 684.5 L1421.5 683.6 L1419.1 682.6 L1416.7 681.6 L1414.4 680.6 L1412.0 679.6 L1409.7 678.6 L1407.4 677.6 L1405.1 676.6 L1402.8 675.5 L1400.5 674.5 L1398.3 673.5 L1396.1 672.4 L1393.9 671.4 L1391.7 670.3 L1389.5 669.3 L1387.4 668.2 L1385.2 667.1 L1383.1 666.0 L1381.0 664.9 L1379.0 663.8 L1376.9 662.7 L1374.9 661.6 L1372.8 660.5 L1370.8 659.4 L1368.9 658.3 L1366.9 657.1 L1364.9 656.0 L1363.0 654.9 L1361.1 653.7 L1359.2 652.6 L1357.3 651.4 L1355.5 650.3 L1353.6 649.1 L1351.8 647.9 L1350.0 646.8 L1348.2 645.6 L1346.4 644.4 L1344.7 643.2 L1343.0 642.0 L1341.2 640.8 L1339.5 639.6 L1337.9 638.4 L1336.2 637.2 L1334.6 636.0 L1332.9 634.7 L1331.3 633.5 L1329.7 632.3 L1328.2 631.1 L1326.6 629.8 L1325.1 628.6 L1323.6 627.3 L1322.1 626.1 L1320.6 624.8 L1319.1 623.6 L1317.7 622.3 L1316.2 621.1 L1314.8 619.8 L1313.4 618.5 L1312.0 617.2 L1310.7 616.0 L1309.3 614.7 L1308.0 613.4 L1306.7 612.1 L1305.4 610.8 L1304.1 609.5 L1302.9 608.2 L1301.6 606.9 L1300.4 605.6 L1299.2 604.3 L1298.0 603.0 L1296.8 601.7 L1295.7 600.4 L1294.6 599.1 L1293.4 597.7 L1292.3 596.4 L1291.3 595.1 L1290.2 593.8 L1289.1 592.4 L1288.1 591.1 L1287.1 589.8 L1286.1 588.4 L1285.1 587.1 L1284.1 585.8 L1283.2 584.4 L1282.3 583.1 L1281.4 581.7 L1280.5 580.4 L1279.6 579.0 L1278.7 577.7 L1277.9 576.3 L1277.0 574.9 L1276.2 573.6 L1275.4 572.2 L1274.7 570.8 L1273.9 569.5 L1273.2 568.1 L1272.4 566.7 L1271.7 565.4 L1271.0 564.0 L1270.3 562.6 L1269.7 561.2 L1269.0 559.9 L1268.4 558.5 L1267.8 557.1 L1267.2 555.7 L1266.6 554.3 L1266.1 553.0 L1265.5 551.6 L1265.0 550.2 L1264.5 548.8 L1264.0 547.4 L1263.5 546.0 L1263.1 544.6 L1262.6 543.2 L1262.2 541.8 L1261.8 540.4 L1261.4 539.1 L1261.0 537.7 L1260.7 536.3 L1260.4 534.9 L1260.0 533.5 L1259.7 532.1 L1259.4 530.7 L1259.2 529.3 L1258.9 527.9 L1258.7 526.5 L1258.4 525.1 L1258.2 523.7 L1258.0 522.3 L1257.9 520.8 L1257.7 519.4 L1257.6 518.0 L1257.4 516.6 L1257.3 515.2 L1257.2 513.8 L1257.2 512.4 L1257.1 511.0 L1257.1 509.6 L1257.0 508.2 L1257.0 506.8 L1257.0 505.4 L1257.1 504.0 L1257.1 502.6 L1257.2 501.3 L1257.2 499.9 L1257.3 498.5 L1257.4 497.1 L1257.6 495.7 L1257.7 494.3 L1257.9 492.9 L1258.0 491.6 L1258.2 490.2 L1258.4 488.8 L1258.7 487.4 L1258.9 486.0 L1259.2 484.6 L1259.4 483.3 L1259.7 481.9 L1260.0 480.5 L1260.4 479.1 L1260.7 477.7 L1261.0 476.4 L1261.4 475.0 L1261.8 473.6 L1262.2 472.2 L1262.6 470.9 L1263.1 469.5 L1263.5 468.1 L1264.0 466.7 L1264.5 465.4 L1265.0 464.0 L1265.5 462.6 L1266.1 461.3 L1266.6 459.9 L1267.2 458.5 L1267.8 457.2 L1268.4 455.8 L1269.0 454.4 L1269.7 453.1 L1270.3 451.7 L1271.0 450.4 L1271.7 449.0 L1272.4 447.7 L1273.2 446.3 L1273.9 445.0 L1274.7 443.6 L1275.4 442.3 L1276.2 440.9 L1277.0 439.6 L1277.9 438.2 L1278.7 436.9 L1279.6 435.6 L1280.5 434.2 L1281.4 432.9 L1282.3 431.6 L1283.2 430.2 L1284.1 428.9 L1285.1 427.6 L1286.1 426.3 L1287.1 424.9 L1288.1 423.6 L1289.1 422.3 L1290.2 421.0 L1291.3 419.7 L1292.3 418.4 L1293.4 417.1 L1294.6 415.8 L1295.7 414.5 L1296.8 413.2 L1298.0 411.9 L1299.2 410.6 L1300.4 409.3 L1301.6 408.0 L1302.9 406.7 L1304.1 405.5 L1305.4 404.2 L1306.7 402.9 L1308.0 401.6 L1309.3 400.4 L1310.7 399.1 L1312.0 397.9 L1313.4 396.6 L1314.8 395.3 L1316.2 394.1 L1317.7 392.8 L1319.1 391.6 L1320.6 390.4 L1322.1 389.1 L1323.6 387.9 L1325.1 386.7 L1326.6 385.4 L1328.2 384.2 L1329.7 383.0 L1331.3 381.8 L1332.9 380.6 L1334.6 379.4 L1336.2 378.2 L1337.9 377.0 L1339.5 375.8 L1341.2 374.6 L1343.0 373.4 L1344.7 372.2 L1346.4 371.1 L1348.2 369.9 L1350.0 368.7 L1351.8 367.6 L1353.6 366.4 L1355.5 365.3 L1357.3 364.1 L1359.2 363.0 L1361.1 361.9 L1363.0 360.7 L1364.9 359.6 L1366.9 358.5 L1368.9 357.4 L1370.8 356.3 L1372.8 355.2 L1374.9 354.1 L1376.9 353.0 L1379.0 351.9 L1381.0 350.8 L1383.1 349.7 L1385.2 348.7 L1387.4 347.6 L1389.5 346.5 L1391.7 345.5 L1393.9 344.4 L1396.1 343.4 L1398.3 342.4 L1400.5 341.4 L1402.8 340.3 L1405.1 339.3 L1407.4 338.3 L1409.7 337.3 L1412.0 336.3 L1414.4 335.3 L1416.7 334.4 L1419.1 333.4 L1421.5 332.4 L1424.0 331.5 L1426.4 330.5 L1428.9 329.6 L1431.3 328.7 L1433.8 327.7 L1436.4 326.8 L1438.9 325.9 L1441.5 325.0 L1444.0 324.1 L1446.6 323.2 L1449.2 322.4 L1451.9 321.5 L1454.5 320.6 L1457.2 319.8 L1459.8 318.9 L1462.5 318.1 L1465.3 317.3 L1468.0 316.4 L1470.8 315.6 L1473.5 314.8 L1476.3 314.1 L1479.1 313.3 L1482.0 312.5 L1484.8 311.7 L1487.7 311.0 L1490.6 310.3 L1493.5 309.5 L1496.4 308.8 L1499.3 308.1 L1502.3 307.4 L1505.3 306.7 L1508.3 306.0 L1511.3 305.4 L1514.3 304.7 L1517.3 304.0 L1520.4 303.4 L1523.5 302.8 L1526.6 302.2 L1529.7 301.6 L1532.8 301.0 L1536.0 300.4 M1536.0 716.0 L1532.5 715.7 L1529.0 715.4 L1525.5 715.1 L1522.0 714.7 L1518.5 714.3 L1515.0 714.0 L1511.6 713.6 L1508.1 713.2 L1504.7 712.7 L1501.3 712.3 L1497.9 711.8 L1494.5 711.4 L1491.1 710.9 L1487.7 710.4 L1484.3 709.9 L1481.0 709.4 L1477.7 708.8 L1474.3 708.3 L1471.0 707.7 L1467.8 707.2 L1464.5 706.6 L1461.2 706.0 L1458.0 705.4 L1454.7 704.7 L1451.5 704.1 L1448.3 703.4 L1445.1 702.8 L1441.9 702.1 L1438.8 701.4 L1435.6 700.7 L1432.5 700.0 L1429.4 699.3 L1426.3 698.5 L1423.2 697.8 L1420.1 697.0 L1417.1 696.3 L1414.0 695.5 L1411.0 694.7 L1408.0 693.9 L1405.0 693.0 L1402.1 692.2 L1399.1 691.4 L1396.2 690.5 L1393.3 689.7 L1390.4 688.8 L1387.5 687.9 L1384.6 687.0 L1381.8 686.1 L1378.9 685.2 L1376.1 684.3 L1373.3 683.3 L1370.6 682.4 L1367.8 681.4 L1365.1 680.5 L1362.3 679.5 L1359.6 678.5 L1357.0 677.5 L1354.3 676.5 L1351.7 675.5 L1349.0 674.4 L1346.4 673.4 L1343.8 672.4 L1341.3 671.3 L1338.7 670.2 L1336.2 669.2 L1333.7 668.1 L1331.2 667.0 L1328.7 665.9 L1326.2 664.8 L1323.8 663.7 L1321.4 662.5 L1319.0 661.4 L1316.6 660.3 L1314.3 659.1 L1311.9 658.0 L1309.6 656.8 L1307.3 655.6 L1305.0 654.4 L1302.8 653.2 L1300.5 652.0 L1298.3 650.8 L1296.1 649.6 L1294.0 648.4 L1291.8 647.2 L1289.7 645.9 L1287.6 644.7 L1285.5 643.5 L1283.4 642.2 L1281.4 640.9 L1279.3 639.7 L1277.3 638.4 L1275.3 637.1 L1273.4 635.8 L1271.4 634.5 L1269.5 633.2 L1267.6 631.9 L1265.7 630.6 L1263.9 629.2 L1262.0 627.9 L1260.2 626.6 L1258.4 625.2 L1256.7 623.9 L1254.9 622.5 L1253.2 621.2 L1251.5 619.8 L1249.8 618.4 L1248.1 617.1 L1246.5 615.7 L1244.9 614.3 L1243.3 612.9 L1241.7 611.5 L1240.1 610.1 L1238.6 608.7 L1237.1 607.3 L1235.6 605.9 L1234.1 604.4 L1232.7 603.0 L1231.3 601.6 L1229.9 600.1 L1228.5 598.7 L1227.2 597.3 L1225.8 595.8 L1224.5 594.3 L1223.2 592.9 L1222.0 591.4 L1220.7 590.0 L1219.5 588.5 L1218.3 587.0 L1217.1 585.5 L1216.0 584.1 L1214.8 582.6 L1213.7 581.1 L1212.6 579.6 L1211.6 578.1 L1210.5 576.6 L1209.5 575.1 L1208.5 573.6 L1207.5 572.1 L1206.6 570.6 L1205.7 569.0 L1204.8 567.5 L1203.9 566.0 L1203.0 564.5 L1202.2 562.9 L1201.4 561.4 L1200.6 559.9 L1199.8 558.3 L1199.1 556.8 L1198.3 555.3 L1197.6 553.7 L1197.0 552.2 L1196.3 550.6 L1195.7 549.1 L1195.1 547.5 L1194.5 546.0 L1193.9 544.4 L1193.4 542.9 L1192.9 541.3 L1192.4 539.8 L1191.9 538.2 L1191.4 536.6 L1191.0 535.1 L1190.6 533.5 L1190.2 532.0 L1189.9 530.4 L1189.5 528.8 L1189.2 527.3 L1188.9 525.7 L1188.7 524.1 L1188.4 522.5 L1188.2 521.0 L1188.0 519.4 L1187.8 517.8 L1187.7 516.2 L1187.6 514.7 L1187.5 513.1 L1187.4 511.5 L1187.3 510.0 L1187.3 508.4 L1187.3 506.8 L1187.3 505.2 L1187.3 503.7 L1187.4 502.1 L1187.5 500.6 L1187.6 499.0 L1187.7 497.5 L1187.8 495.9 L1188.0 494.4 L1188.2 492.8 L1188.4 491.3 L1188.7 489.7 L1188.9 488.2 L1189.2 486.6 L1189.5 485.1 L1189.9 483.5 L1190.2 482.0 L1190.6 480.4 L1191.0 478.9 L1191.4 477.4 L1191.9 475.8 L1192.4 474.3 L1192.9 472.7 L1193.4 471.2 L1193.9 469.7 L1194.5 468.1 L1195.1 466.6 L1195.7 465.1 L1196.3 463.6 L1197.0 462.0 L1197.6 460.5 L1198.3 459.0 L1199.1 457.5 L1199.8 455.9 L1200.6 454.4 L1201.4 452.9 L1202.2 451.4 L1203.0 449.9 L1203.9 448.4 L1204.8 446.9 L1205.7 445.4 L1206.6 443.9 L1207.5 442.4 L1208.5 440.9 L1209.5 439.4 L1210.5 438.0 L1211.6 436.5 L1212.6 435.0 L1213.7 433.5 L1214.8 432.1 L1216.0 430.6 L1217.1 429.1 L1218.3 427.7 L1219.5 426.2 L1220.7 424.8 L1222.0 423.3 L1223.2 421.9 L1224.5 420.4 L1225.8 419.0 L1227.2 417.6 L1228.5 416.1 L1229.9 414.7 L1231.3 413.3 L1232.7 411.9 L1234.1 410.5 L1235.6 409.1 L1237.1 407.7 L1238.6 406.3 L1240.1 404.9 L1241.7 403.5 L1243.3 402.1 L1244.9 400.8 L1246.5 399.4 L1248.1 398.0 L1249.8 396.7 L1251.5 395.3 L1253.2 394.0 L1254.9 392.6 L1256.7 391.3 L1258.4 390.0 L1260.2 388.6 L1262.0 387.3 L1263.9 386.0 L1265.7 384.7 L1267.6 383.4 L1269.5 382.1 L1271.4 380.8 L1273.4 379.5 L1275.3 378.3 L1277.3 377.0 L1279.3 375.7 L1281.4 374.5 L1283.4 373.2 L1285.5 372.0 L1287.6 370.8 L1289.7 369.5 L1291.8 368.3 L1294.0 367.1 L1296.1 365.9 L1298.3 364.7 L1300.5 363.5 L1302.8 362.3 L1305.0 361.2 L1307.3 360.0 L1309.6 358.8 L1311.9 357.7 L1314.3 356.5 L1316.6 355.4 L1319.0 354.3 L1321.4 353.2 L1323.8 352.0 L1326.2 350.9 L1328.7 349.9 L1331.2 348.8 L1333.7 347.7 L1336.2 346.6 L1338.7 345.6 L1341.3 344.5 L1343.8 343.5 L1346.4 342.4 L1349.0 341.4 L1351.7 340.4 L1354.3 339.4 L1357.0 338.4 L1359.6 337.4 L1362.3 336.5 L1365.1 335.5 L1367.8 334.5 L1370.6 333.6 L1373.3 332.7 L1376.1 331.7 L1378.9 330.8 L1381.8 329.9 L1384.6 329.0 L1387.5 328.1 L1390.4 327.3 L1393.3 326.4 L1396.2 325.6 L1399.1 324.7 L1402.1 323.9 L1405.0 323.1 L1408.0 322.3 L1411.0 321.5 L1414.0 320.7 L1417.1 319.9 L1420.1 319.1 L1423.2 318.4 L1426.3 317.7 L1429.4 316.9 L1432.5 316.2 L1435.6 315.5 L1438.8 314.8 L1441.9 314.1 L1445.1 313.5 L1448.3 312.8 L1451.5 312.2 L1454.7 311.5 L1458.0 310.9 L1461.2 310.3 L1464.5 309.7 L1467.8 309.2 L1471.0 308.6 L1474.3 308.0 L1477.7 307.5 L1481.0 307.0 L1484.3 306.5 L1487.7 306.0 L1491.1 305.5 L1494.5 305.0 L1497.9 304.5 L1501.3 304.1 L1504.7 303.7 L1508.1 303.2 L1511.6 302.8 L1515.0 302.4 L1518.5 302.1 L1522.0 301.7 L1525.5 301.4 L1529.0 301.0 L1532.5 300.7 L1536.0 300.4 M1536.0 716.0 L1532.3 716.0 L1528.7 716.0 L1525.0 716.0 L1521.4 715.9 L1517.7 715.8 L1514.1 715.7 L1510.5 715.6 L1506.8 715.5 L1503.2 715.4 L1499.5 715.2 L1495.9 715.1 L1492.3 714.9 L1488.6 714.7 L1485.0 714.5 L1481.4 714.2 L1477.8 714.0 L1474.1 713.7 L1470.5 713.5 L1466.9 713.2 L1463.3 712.9 L1459.7 712.5 L1456.2 712.2 L1452.6 711.8 L1449.0 711.5 L1445.4 711.1 L1441.9 710.7 L1438.3 710.2 L1434.8 709.8 L1431.2 709.4 L1427.7 708.9 L1424.2 708.4 L1420.7 707.9 L1417.2 707.4 L1413.7 706.9 L1410.2 706.3 L1406.7 705.8 L1403.2 705.2 L1399.8 704.6 L1396.3 704.0 L1392.9 703.4 L1389.5 702.8 L1386.0 702.1 L1382.6 701.5 L1379.2 700.8 L1375.9 700.1 L1372.5 699.4 L1369.1 698.7 L1365.8 697.9 L1362.5 697.2 L1359.2 696.4 L1355.8 695.6 L1352.6 694.9 L1349.3 694.0 L1346.0 693.2 L1342.8 692.4 L1339.5 691.5 L1336.3 690.7 L1333.1 689.8 L1329.9 688.9 L1326.8 688.0 L1323.6 687.1 L1320.5 686.1 L1317.4 685.2 L1314.2 684.2 L1311.2 683.3 L1308.1 682.3 L1305.0 681.3 L1302.0 680.3 L1299.0 679.2 L1296.0 678.2 L1293.0 677.1 L1290.0 676.1 L1287.1 675.0 L1284.2 673.9 L1281.3 672.8 L1278.4 671.7 L1275.5 670.5 L1272.7 669.4 L1269.8 668.2 L1267.0 667.1 L1264.2 665.9 L1261.5 664.7 L1258.7 663.5 L1256.0 662.3 L1253.3 661.1 L1250.6 659.8 L1248.0 658.6 L1245.3 657.3 L1242.7 656.0 L1240.1 654.7 L1237.5 653.5 L1235.0 652.1 L1232.5 650.8 L1230.0 649.5 L1227.5 648.2 L1225.0 646.8 L1222.6 645.4 L1220.2 644.1 L1217.8 642.7 L1215.4 641.3 L1213.1 639.9 L1210.8 638.5 L1208.5 637.0 L1206.2 635.6 L1204.0 634.2 L1201.8 632.7 L1199.6 631.3 L1197.5 629.8 L1195.3 628.3 L1193.2 626.8 L1191.1 625.3 L1189.1 623.8 L1187.1 622.3 L1185.0 620.8 L1183.1 619.2 L1181.1 617.7 L1179.2 616.1 L1177.3 614.6 L1175.4 613.0 L1173.6 611.4 L1171.8 609.8 L1170.0 608.2 L1168.3 606.6 L1166.5 605.0 L1164.8 603.4 L1163.1 601.8 L1161.5 600.2 L1159.9 598.5 L1158.3 596.9 L1156.7 595.2 L1155.2 593.6 L1153.7 591.9 L1152.2 590.2 L1150.8 588.6 L1149.4 586.9 L1148.0 585.2 L1146.7 583.5 L1145.3 581.8 L1144.0 580.1 L1142.8 578.4 L1141.5 576.6 L1140.3 574.9 L1139.2 573.2 L1138.0 571.5 L1136.9 569.7 L1135.8 568.0 L1134.8 566.2 L1133.8 564.5 L1132.8 562.7 L1131.8 561.0 L1130.9 559.2 L1130.0 557.4 L1129.1 555.6 L1128.3 553.9 L1127.5 552.1 L1126.7 550.3 L1125.9 548.5 L1125.2 546.7 L1124.5 544.9 L1123.9 543.1 L1123.3 541.3 L1122.7 539.5 L1122.1 537.7 L1121.6 535.9 L1121.1 534.1 L1120.7 532.3 L1120.2 530.5 L1119.8 528.7 L1119.5 526.9 L1119.1 525.0 L1118.8 523.2 L1118.6 521.4 L1118.3 519.6 L1118.1 517.8 L1117.9 515.9 L1117.8 514.1 L1117.7 512.3 L1117.6 510.5 L1117.6 508.6 L1117.5 506.8 L1117.6 505.0 L1117.6 503.2 L1117.7 501.4 L1117.8 499.6 L1117.9 497.8 L1118.1 496.0 L1118.3 494.2 L1118.6 492.4 L1118.8 490.6 L1119.1 488.8 L1119.5 487.0 L1119.8 485.2 L1120.2 483.4 L1120.7 481.6 L1121.1 479.9 L1121.6 478.1 L1122.1 476.3 L1122.7 474.5 L1123.3 472.7 L1123.9 471.0 L1124.5 469.2 L1125.2 467.4 L1125.9 465.6 L1126.7 463.9 L1127.5 462.1 L1128.3 460.4 L1129.1 458.6 L1130.0 456.9 L1130.9 455.1 L1131.8 453.4 L1132.8 451.6 L1133.8 449.9 L1134.8 448.2 L1135.8 446.5 L1136.9 444.7 L1138.0 443.0 L1139.2 441.3 L1140.3 439.6 L1141.5 437.9 L1142.8 436.2 L1144.0 434.5 L1145.3 432.8 L1146.7 431.2 L1148.0 429.5 L1149.4 427.8 L1150.8 426.2 L1152.2 424.5 L1153.7 422.8 L1155.2 421.2 L1156.7 419.6 L1158.3 417.9 L1159.9 416.3 L1161.5 414.7 L1163.1 413.1 L1164.8 411.5 L1166.5 409.9 L1168.3 408.3 L1170.0 406.7 L1171.8 405.2 L1173.6 403.6 L1175.4 402.0 L1177.3 400.5 L1179.2 399.0 L1181.1 397.4 L1183.1 395.9 L1185.0 394.4 L1187.1 392.9 L1189.1 391.4 L1191.1 389.9 L1193.2 388.4 L1195.3 386.9 L1197.5 385.5 L1199.6 384.0 L1201.8 382.6 L1204.0 381.2 L1206.2 379.7 L1208.5 378.3 L1210.8 376.9 L1213.1 375.5 L1215.4 374.1 L1217.8 372.8 L1220.2 371.4 L1222.6 370.0 L1225.0 368.7 L1227.5 367.4 L1230.0 366.0 L1232.5 364.7 L1235.0 363.4 L1237.5 362.1 L1240.1 360.9 L1242.7 359.6 L1245.3 358.3 L1248.0 357.1 L1250.6 355.8 L1253.3 354.6 L1256.0 353.4 L1258.7 352.2 L1261.5 351.0 L1264.2 349.9 L1267.0 348.7 L1269.8 347.5 L1272.7 346.4 L1275.5 345.3 L1278.4 344.2 L1281.3 343.0 L1284.2 342.0 L1287.1 340.9 L1290.0 339.8 L1293.0 338.8 L1296.0 337.7 L1299.0 336.7 L1302.0 335.7 L1305.0 334.7 L1308.1 333.7 L1311.2 332.7 L1314.2 331.8 L1317.4 330.8 L1320.5 329.9 L1323.6 329.0 L1326.8 328.1 L1329.9 327.2 L1333.1 326.3 L1336.3 325.4 L1339.5 324.6 L1342.8 323.7 L1346.0 322.9 L1349.3 322.1 L1352.6 321.3 L1355.8 320.5 L1359.2 319.7 L1362.5 319.0 L1365.8 318.2 L1369.1 317.5 L1372.5 316.8 L1375.9 316.1 L1379.2 315.4 L1382.6 314.8 L1386.0 314.1 L1389.5 313.5 L1392.9 312.8 L1396.3 312.2 L1399.8 311.6 L1403.2 311.1 L1406.7 310.5 L1410.2 310.0 L1413.7 309.4 L1417.2 308.9 L1420.7 308.4 L1424.2 307.9 L1427.7 307.4 L1431.2 307.0 L1434.8 306.5 L1438.3 306.1 L1441.9 305.7 L1445.4 305.3 L1449.0 304.9 L1452.6 304.5 L1456.2 304.2 L1459.7 303.9 L1463.3 303.5 L1466.9 303.2 L1470.5 302.9 L1474.1 302.7 L1477.8 302.4 L1481.4 302.2 L1485.0 301.9 L1488.6 301.7 L1492.3 301.5 L1495.9 301.3 L1499.5 301.2 L1503.2 301.0 L1506.8 300.9 L1510.5 300.8 L1514.1 300.7 L1517.7 300.6 L1521.4 300.5 L1525.0 300.5 L1528.7 300.4 L1532.3 300.4 L1536.0 300.4 M1745.2 688.0 L1744.0 687.0 L1742.8 686.0 L1741.5 685.0 L1740.2 684.1 L1738.8 683.1 L1737.4 682.2 L1736.0 681.3 L1734.5 680.4 L1733.0 679.5 L1731.4 678.6 L1729.8 677.8 L1728.1 676.9 L1726.4 676.1 L1724.7 675.2 L1723.0 674.4 L1721.2 673.6 L1719.4 672.9 L1717.5 672.1 L1715.6 671.3 L1713.7 670.6 L1711.8 669.9 L1709.8 669.1 L1707.8 668.4 L1705.8 667.7 L1703.7 667.1 L1701.6 666.4 L1699.5 665.7 L1697.4 665.1 L1695.2 664.5 L1693.0 663.8 L1690.8 663.2 L1688.6 662.6 L1686.3 662.1 L1684.1 661.5 L1681.8 660.9 L1679.5 660.4 L1677.1 659.8 L1674.8 659.3 L1672.4 658.8 L1670.0 658.3 L1667.6 657.8 L1665.2 657.3 L1662.7 656.9 L1660.3 656.4 L1657.8 655.9 L1655.3 655.5 L1652.8 655.1 L1650.3 654.7 L1647.7 654.3 L1645.2 653.9 L1642.6 653.5 L1640.0 653.1 L1637.4 652.8 L1634.8 652.4 L1632.2 652.1 L1629.6 651.7 L1626.9 651.4 L1624.3 651.1 L1621.6 650.8 L1619.0 650.5 L1616.3 650.2 L1613.6 650.0 L1610.9 649.7 L1608.2 649.4 L1605.5 649.2 L1602.8 649.0 L1600.0 648.8 L1597.3 648.5 L1594.6 648.3 L1591.8 648.2 L1589.1 648.0 L1586.3 647.8 L1583.5 647.6 L1580.8 647.5 L1578.0 647.3 L1575.2 647.2 L1572.4 647.1 L1569.6 647.0 L1566.9 646.8 L1564.1 646.8 L1561.3 646.7 L1558.5 646.6 L1555.7 646.5 L1552.9 646.5 L1550.0 646.4 L1547.2 646.4 L1544.4 646.3 L1541.6 646.3 L1538.8 646.3 L1536.0 646.3 L1533.2 646.3 L1530.4 646.3 L1527.6 646.3 L1524.8 646.4 L1522.0 646.4 L1519.1 646.5 L1516.3 646.5 L1513.5 646.6 L1510.7 646.7 L1507.9 646.8 L1505.1 646.8 L1502.4 647.0 L1499.6 647.1 L1496.8 647.2 L1494.0 647.3 L1491.2 647.5 L1488.5 647.6 L1485.7 647.8 L1482.9 648.0 L1480.2 648.2 L1477.4 648.3 L1474.7 648.5 L1472.0 648.8 L1469.2 649.0 L1466.5 649.2 L1463.8 649.4 L1461.1 649.7 L1458.4 650.0 L1455.7 650.2 L1453.0 650.5 L1450.4 650.8 L1447.7 651.1 L1445.1 651.4 L1442.4 651.7 L1439.8 652.1 L1437.2 652.4 L1434.6 652.8 L1432.0 653.1 L1429.4 653.5 L1426.8 653.9 L1424.3 654.3 L1421.7 654.7 L1419.2 655.1 L1416.7 655.5 L1414.2 655.9 L1411.7 656.4 L1409.3 656.9 L1406.8 657.3 L1404.4 657.8 L1402.0 658.3 L1399.6 658.8 L1397.2 659.3 L1394.9 659.8 L1392.5 660.4 L1390.2 660.9 L1387.9 661.5 L1385.7 662.1 L1383.4 662.6 L1381.2 663.2 L1379.0 663.8 L1376.8 664.5 L1374.6 665.1 L1372.5 665.7 L1370.4 666.4 L1368.3 667.1 L1366.2 667.7 L1364.2 668.4 L1362.2 669.1 L1360.2 669.9 L1358.3 670.6 L1356.4 671.3 L1354.5 672.1 L1352.6 672.9 L1350.8 673.6 L1349.0 674.4 L1347.3 675.2 L1345.6 676.1 L1343.9 676.9 L1342.2 677.8 L1340.6 678.6 L1339.0 679.5 L1337.5 680.4 L1336.0 681.3 L1334.6 682.2 L1333.2 683.1 L1331.8 684.1 L1330.5 685.0 L1329.2 686.0 L1328.0 687.0 L1326.8 688.0 M1898.4 611.4 L1894.9 610.4 L1891.4 609.4 L1887.8 608.5 L1884.2 607.6 L1880.6 606.7 L1877.0 605.8 L1873.4 604.9 L1869.7 604.1 L1866.0 603.3 L1862.3 602.4 L1858.6 601.7 L1854.8 600.9 L1851.1 600.1 L1847.3 599.4 L1843.5 598.7 L1839.7 598.0 L1835.9 597.3 L1832.0 596.6 L1828.2 596.0 L1824.3 595.4 L1820.4 594.7 L1816.5 594.1 L1812.6 593.5 L1808.7 593.0 L1804.7 592.4 L1800.8 591.8 L1796.8 591.3 L1792.9 590.8 L1788.9 590.3 L1784.9 589.8 L1780.9 589.3 L1776.9 588.8 L1772.9 588.3 L1768.9 587.9 L1764.8 587.4 L1760.8 587.0 L1756.8 586.6 L1752.7 586.2 L1748.6 585.8 L1744.6 585.4 L1740.5 585.0 L1736.4 584.7 L1732.3 584.3 L1728.2 583.9 L1724.1 583.6 L1720.0 583.3 L1715.9 583.0 L1711.8 582.6 L1707.7 582.3 L1703.6 582.0 L1699.4 581.8 L1695.3 581.5 L1691.1 581.2 L1687.0 581.0 L1682.9 580.7 L1678.7 580.5 L1674.5 580.2 L1670.4 580.0 L1666.2 579.8 L1662.0 579.6 L1657.9 579.4 L1653.7 579.2 L1649.5 579.0 L1645.3 578.8 L1641.2 578.6 L1637.0 578.5 L1632.8 578.3 L1628.6 578.2 L1624.4 578.0 L1620.2 577.9 L1616.0 577.7 L1611.8 577.6 L1607.6 577.5 L1603.4 577.4 L1599.2 577.3 L1595.0 577.2 L1590.8 577.1 L1586.6 577.0 L1582.4 576.9 L1578.2 576.9 L1573.9 576.8 L1569.7 576.8 L1565.5 576.7 L1561.3 576.7 L1557.1 576.6 L1552.9 576.6 L1548.6 576.6 L1544.4 576.6 L1540.2 576.5 L1536.0 576.5 L1531.8 576.5 L1527.6 576.6 L1523.4 576.6 L1519.1 576.6 L1514.9 576.6 L1510.7 576.7 L1506.5 576.7 L1502.3 576.8 L1498.1 576.8 L1493.8 576.9 L1489.6 576.9 L1485.4 577.0 L1481.2 577.1 L1477.0 577.2 L1472.8 577.3 L1468.6 577.4 L1464.4 577.5 L1460.2 577.6 L1456.0 577.7 L1451.8 577.9 L1447.6 578.0 L1443.4 578.2 L1439.2 578.3 L1435.0 578.5 L1430.8 578.6 L1426.7 578.8 L1422.5 579.0 L1418.3 579.2 L1414.1 579.4 L1410.0 579.6 L1405.8 579.8 L1401.6 580.0 L1397.5 580.2 L1393.3 580.5 L1389.1 580.7 L1385.0 581.0 L1380.9 581.2 L1376.7 581.5 L1372.6 581.8 L1368.4 582.0 L1364.3 582.3 L1360.2 582.6 L1356.1 583.0 L1352.0 583.3 L1347.9 583.6 L1343.8 583.9 L1339.7 584.3 L1335.6 584.7 L1331.5 585.0 L1327.4 585.4 L1323.4 585.8 L1319.3 586.2 L1315.2 586.6 L1311.2 587.0 L1307.2 587.4 L1303.1 587.9 L1299.1 588.3 L1295.1 588.8 L1291.1 589.3 L1287.1 589.8 L1283.1 590.3 L1279.1 590.8 L1275.2 591.3 L1271.2 591.8 L1267.3 592.4 L1263.3 593.0 L1259.4 593.5 L1255.5 594.1 L1251.6 594.7 L1247.7 595.4 L1243.8 596.0 L1240.0 596.6 L1236.1 597.3 L1232.3 598.0 L1228.5 598.7 L1224.7 599.4 L1220.9 600.1 L1217.2 600.9 L1213.4 601.7 L1209.7 602.4 L1206.0 603.3 L1202.3 604.1 L1198.6 604.9 L1195.0 605.8 L1191.4 606.7 L1187.8 607.6 L1184.2 608.5 L1180.6 609.4 L1177.1 610.4 L1173.6 611.4 M1954.5 506.8 L1949.8 506.8 L1945.2 506.8 L1940.5 506.8 L1935.9 506.8 L1931.2 506.8 L1926.6 506.8 L1921.9 506.8 L1917.3 506.8 L1912.6 506.8 L1908.0 506.8 L1903.3 506.8 L1898.7 506.8 L1894.0 506.8 L1889.4 506.8 L1884.7 506.8 L1880.1 506.8 L1875.4 506.8 L1870.8 506.8 L1866.1 506.8 L1861.5 506.8 L1856.8 506.8 L1852.2 506.8 L1847.5 506.8 L1842.9 506.8 L1838.2 506.8 L1833.6 506.8 L1828.9 506.8 L1824.3 506.8 L1819.6 506.8 L1815.0 506.8 L1810.3 506.8 L1805.7 506.8 L1801.0 506.8 L1796.4 506.8 L1791.7 506.8 L1787.1 506.8 L1782.4 506.8 L1777.8 506.8 L1773.1 506.8 L1768.5 506.8 L1763.8 506.8 L1759.2 506.8 L1754.5 506.8 L1749.9 506.8 L1745.2 506.8 L1740.6 506.8 L1735.9 506.8 L1731.3 506.8 L1726.6 506.8 L1722.0 506.8 L1717.3 506.8 L1712.7 506.8 L1708.0 506.8 L1703.4 506.8 L1698.7 506.8 L1694.1 506.8 L1689.4 506.8 L1684.8 506.8 L1680.1 506.8 L1675.5 506.8 L1670.8 506.8 L1666.2 506.8 L1661.5 506.8 L1656.9 506.8 L1652.2 506.8 L1647.6 506.8 L1642.9 506.8 L1638.3 506.8 L1633.6 506.8 L1629.0 506.8 L1624.3 506.8 L1619.7 506.8 L1615.0 506.8 L1610.4 506.8 L1605.7 506.8 L1601.1 506.8 L1596.4 506.8 L1591.8 506.8 L1587.1 506.8 L1582.5 506.8 L1577.8 506.8 L1573.2 506.8 L1568.5 506.8 L1563.9 506.8 L1559.2 506.8 L1554.6 506.8 L1549.9 506.8 L1545.3 506.8 L1540.6 506.8 L1536.0 506.8 L1531.4 506.8 L1526.7 506.8 L1522.1 506.8 L1517.4 506.8 L1512.8 506.8 L1508.1 506.8 L1503.5 506.8 L1498.8 506.8 L1494.2 506.8 L1489.5 506.8 L1484.9 506.8 L1480.2 506.8 L1475.6 506.8 L1470.9 506.8 L1466.3 506.8 L1461.6 506.8 L1457.0 506.8 L1452.3 506.8 L1447.7 506.8 L1443.0 506.8 L1438.4 506.8 L1433.7 506.8 L1429.1 506.8 L1424.4 506.8 L1419.8 506.8 L1415.1 506.8 L1410.5 506.8 L1405.8 506.8 L1401.2 506.8 L1396.5 506.8 L1391.9 506.8 L1387.2 506.8 L1382.6 506.8 L1377.9 506.8 L1373.3 506.8 L1368.6 506.8 L1364.0 506.8 L1359.3 506.8 L1354.7 506.8 L1350.0 506.8 L1345.4 506.8 L1340.7 506.8 L1336.1 506.8 L1331.4 506.8 L1326.8 506.8 L1322.1 506.8 L1317.5 506.8 L1312.8 506.8 L1308.2 506.8 L1303.5 506.8 L1298.9 506.8 L1294.2 506.8 L1289.6 506.8 L1284.9 506.8 L1280.3 506.8 L1275.6 506.8 L1271.0 506.8 L1266.3 506.8 L1261.7 506.8 L1257.0 506.8 L1252.4 506.8 L1247.7 506.8 L1243.1 506.8 L1238.4 506.8 L1233.8 506.8 L1229.1 506.8 L1224.5 506.8 L1219.8 506.8 L1215.2 506.8 L1210.5 506.8 L1205.9 506.8 L1201.2 506.8 L1196.6 506.8 L1191.9 506.8 L1187.3 506.8 L1182.6 506.8 L1178.0 506.8 L1173.3 506.8 L1168.7 506.8 L1164.0 506.8 L1159.4 506.8 L1154.7 506.8 L1150.1 506.8 L1145.4 506.8 L1140.8 506.8 L1136.1 506.8 L1131.5 506.8 L1126.8 506.8 L1122.2 506.8 L1117.5 506.8 M1898.4 403.6 L1894.9 404.6 L1891.4 405.5 L1887.8 406.5 L1884.2 407.4 L1880.6 408.3 L1877.0 409.2 L1873.4 410.0 L1869.7 410.8 L1866.0 411.6 L1862.3 412.4 L1858.6 413.2 L1854.8 414.0 L1851.1 414.7 L1847.3 415.4 L1843.5 416.1 L1839.7 416.8 L1835.9 417.5 L1832.0 418.2 L1828.2 418.8 L1824.3 419.4 L1820.4 420.0 L1816.5 420.6 L1812.6 421.2 L1808.7 421.8 L1804.7 422.4 L1800.8 422.9 L1796.8 423.4 L1792.9 424.0 L1788.9 424.5 L1784.9 424.9 L1780.9 425.4 L1776.9 425.9 L1772.9 426.4 L1768.9 426.8 L1764.8 427.2 L1760.8 427.7 L1756.8 428.1 L1752.7 428.5 L1748.6 428.9 L1744.6 429.3 L1740.5 429.6 L1736.4 430.0 L1732.3 430.4 L1728.2 430.7 L1724.1 431.0 L1720.0 431.4 L1715.9 431.7 L1711.8 432.0 L1707.7 432.3 L1703.6 432.6 L1699.4 432.8 L1695.3 433.1 L1691.1 433.4 L1687.0 433.6 L1682.9 433.9 L1678.7 434.1 L1674.5 434.4 L1670.4 434.6 L1666.2 434.8 L1662.0 435.0 L1657.9 435.2 L1653.7 435.4 L1649.5 435.6 L1645.3 435.8 L1641.2 435.9 L1637.0 436.1 L1632.8 436.3 L1628.6 436.4 L1624.4 436.6 L1620.2 436.7 L1616.0 436.8 L1611.8 436.9 L1607.6 437.1 L1603.4 437.2 L1599.2 437.3 L1595.0 437.4 L1590.8 437.5 L1586.6 437.5 L1582.4 437.6 L1578.2 437.7 L1573.9 437.7 L1569.7 437.8 L1565.5 437.8 L1561.3 437.9 L1557.1 437.9 L1552.9 437.9 L1548.6 438.0 L1544.4 438.0 L1540.2 438.0 L1536.0 438.0 L1531.8 438.0 L1527.6 438.0 L1523.4 438.0 L1519.1 437.9 L1514.9 437.9 L1510.7 437.9 L1506.5 437.8 L1502.3 437.8 L1498.1 437.7 L1493.8 437.7 L1489.6 437.6 L1485.4 437.5 L1481.2 437.5 L1477.0 437.4 L1472.8 437.3 L1468.6 437.2 L1464.4 437.1 L1460.2 436.9 L1456.0 436.8 L1451.8 436.7 L1447.6 436.6 L1443.4 436.4 L1439.2 436.3 L1435.0 436.1 L1430.8 435.9 L1426.7 435.8 L1422.5 435.6 L1418.3 435.4 L1414.1 435.2 L1410.0 435.0 L1405.8 434.8 L1401.6 434.6 L1397.5 434.4 L1393.3 434.1 L1389.1 433.9 L1385.0 433.6 L1380.9 433.4 L1376.7 433.1 L1372.6 432.8 L1368.4 432.6 L1364.3 432.3 L1360.2 432.0 L1356.1 431.7 L1352.0 431.4 L1347.9 431.0 L1343.8 430.7 L1339.7 430.4 L1335.6 430.0 L1331.5 429.6 L1327.4 429.3 L1323.4 428.9 L1319.3 428.5 L1315.2 428.1 L1311.2 427.7 L1307.2 427.2 L1303.1 426.8 L1299.1 426.4 L1295.1 425.9 L1291.1 425.4 L1287.1 424.9 L1283.1 424.5 L1279.1 424.0 L1275.2 423.4 L1271.2 422.9 L1267.3 422.4 L1263.3 421.8 L1259.4 421.2 L1255.5 420.6 L1251.6 420.0 L1247.7 419.4 L1243.8 418.8 L1240.0 418.2 L1236.1 417.5 L1232.3 416.8 L1228.5 416.1 L1224.7 415.4 L1220.9 414.7 L1217.2 414.0 L1213.4 413.2 L1209.7 412.4 L1206.0 411.6 L1202.3 410.8 L1198.6 410.0 L1195.0 409.2 L1191.4 408.3 L1187.8 407.4 L1184.2 406.5 L1180.6 405.5 L1177.1 404.6 L1173.6 403.6 M1745.2 328.1 L1744.0 329.0 L1742.8 330.0 L1741.5 331.0 L1740.2 331.9 L1738.8 332.8 L1737.4 333.8 L1736.0 334.7 L1734.5 335.6 L1733.0 336.4 L1731.4 337.3 L1729.8 338.2 L1728.1 339.0 L1726.4 339.8 L1724.7 340.6 L1723.0 341.4 L1721.2 342.2 L1719.4 343.0 L1717.5 343.7 L1715.6 344.5 L1713.7 345.2 L1711.8 345.9 L1709.8 346.7 L1707.8 347.4 L1705.8 348.0 L1703.7 348.7 L1701.6 349.4 L1699.5 350.0 L1697.4 350.7 L1695.2 351.3 L1693.0 351.9 L1690.8 352.5 L1688.6 353.1 L1686.3 353.6 L1684.1 354.2 L1681.8 354.8 L1679.5 355.3 L1677.1 355.8 L1674.8 356.4 L1672.4 356.9 L1670.0 357.4 L1667.6 357.8 L1665.2 358.3 L1662.7 358.8 L1660.3 359.2 L1657.8 359.7 L1655.3 360.1 L1652.8 360.5 L1650.3 360.9 L1647.7 361.3 L1645.2 361.7 L1642.6 362.1 L1640.0 362.5 L1637.4 362.8 L1634.8 363.2 L1632.2 363.5 L1629.6 363.8 L1626.9 364.1 L1624.3 364.4 L1621.6 364.7 L1619.0 365.0 L1616.3 365.3 L1613.6 365.6 L1610.9 365.8 L1608.2 366.1 L1605.5 366.3 L1602.8 366.5 L1600.0 366.8 L1597.3 367.0 L1594.6 367.2 L1591.8 367.4 L1589.1 367.5 L1586.3 367.7 L1583.5 367.9 L1580.8 368.0 L1578.0 368.2 L1575.2 368.3 L1572.4 368.4 L1569.6 368.5 L1566.9 368.6 L1564.1 368.7 L1561.3 368.8 L1558.5 368.9 L1555.7 369.0 L1552.9 369.0 L1550.0 369.1 L1547.2 369.1 L1544.4 369.2 L1541.6 369.2 L1538.8 369.2 L1536.0 369.2 L1533.2 369.2 L1530.4 369.2 L1527.6 369.2 L1524.8 369.1 L1522.0 369.1 L1519.1 369.0 L1516.3 369.0 L1513.5 368.9 L1510.7 368.8 L1507.9 368.7 L1505.1 368.6 L1502.4 368.5 L1499.6 368.4 L1496.8 368.3 L1494.0 368.2 L1491.2 368.0 L1488.5 367.9 L1485.7 367.7 L1482.9 367.5 L1480.2 367.4 L1477.4 367.2 L1474.7 367.0 L1472.0 366.8 L1469.2 366.5 L1466.5 366.3 L1463.8 366.1 L1461.1 365.8 L1458.4 365.6 L1455.7 365.3 L1453.0 365.0 L1450.4 364.7 L1447.7 364.4 L1445.1 364.1 L1442.4 363.8 L1439.8 363.5 L1437.2 363.2 L1434.6 362.8 L1432.0 362.5 L1429.4 362.1 L1426.8 361.7 L1424.3 361.3 L1421.7 360.9 L1419.2 360.5 L1416.7 360.1 L1414.2 359.7 L1411.7 359.2 L1409.3 358.8 L1406.8 358.3 L1404.4 357.8 L1402.0 357.4 L1399.6 356.9 L1397.2 356.4 L1394.9 355.8 L1392.5 355.3 L1390.2 354.8 L1387.9 354.2 L1385.7 353.6 L1383.4 353.1 L1381.2 352.5 L1379.0 351.9 L1376.8 351.3 L1374.6 350.7 L1372.5 350.0 L1370.4 349.4 L1368.3 348.7 L1366.2 348.0 L1364.2 347.4 L1362.2 346.7 L1360.2 345.9 L1358.3 345.2 L1356.4 344.5 L1354.5 343.7 L1352.6 343.0 L1350.8 342.2 L1349.0 341.4 L1347.3 340.6 L1345.6 339.8 L1343.9 339.0 L1342.2 338.2 L1340.6 337.3 L1339.0 336.4 L1337.5 335.6 L1336.0 334.7 L1334.6 333.8 L1333.2 332.8 L1331.8 331.9 L1330.5 331.0 L1329.2 330.0 L1328.0 329.0 L1326.8 328.1" fill="none" stroke="#b0b0b0" stroke-width="2.1"/><path d="M1520 300.4 H1556" stroke="#ababab" stroke-width="3"/><path d="M1516 716 H1556" stroke="#ababab" stroke-width="3"/><circle cx="1358.3" cy="317.3" r="9.6" fill="url(#Lr)" fill-opacity="0.92"/><circle cx="1503.2" cy="309.4" r="9.6" fill="url(#Lr)" fill-opacity="0.92"/><circle cx="1293.2" cy="347.6" r="9.6" fill="url(#Lr)" fill-opacity="0.92"/><circle cx="1308.9" cy="344.9" r="9.6" fill="url(#Lr)" fill-opacity="0.92"/><circle cx="1442.5" cy="348.7" r="9.6" fill="url(#Lr)" fill-opacity="0.92"/><circle cx="1479.6" cy="340.9" r="9.6" fill="url(#Lr)" fill-opacity="0.92"/><circle cx="1502.0" cy="339.7" r="9.6" fill="url(#Lr)" fill-opacity="0.92"/><circle cx="1492.0" cy="354.3" r="9.6" fill="url(#Lr)" fill-opacity="0.92"/><circle cx="1504.0" cy="348.5" r="9.6" fill="url(#Lr)" fill-opacity="0.92"/><circle cx="1532.4" cy="352.1" r="9.6" fill="url(#Lr)" fill-opacity="0.92"/><circle cx="1523.4" cy="366.7" r="9.6" fill="url(#Lr)" fill-opacity="0.92"/><circle cx="1273.0" cy="390.3" r="9.6" fill="url(#Lo)" fill-opacity="0.92"/><circle cx="1276.3" cy="379.0" r="9.6" fill="url(#Lr)" fill-opacity="0.92"/><circle cx="1305.5" cy="379.0" r="9.6" fill="url(#Lr)" fill-opacity="0.92"/><circle cx="1313.4" cy="372.3" r="9.6" fill="url(#Lr)" fill-opacity="0.92"/><circle cx="1206.7" cy="399.3" r="9.6" fill="url(#Lr)" fill-opacity="0.92"/><circle cx="1188.7" cy="417.2" r="9.6" fill="url(#Lr)" fill-opacity="0.92"/><circle cx="1201.0" cy="426.2" r="9.6" fill="url(#Lr)" fill-opacity="0.92"/><circle cx="1232.5" cy="422.8" r="9.6" fill="url(#Lr)" fill-opacity="0.92"/><circle cx="1376.3" cy="421.7" r="9.6" fill="url(#Lr)" fill-opacity="0.92"/><circle cx="1410.0" cy="410.5" r="9.6" fill="url(#Lr)" fill-opacity="0.92"/><circle cx="1494.2" cy="402.6" r="9.6" fill="url(#Lr)" fill-opacity="0.92"/><circle cx="1551.5" cy="411.6" r="9.6" fill="url(#Lr)" fill-opacity="0.92"/><circle cx="1134.1" cy="467.3" r="9.6" fill="url(#Lg)" fill-opacity="0.92"/><circle cx="1210.8" cy="457.8" r="9.6" fill="url(#Lr)" fill-opacity="0.92"/><circle cx="1312.6" cy="460.0" r="9.6" fill="url(#Lr)" fill-opacity="0.92"/><circle cx="1402.9" cy="453.6" r="9.6" fill="url(#Lr)" fill-opacity="0.92"/><circle cx="1436.5" cy="450.5" r="9.6" fill="url(#Lr)" fill-opacity="0.92"/><circle cx="1459.6" cy="446.3" r="9.6" fill="url(#Lr)" fill-opacity="0.92"/><circle cx="1456.4" cy="466.2" r="9.6" fill="url(#Lr)" fill-opacity="0.92"/><circle cx="1448.0" cy="454.7" r="9.6" fill="url(#Lg)" fill-opacity="0.92"/><circle cx="1458.5" cy="458.9" r="9.6" fill="url(#Lg)" fill-opacity="0.92"/><circle cx="1259.0" cy="476.7" r="9.6" fill="url(#Lm)" fill-opacity="0.92"/><circle cx="1489.0" cy="481.0" r="9.6" fill="url(#Ly)" fill-opacity="0.92"/><circle cx="1449.0" cy="485.0" r="9.6" fill="url(#Lg)" fill-opacity="0.92"/><circle cx="1185.6" cy="490.4" r="9.6" fill="url(#Lg)" fill-opacity="0.92"/><circle cx="1326.2" cy="487.2" r="9.6" fill="url(#Lr)" fill-opacity="0.92"/><circle cx="1350.4" cy="485.1" r="9.6" fill="url(#Lr)" fill-opacity="0.92"/><circle cx="1567.2" cy="302.7" r="9.6" fill="url(#Lr)" fill-opacity="0.92"/><circle cx="1580.6" cy="311.7" r="9.6" fill="url(#Lr)" fill-opacity="0.92"/><circle cx="1587.4" cy="299.3" r="9.6" fill="url(#Lr)" fill-opacity="0.92"/><circle cx="1594.0" cy="301.6" r="9.6" fill="url(#Lr)" fill-opacity="0.92"/><circle cx="1616.6" cy="306.0" r="9.6" fill="url(#Lr)" fill-opacity="0.92"/><circle cx="1596.4" cy="327.4" r="9.6" fill="url(#Lr)" fill-opacity="0.92"/><circle cx="1634.6" cy="322.9" r="9.6" fill="url(#Lr)" fill-opacity="0.92"/><circle cx="1699.7" cy="326.3" r="9.6" fill="url(#Lb)" fill-opacity="0.92"/><circle cx="1724.4" cy="330.8" r="9.6" fill="url(#Lg)" fill-opacity="0.92"/><circle cx="1618.8" cy="369.0" r="9.6" fill="url(#Lr)" fill-opacity="0.92"/><circle cx="1608.7" cy="370.0" r="9.6" fill="url(#Lg)" fill-opacity="0.92"/><circle cx="1832.2" cy="395.9" r="9.6" fill="url(#Lb)" fill-opacity="0.92"/><circle cx="1831.0" cy="415.0" r="9.6" fill="url(#Lr)" fill-opacity="0.92"/><circle cx="1857.0" cy="424.0" r="9.6" fill="url(#Lg)" fill-opacity="0.92"/><circle cx="1714.3" cy="421.7" r="9.6" fill="url(#Lr)" fill-opacity="0.92"/><circle cx="1576.2" cy="440.8" r="9.6" fill="url(#Lr)" fill-opacity="0.92"/><circle cx="1582.9" cy="447.6" r="9.6" fill="url(#Lr)" fill-opacity="0.92"/><circle cx="1609.8" cy="472.3" r="9.6" fill="url(#LG)" fill-opacity="0.92"/><circle cx="1613.2" cy="461.0" r="9.6" fill="url(#Lr)" fill-opacity="0.92"/><circle cx="1652.5" cy="458.8" r="9.6" fill="url(#Lr)" fill-opacity="0.92"/><circle cx="1744.6" cy="454.3" r="9.6" fill="url(#Lr)" fill-opacity="0.92"/><circle cx="1784.0" cy="456.5" r="9.6" fill="url(#Lr)" fill-opacity="0.92"/><circle cx="1846.8" cy="449.8" r="9.6" fill="url(#Lr)" fill-opacity="0.92"/><circle cx="1863.7" cy="472.3" r="9.6" fill="url(#Lr)" fill-opacity="0.92"/><circle cx="1923.2" cy="468.9" r="9.6" fill="url(#Lr)" fill-opacity="0.92"/><circle cx="1901.9" cy="479.0" r="9.6" fill="url(#Lm)" fill-opacity="0.92"/><circle cx="1921.0" cy="491.4" r="9.6" fill="url(#Lg)" fill-opacity="0.92"/><circle cx="1933.3" cy="497.0" r="9.6" fill="url(#LG)" fill-opacity="0.92"/><circle cx="1906.3" cy="504.8" r="9.6" fill="url(#Lg)" fill-opacity="0.92"/><circle cx="1133.0" cy="501.0" r="9.6" fill="url(#Lg)" fill-opacity="0.92"/><circle cx="1159.0" cy="501.0" r="9.6" fill="url(#Lg)" fill-opacity="0.92"/><circle cx="1194.0" cy="513.5" r="9.6" fill="url(#Lg)" fill-opacity="0.92"/><circle cx="1290.0" cy="502.0" r="9.6" fill="url(#Lg)" fill-opacity="0.92"/><circle cx="1299.0" cy="506.0" r="9.6" fill="url(#Lg)" fill-opacity="0.92"/><circle cx="1308.0" cy="502.0" r="9.6" fill="url(#Lg)" fill-opacity="0.92"/><circle cx="1317.0" cy="506.0" r="9.6" fill="url(#Lg)" fill-opacity="0.92"/><circle cx="1326.0" cy="502.0" r="9.6" fill="url(#Lg)" fill-opacity="0.92"/><circle cx="1335.0" cy="506.0" r="9.6" fill="url(#Lg)" fill-opacity="0.92"/><circle cx="1344.0" cy="502.0" r="9.6" fill="url(#Lg)" fill-opacity="0.92"/><circle cx="1353.0" cy="506.0" r="9.6" fill="url(#Lg)" fill-opacity="0.92"/><circle cx="1362.0" cy="502.0" r="9.6" fill="url(#Lg)" fill-opacity="0.92"/><circle cx="1371.0" cy="506.0" r="9.6" fill="url(#Lg)" fill-opacity="0.92"/><circle cx="1380.0" cy="502.0" r="9.6" fill="url(#Lg)" fill-opacity="0.92"/><circle cx="1389.0" cy="506.0" r="9.6" fill="url(#Lg)" fill-opacity="0.92"/><circle cx="1398.0" cy="502.0" r="9.6" fill="url(#Lg)" fill-opacity="0.92"/><circle cx="1407.0" cy="506.0" r="9.6" fill="url(#Lg)" fill-opacity="0.92"/><circle cx="1416.0" cy="502.0" r="9.6" fill="url(#Lg)" fill-opacity="0.92"/><circle cx="1425.0" cy="506.0" r="9.6" fill="url(#Lg)" fill-opacity="0.92"/><circle cx="1434.0" cy="502.0" r="9.6" fill="url(#Lg)" fill-opacity="0.92"/><circle cx="1443.0" cy="506.0" r="9.6" fill="url(#Lg)" fill-opacity="0.92"/><circle cx="1452.0" cy="502.0" r="9.6" fill="url(#Lg)" fill-opacity="0.92"/><circle cx="1461.0" cy="506.0" r="9.6" fill="url(#Lg)" fill-opacity="0.92"/><circle cx="1470.0" cy="502.0" r="9.6" fill="url(#Lg)" fill-opacity="0.92"/><circle cx="1479.0" cy="506.0" r="9.6" fill="url(#Lg)" fill-opacity="0.92"/><circle cx="1488.0" cy="502.0" r="9.6" fill="url(#Lg)" fill-opacity="0.92"/><circle cx="1497.0" cy="506.0" r="9.6" fill="url(#Lg)" fill-opacity="0.92"/><circle cx="1506.0" cy="502.0" r="9.6" fill="url(#Lg)" fill-opacity="0.92"/><circle cx="1515.0" cy="506.0" r="9.6" fill="url(#Lg)" fill-opacity="0.92"/><circle cx="1524.0" cy="502.0" r="9.6" fill="url(#Lg)" fill-opacity="0.92"/><circle cx="1533.0" cy="506.0" r="9.6" fill="url(#Lg)" fill-opacity="0.92"/><circle cx="1542.0" cy="502.0" r="9.6" fill="url(#Lg)" fill-opacity="0.92"/><circle cx="1296.0" cy="513.0" r="9.6" fill="url(#Lg)" fill-opacity="0.92"/><circle cx="1310.0" cy="511.0" r="9.6" fill="url(#Lg)" fill-opacity="0.92"/><circle cx="1324.0" cy="511.0" r="9.6" fill="url(#Lg)" fill-opacity="0.92"/><circle cx="1338.0" cy="513.0" r="9.6" fill="url(#Lg)" fill-opacity="0.92"/><circle cx="1352.0" cy="511.0" r="9.6" fill="url(#Lg)" fill-opacity="0.92"/><circle cx="1366.0" cy="511.0" r="9.6" fill="url(#Lg)" fill-opacity="0.92"/><circle cx="1380.0" cy="513.0" r="9.6" fill="url(#Lg)" fill-opacity="0.92"/><circle cx="1394.0" cy="511.0" r="9.6" fill="url(#Lg)" fill-opacity="0.92"/><circle cx="1408.0" cy="511.0" r="9.6" fill="url(#Lg)" fill-opacity="0.92"/><circle cx="1422.0" cy="513.0" r="9.6" fill="url(#Lg)" fill-opacity="0.92"/><circle cx="1436.0" cy="511.0" r="9.6" fill="url(#Lg)" fill-opacity="0.92"/><circle cx="1450.0" cy="511.0" r="9.6" fill="url(#Lg)" fill-opacity="0.92"/><circle cx="1464.0" cy="513.0" r="9.6" fill="url(#Lg)" fill-opacity="0.92"/><circle cx="1478.0" cy="511.0" r="9.6" fill="url(#Lg)" fill-opacity="0.92"/><circle cx="1492.0" cy="511.0" r="9.6" fill="url(#Lg)" fill-opacity="0.92"/><circle cx="1506.0" cy="513.0" r="9.6" fill="url(#Lg)" fill-opacity="0.92"/><circle cx="1520.0" cy="511.0" r="9.6" fill="url(#Lg)" fill-opacity="0.92"/><circle cx="1534.0" cy="511.0" r="9.6" fill="url(#Lg)" fill-opacity="0.92"/><circle cx="1189.8" cy="503.0" r="9.6" fill="url(#Lm)" fill-opacity="0.92"/><circle cx="1230.7" cy="496.7" r="9.6" fill="url(#Lm)" fill-opacity="0.92"/><circle cx="1218.0" cy="503.0" r="9.6" fill="url(#Ly)" fill-opacity="0.92"/><circle cx="1246.5" cy="503.0" r="9.6" fill="url(#Lg)" fill-opacity="0.92"/><circle cx="1249.6" cy="516.6" r="9.6" fill="url(#Lr)" fill-opacity="0.92"/><circle cx="1257.0" cy="501.0" r="9.6" fill="url(#LG)" fill-opacity="0.92"/><circle cx="1260.0" cy="520.8" r="9.6" fill="url(#Lg)" fill-opacity="0.92"/><circle cx="1273.8" cy="511.4" r="9.6" fill="url(#LG)" fill-opacity="0.92"/><circle cx="1286.4" cy="501.0" r="9.6" fill="url(#Lg)" fill-opacity="0.92"/><circle cx="1298.0" cy="503.0" r="9.6" fill="url(#Lg)" fill-opacity="0.92"/><circle cx="1319.2" cy="499.8" r="9.6" fill="url(#Lg)" fill-opacity="0.92"/><circle cx="1325.5" cy="485.2" r="9.6" fill="url(#Lr)" fill-opacity="0.92"/><circle cx="1350.3" cy="485.9" r="9.6" fill="url(#Lr)" fill-opacity="0.92"/><circle cx="1345.9" cy="495.4" r="9.6" fill="url(#Lg)" fill-opacity="0.92"/><circle cx="1334.4" cy="504.3" r="9.6" fill="url(#Lg)" fill-opacity="0.92"/><circle cx="1343.3" cy="504.3" r="9.6" fill="url(#Lm)" fill-opacity="0.92"/><circle cx="1357.3" cy="505.5" r="9.6" fill="url(#Lg)" fill-opacity="0.92"/><circle cx="1363.6" cy="515.7" r="9.6" fill="url(#Lg)" fill-opacity="0.92"/><circle cx="1372.5" cy="500.5" r="9.6" fill="url(#Lg)" fill-opacity="0.92"/><circle cx="1381.4" cy="505.5" r="9.6" fill="url(#Lg)" fill-opacity="0.92"/><circle cx="1390.0" cy="510.0" r="9.6" fill="url(#Lg)" fill-opacity="0.92"/><circle cx="1399.2" cy="504.3" r="9.6" fill="url(#Lg)" fill-opacity="0.92"/><circle cx="1409.3" cy="491.6" r="9.6" fill="url(#Lg)" fill-opacity="0.92"/><circle cx="1415.7" cy="503.0" r="9.6" fill="url(#Lg)" fill-opacity="0.92"/><circle cx="1425.0" cy="507.0" r="9.6" fill="url(#Lg)" fill-opacity="0.92"/><circle cx="1415.0" cy="528.4" r="9.6" fill="url(#Lg)" fill-opacity="0.92"/><circle cx="1448.7" cy="485.2" r="9.6" fill="url(#Lg)" fill-opacity="0.92"/><circle cx="1441.0" cy="517.0" r="9.6" fill="url(#Ly)" fill-opacity="0.92"/><circle cx="1438.5" cy="505.5" r="9.6" fill="url(#Lg)" fill-opacity="0.92"/><circle cx="1450.0" cy="510.0" r="9.6" fill="url(#Lg)" fill-opacity="0.92"/><circle cx="1458.8" cy="504.3" r="9.6" fill="url(#Lg)" fill-opacity="0.92"/><circle cx="1466.0" cy="508.0" r="9.6" fill="url(#Lg)" fill-opacity="0.92"/><circle cx="1475.3" cy="504.3" r="9.6" fill="url(#Lg)" fill-opacity="0.92"/><circle cx="1488.7" cy="481.4" r="9.6" fill="url(#Ly)" fill-opacity="0.92"/><circle cx="1485.0" cy="508.0" r="9.6" fill="url(#Lg)" fill-opacity="0.92"/><circle cx="1494.4" cy="496.7" r="9.6" fill="url(#Lg)" fill-opacity="0.92"/><circle cx="1508.4" cy="504.3" r="9.6" fill="url(#Lg)" fill-opacity="0.92"/><circle cx="1495.0" cy="508.1" r="9.6" fill="url(#Ly)" fill-opacity="0.92"/><circle cx="1524.9" cy="499.2" r="9.6" fill="url(#Lb)" fill-opacity="0.92"/><circle cx="1522.3" cy="515.7" r="9.6" fill="url(#LG)" fill-opacity="0.92"/><circle cx="1535.0" cy="505.5" r="9.6" fill="url(#Lg)" fill-opacity="0.92"/><circle cx="1549.0" cy="506.8" r="9.6" fill="url(#LG)" fill-opacity="0.92"/><circle cx="1545.0" cy="510.0" r="9.6" fill="url(#Lg)" fill-opacity="0.92"/><circle cx="1580.0" cy="508.0" r="9.6" fill="url(#Lg)" fill-opacity="0.92"/><circle cx="1600.0" cy="512.0" r="9.6" fill="url(#Lg)" fill-opacity="0.92"/><circle cx="1625.0" cy="503.0" r="9.6" fill="url(#Lg)" fill-opacity="0.92"/><circle cx="1660.0" cy="510.0" r="9.6" fill="url(#Lg)" fill-opacity="0.92"/><circle cx="1682.0" cy="507.0" r="9.6" fill="url(#Lg)" fill-opacity="0.92"/><circle cx="1552.0" cy="500.0" r="9.6" fill="url(#LG)" fill-opacity="0.92"/><circle cx="1647.6" cy="459.0" r="9.6" fill="url(#Lr)" fill-opacity="0.92"/><circle cx="1561.5" cy="505.0" r="9.6" fill="url(#LG)" fill-opacity="0.92"/><circle cx="1586.7" cy="503.0" r="9.6" fill="url(#Lg)" fill-opacity="0.92"/><circle cx="1576.2" cy="513.5" r="9.6" fill="url(#Ly)" fill-opacity="0.92"/><circle cx="1565.7" cy="507.0" r="9.6" fill="url(#LG)" fill-opacity="0.92"/><circle cx="1597.2" cy="507.0" r="9.6" fill="url(#LG)" fill-opacity="0.92"/><circle cx="1614.0" cy="509.3" r="9.6" fill="url(#Lm)" fill-opacity="0.92"/><circle cx="1620.3" cy="507.0" r="9.6" fill="url(#LG)" fill-opacity="0.92"/><circle cx="1635.0" cy="517.7" r="9.6" fill="url(#Lg)" fill-opacity="0.92"/><circle cx="1647.6" cy="501.0" r="9.6" fill="url(#Lm)" fill-opacity="0.92"/><circle cx="1630.8" cy="509.3" r="9.6" fill="url(#Lm)" fill-opacity="0.92"/><circle cx="1654.0" cy="513.5" r="9.6" fill="url(#Lm)" fill-opacity="0.92"/><circle cx="1667.5" cy="506.0" r="9.6" fill="url(#Lm)" fill-opacity="0.92"/><circle cx="1693.8" cy="507.0" r="9.6" fill="url(#Lm)" fill-opacity="0.92"/><circle cx="1714.8" cy="511.4" r="9.6" fill="url(#Lm)" fill-opacity="0.92"/><circle cx="1706.4" cy="506.0" r="9.6" fill="url(#Ly)" fill-opacity="0.92"/><circle cx="1731.6" cy="525.0" r="9.6" fill="url(#Lr)" fill-opacity="0.92"/><circle cx="1763.0" cy="515.6" r="9.6" fill="url(#Lm)" fill-opacity="0.92"/><circle cx="1755.7" cy="509.3" r="9.6" fill="url(#LG)" fill-opacity="0.92"/><circle cx="1895.0" cy="515.6" r="9.6" fill="url(#Ly)" fill-opacity="0.92"/><circle cx="1895.3" cy="509.3" r="9.6" fill="url(#Lm)" fill-opacity="0.92"/><circle cx="1905.8" cy="505.0" r="9.6" fill="url(#Lg)" fill-opacity="0.92"/><circle cx="1942.5" cy="515.6" r="9.6" fill="url(#Lm)" fill-opacity="0.92"/><circle cx="1940.5" cy="538.7" r="9.6" fill="url(#Lr)" fill-opacity="0.92"/><circle cx="1941.5" cy="526.0" r="9.6" fill="url(#Lm)" fill-opacity="0.92"/><circle cx="1221.3" cy="533.7" r="9.6" fill="url(#Lr)" fill-opacity="0.92"/><circle cx="1273.0" cy="534.8" r="9.6" fill="url(#Lr)" fill-opacity="0.92"/><circle cx="1320.1" cy="533.7" r="9.6" fill="url(#Lr)" fill-opacity="0.92"/><circle cx="1415.6" cy="530.3" r="9.6" fill="url(#Lg)" fill-opacity="0.92"/><circle cx="1192.1" cy="548.3" r="9.6" fill="url(#Lr)" fill-opacity="0.92"/><circle cx="1221.3" cy="557.3" r="9.6" fill="url(#Lg)" fill-opacity="0.92"/><circle cx="1228.0" cy="559.5" r="9.6" fill="url(#Lg)" fill-opacity="0.92"/><circle cx="1313.4" cy="556.2" r="9.6" fill="url(#Lr)" fill-opacity="0.92"/><circle cx="1246.0" cy="574.1" r="9.6" fill="url(#Lr)" fill-opacity="0.92"/><circle cx="1225.8" cy="578.6" r="9.6" fill="url(#Lr)" fill-opacity="0.92"/><circle cx="1511.0" cy="569.6" r="9.6" fill="url(#Lr)" fill-opacity="0.92"/><circle cx="1552.6" cy="583.1" r="9.6" fill="url(#Lr)" fill-opacity="0.92"/><circle cx="1357.2" cy="592.1" r="9.6" fill="url(#Lr)" fill-opacity="0.92"/><circle cx="1204.4" cy="610.0" r="9.6" fill="url(#Lr)" fill-opacity="0.92"/><circle cx="1241.5" cy="619.0" r="9.6" fill="url(#Lr)" fill-opacity="0.92"/><circle cx="1293.2" cy="619.0" r="9.6" fill="url(#Lr)" fill-opacity="0.92"/><circle cx="1314.5" cy="634.8" r="9.6" fill="url(#Lr)" fill-opacity="0.92"/><circle cx="1505.4" cy="630.3" r="9.6" fill="url(#Lr)" fill-opacity="0.92"/><circle cx="1416.7" cy="664.0" r="9.6" fill="url(#Lr)" fill-opacity="0.92"/><circle cx="1547.0" cy="665.1" r="9.6" fill="url(#Lr)" fill-opacity="0.92"/><circle cx="1332.5" cy="670.7" r="9.6" fill="url(#Lr)" fill-opacity="0.92"/><circle cx="1486.3" cy="690.9" r="9.6" fill="url(#Lr)" fill-opacity="0.92"/><circle cx="1490.8" cy="701.0" r="9.6" fill="url(#Lr)" fill-opacity="0.92"/><circle cx="1526.8" cy="688.7" r="9.6" fill="url(#Lr)" fill-opacity="0.92"/><circle cx="1523.4" cy="713.4" r="9.6" fill="url(#Lo)" fill-opacity="0.92"/><circle cx="1795.2" cy="561.8" r="9.6" fill="url(#Lr)" fill-opacity="0.92"/><circle cx="1798.5" cy="579.7" r="9.6" fill="url(#Lr)" fill-opacity="0.92"/><circle cx="1898.5" cy="571.9" r="9.6" fill="url(#Lr)" fill-opacity="0.92"/><circle cx="1702.0" cy="587.6" r="9.6" fill="url(#LG)" fill-opacity="0.92"/><circle cx="1707.6" cy="586.5" r="9.6" fill="url(#Ly)" fill-opacity="0.92"/><circle cx="1746.9" cy="613.4" r="9.6" fill="url(#Lr)" fill-opacity="0.92"/><circle cx="1865.9" cy="615.7" r="9.6" fill="url(#Lr)" fill-opacity="0.92"/><circle cx="1740.1" cy="655.0" r="9.6" fill="url(#Lr)" fill-opacity="0.92"/><circle cx="1749.1" cy="648.2" r="9.6" fill="url(#Lr)" fill-opacity="0.92"/><circle cx="1800.8" cy="644.9" r="9.6" fill="url(#Lr)" fill-opacity="0.92"/><circle cx="1717.7" cy="673.0" r="9.6" fill="url(#Lr)" fill-opacity="0.92"/><circle cx="1673.9" cy="679.7" r="9.6" fill="url(#Lr)" fill-opacity="0.92"/><circle cx="1769.3" cy="673.0" r="9.6" fill="url(#Lr)" fill-opacity="0.92"/></svg>
<svg style="left:0;top:0" width="2048" height="1284" viewBox="0 0 2048 1284"><text x="1513.3" y="290.3" style="font-family:Liberation Sans,sans-serif" font-size="23.5" fill="#fff" textLength="35.600000000000136" lengthAdjust="spacingAndGlyphs">+90</text><circle cx="1552.8" cy="270.1" r="2.3" fill="none" stroke="#fff" stroke-width="1.4"/></svg>
<svg style="left:0;top:0" width="2048" height="1284" viewBox="0 0 2048 1284"><text x="1518.4" y="747.8" style="font-family:Liberation Sans,sans-serif" font-size="23.5" fill="#fff" textLength="31.0" lengthAdjust="spacingAndGlyphs">-90</text><circle cx="1550.4" cy="727.1" r="2.3" fill="none" stroke="#fff" stroke-width="1.4"/></svg>
<svg style="left:0;top:0" width="2048" height="1284" viewBox="0 0 2048 1284"><text x="1059.4" y="516.7" style="font-family:Liberation Sans,sans-serif" font-size="23.5" fill="#fff" textLength="48.0" lengthAdjust="spacingAndGlyphs">+180</text><circle cx="1107.8" cy="496.4" r="2.3" fill="none" stroke="#fff" stroke-width="1.4"/></svg>
<svg style="left:0;top:0" width="2048" height="1284" viewBox="0 0 2048 1284"><text x="1960.9" y="514.4" style="font-family:Liberation Sans,sans-serif" font-size="23.5" fill="#fff" textLength="42.19999999999982" lengthAdjust="spacingAndGlyphs">-180</text><circle cx="2012.1" cy="493.7" r="2.3" fill="none" stroke="#fff" stroke-width="1.4"/></svg>
<div class="abs" style="left:1053px;top:783px;width:20px;height:14px;background:#6e6e6e"></div>
<div class="abs" style="left:1059px;top:783px;width:989px;height:501px;background:#1e1e1e;border-radius:10px 0 0 0;overflow:hidden;box-shadow:0 0 0 1px #555">
<div class="abs" style="left:0;top:0;width:989px;height:32px;background:#3d3243;border-bottom:1px solid #1a141c"></div>
</div>
<div class="abs" style="left:1068px;top:792px;width:14px;height:14px;border-radius:50%;background:#ec6a5e"></div>
<div class="abs" style="left:1091px;top:792px;width:14px;height:14px;border-radius:50%;background:#f4bf4f"></div>
<div class="abs" style="left:1114px;top:792px;width:14px;height:14px;border-radius:50%;background:#61c554"></div>
<div class="abs" style="left:1071px;top:796px;width:6px;height:6px;border-radius:50%;background:#8a1a12"></div>
<svg style="left:1430px;top:790px" width="18" height="16" viewBox="0 0 18 16"><path d="M1 2h6l2 2h8v11H1z" fill="#5a8ac8"/><path d="M1 6h16v9H1z" fill="#78a8e0"/></svg>
<div class="t" style="left:1451px;top:791px;font-size:15.6px;color:#b5aab8;font-weight:bold">laptopstudy — python — 94×25</div>
<pre class="abs" style="left:1064px;top:819px;font-family:'Liberation Mono',monospace;font-size:17.2px;line-height:20.62px;color:#ebebeb;-webkit-text-stroke:0.12px #ebebeb;white-space:pre">Traceback (most recent call last):
  File "&lt;stdin&gt;", line 1, in &lt;module&gt;
NameError: name 'scatter' is not defined
&gt;&gt;&gt; cbar_distance.set_label('Distance (Mpc)', fontsize=12)
Traceback (most recent call last):
  File "&lt;stdin&gt;", line 1, in &lt;module&gt;
NameError: name 'cbar_distance' is not defined
&gt;&gt;&gt;
&gt;&gt;&gt; # Enhance grid and labels
&gt;&gt;&gt; ax.grid(True, color='white', linestyle='--', linewidth=0.5)
&gt;&gt;&gt; ax.tick_params(axis='both', which='major', labelsize=10)
&gt;&gt;&gt;
&gt;&gt;&gt; # Add legend for clarity (optional since only events are plotted)
&gt;&gt;&gt; # ax.legend(loc='upper right')
&gt;&gt;&gt;
&gt;&gt;&gt; # Remove titles and axis labels as per your request
&gt;&gt;&gt; # ax.set_title('KDE Density Map of Events with Distances', fontsize=14)
&gt;&gt;&gt; # ax.set_xlabel('Galactic Longitude (l)', fontsize=12)
&gt;&gt;&gt; # ax.set_ylabel('Galactic Latitude (b)', fontsize=12)
&gt;&gt;&gt;
&gt;&gt;&gt; # Adjust layout for better spacing
&gt;&gt;&gt; plt.tight_layout()
&gt;&gt;&gt;</pre>
<div class="abs" style="left:2036px;top:818px;width:12px;height:466px;background:#232323;border-left:1px solid #2e2e2e"></div>
</body></html>
